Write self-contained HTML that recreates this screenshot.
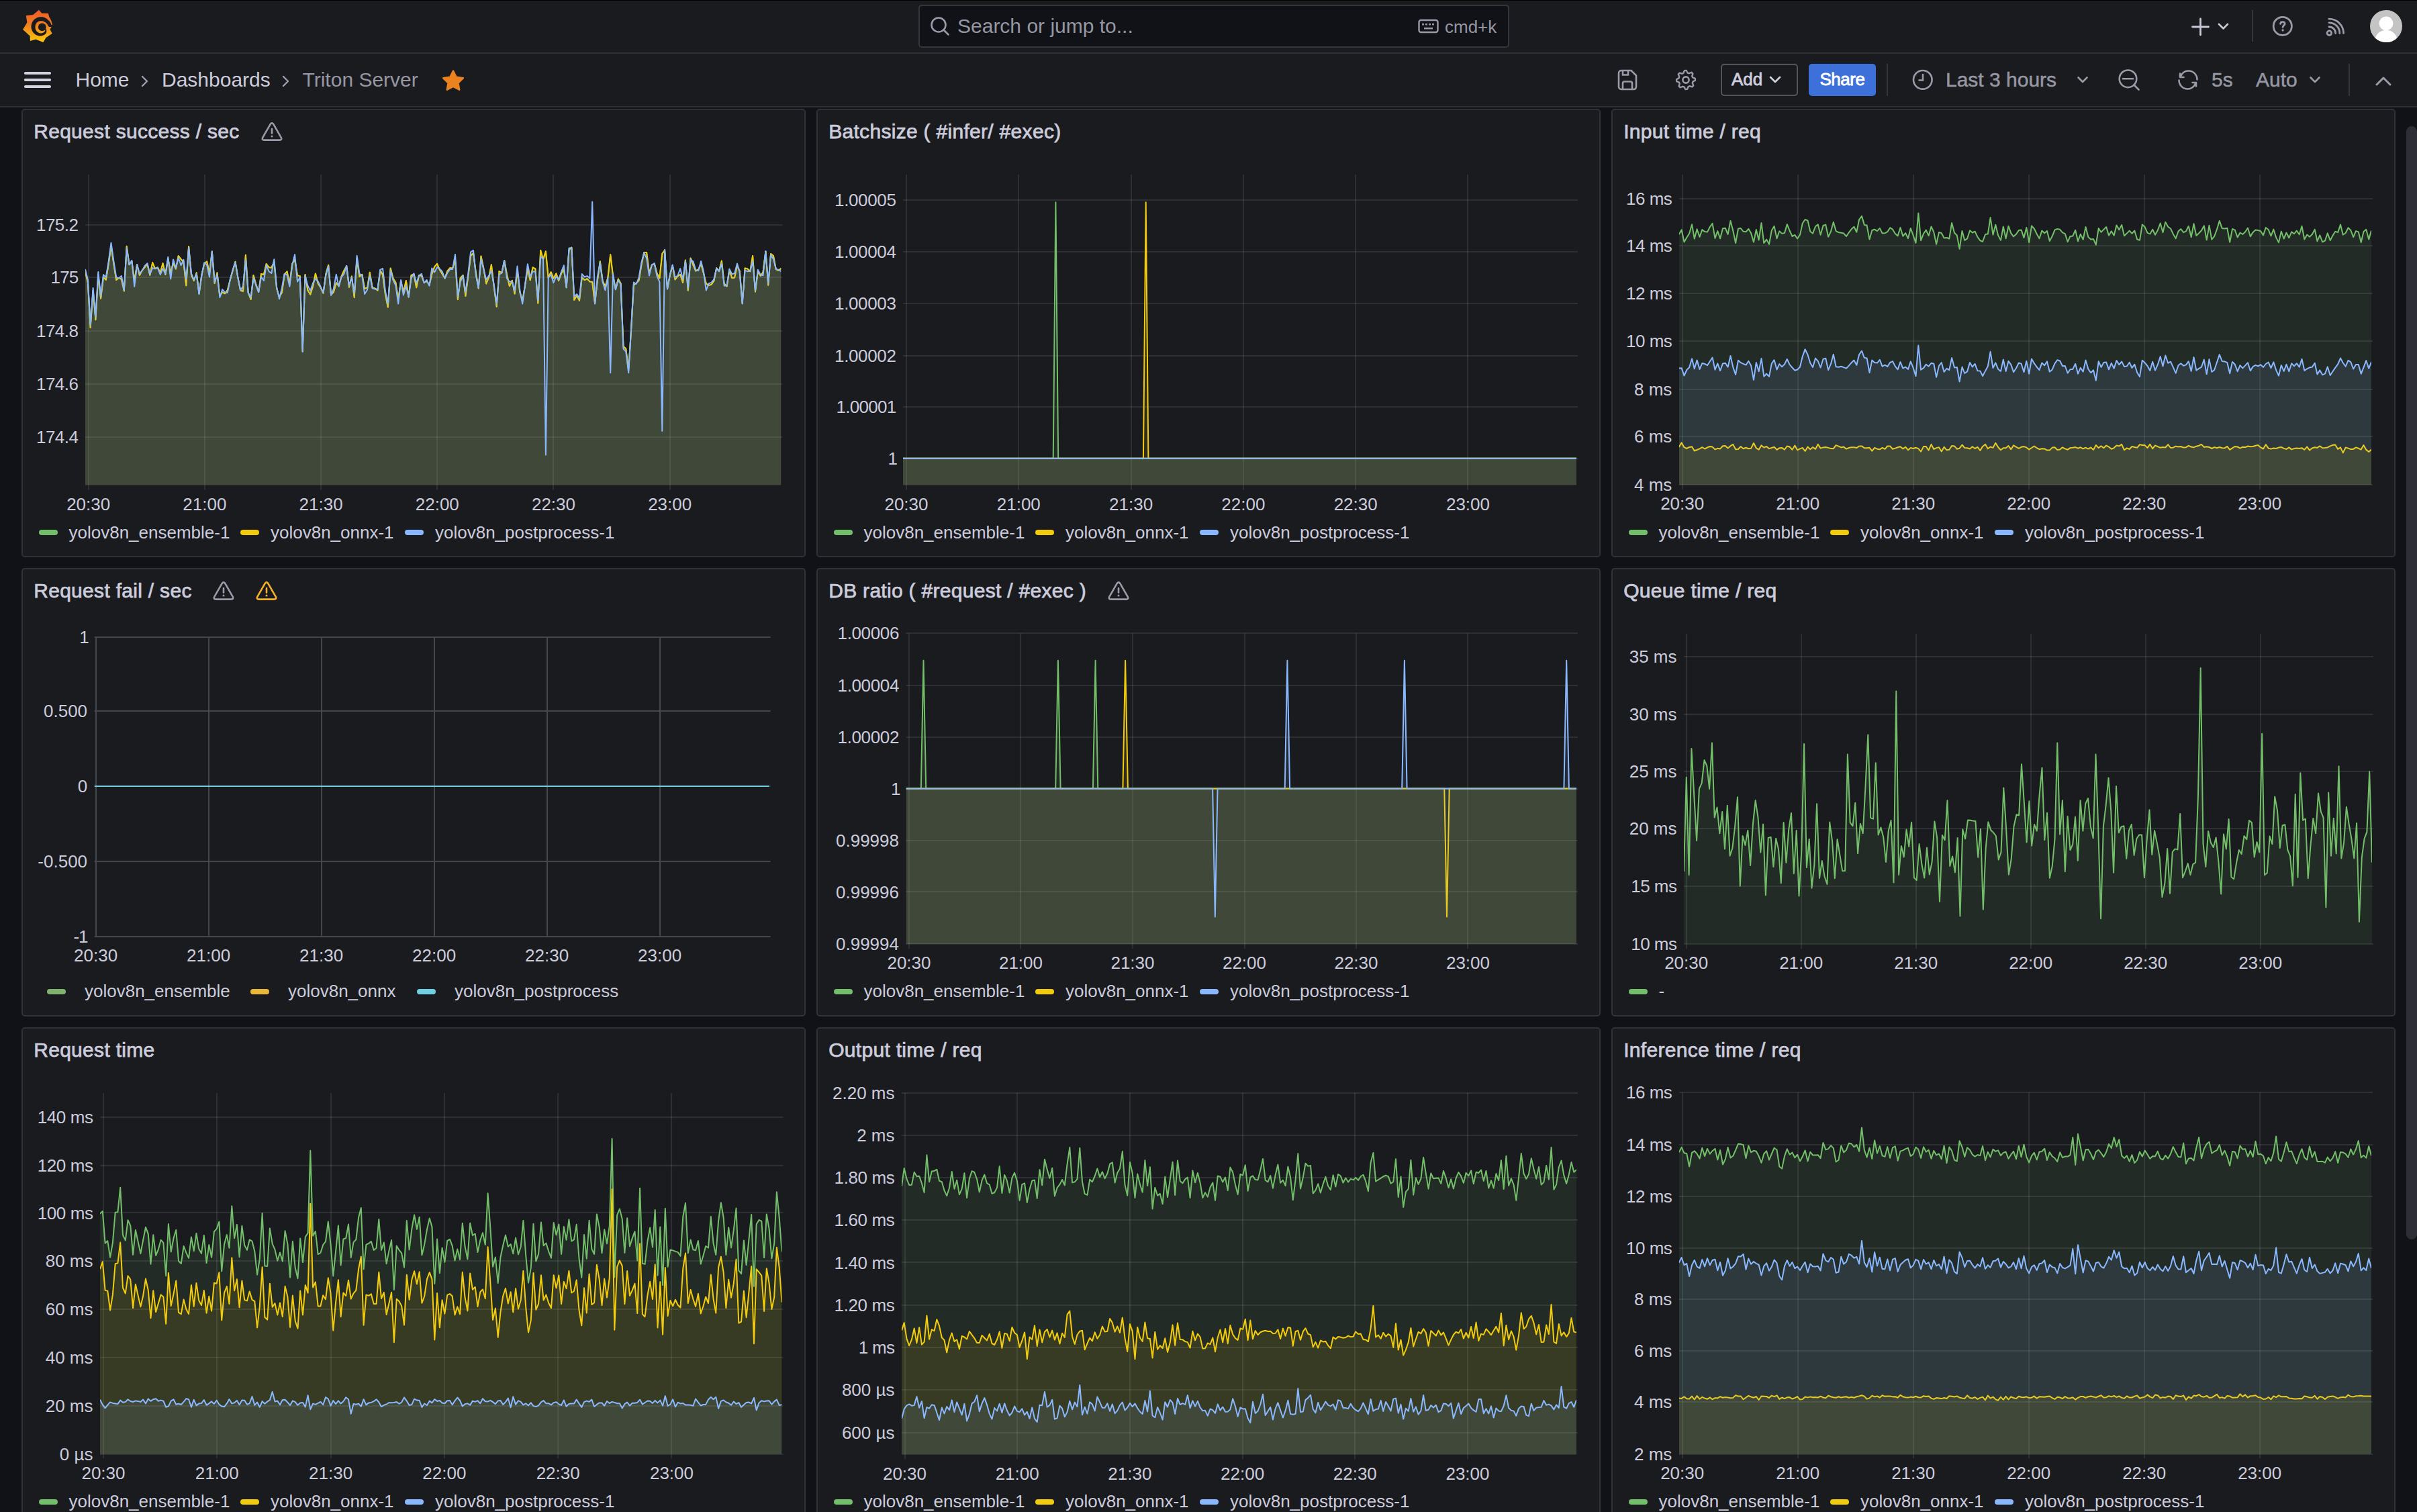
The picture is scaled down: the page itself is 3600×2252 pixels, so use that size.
<!DOCTYPE html><html><head><meta charset="utf-8"><style>
html,body{margin:0;padding:0}
body{width:3600px;height:2252px;background:#111217;overflow:hidden;position:relative;font-family:"Liberation Sans",sans-serif;}
</style></head><body>
<div style="position:absolute;left:0;top:0;width:3600px;height:78px;background:#1a1b1f;"></div>
<div style="position:absolute;left:0;top:0;width:3600px;height:1px;background:#000;"></div>
<div style="position:absolute;left:0;top:78px;width:3600px;height:2px;background:#2e3138;"></div>
<div style="position:absolute;left:0;top:80px;width:3600px;height:78px;background:#1a1b1f;"></div>
<div style="position:absolute;left:0;top:158px;width:3600px;height:2px;background:#2e3138;"></div>
<svg style="position:absolute;left:0;top:0" width="100" height="78" viewBox="0 0 100 78">
<defs><linearGradient id="lg" x1="0" y1="15" x2="0" y2="63" gradientUnits="userSpaceOnUse"><stop offset="0" stop-color="#F05A28"/><stop offset="0.45" stop-color="#F07F22"/><stop offset="1" stop-color="#FBCA0A"/></linearGradient></defs>
<path fill="url(#lg)" d="M57.9 14.8 L62.3 19.8 L71.9 19.9 L73.3 25.6 C75.6 28.8 77.6 33 78 37.8 L74.5 43.8 L77.6 50 L68.6 55.9 L64.3 62.9 L53.2 58.4 L45 61 L44.6 53.4 L34 44.1 L40.4 33.4 L38.8 23.3 L49.3 22 Z"/>
<path fill="#1a1b1f" d="M79.50 40.00 L78.52 38.74 L77.47 37.62 L76.35 36.63 L75.96 35.57 L75.50 34.54 L74.97 33.56 L74.38 32.62 L73.72 31.74 L73.02 30.91 L72.26 30.13 L71.46 29.42 L70.65 28.72 L69.82 28.07 L68.95 27.48 L68.03 26.95 L67.09 26.49 L66.12 26.10 L65.12 25.77 L64.11 25.52 L63.09 25.34 L62.05 25.23 L61.02 25.19 L59.98 25.23 L58.96 25.33 L57.95 25.51 L56.95 25.76 L55.98 26.08 L55.03 26.46 L54.11 26.91 L53.23 27.41 L52.39 27.98 L51.60 28.60 L50.85 29.28 L50.15 30.00 L49.50 30.77 L48.91 31.58 L48.39 32.43 L47.92 33.31 L47.52 34.22 L47.18 35.15 L46.91 36.10 L46.70 37.07 L46.57 38.04 L46.50 39.02 L46.50 40.00 L46.55 40.98 L46.67 41.94 L46.86 42.90 L47.11 43.84 L47.43 44.76 L47.81 45.65 L48.25 46.51 L48.75 47.34 L49.30 48.13 L49.91 48.88 L50.57 49.59 L51.27 50.25 L52.02 50.85 L52.81 51.40 L53.63 51.89 L54.49 52.33 L55.37 52.70 L56.27 53.01 L57.19 53.26 L58.13 53.44 L59.08 53.55 L60.03 53.60 L60.97 53.54 L61.91 53.38 L62.82 53.15 L63.71 52.86 L64.56 52.51 L65.39 52.10 L66.18 51.64 L66.92 51.13 L67.63 50.57 L68.29 49.97 L68.77 49.18 L69.03 48.24 L69.20 47.30 L69.29 46.39 L69.29 45.49 L69.22 44.63 L68.99 43.78 L68.46 42.90 L67.85 42.11 L67.17 41.42 L66.44 40.84 L66.44 40.84 L66.71 41.32 L66.95 41.85 L67.13 42.41 L67.27 43.01 L67.32 43.63 L67.31 44.26 L67.24 44.90 L67.12 45.55 L66.93 46.21 L66.69 46.87 L66.29 47.42 L65.77 47.82 L65.22 48.18 L64.65 48.51 L64.06 48.80 L63.44 49.04 L62.81 49.25 L62.16 49.40 L61.50 49.52 L60.83 49.58 L60.17 49.56 L59.51 49.43 L58.87 49.27 L58.24 49.06 L57.64 48.81 L57.06 48.52 L56.51 48.19 L55.98 47.82 L55.49 47.43 L55.03 47.00 L54.61 46.54 L54.22 46.07 L53.87 45.56 L53.56 45.04 L53.29 44.51 L53.06 43.96 L52.87 43.40 L52.72 42.83 L52.62 42.26 L52.55 41.69 L52.53 41.12 L52.54 40.56 L52.60 40.00 L52.58 39.45 L52.60 38.89 L52.66 38.33 L52.75 37.78 L52.89 37.23 L53.06 36.69 L53.28 36.16 L53.53 35.64 L53.82 35.14 L54.14 34.66 L54.50 34.21 L54.89 33.77 L55.32 33.36 L55.77 32.99 L56.25 32.64 L56.76 32.32 L57.29 32.04 L57.84 31.80 L58.40 31.60 L58.99 31.43 L59.59 31.31 L60.19 31.23 L60.81 31.17 L61.43 31.14 L62.06 31.16 L62.69 31.22 L63.32 31.33 L63.94 31.48 L64.56 31.68 L65.17 31.92 L65.76 32.20 L66.33 32.53 L66.89 32.91 L67.44 33.30 L68.02 33.69 L68.58 34.13 L69.11 34.62 L69.61 35.15 L70.08 35.73 L70.52 36.35 L70.91 37.01 L71.26 37.71 L71.89 38.40 L72.47 39.16 L73.00 40.00 Z"/>
<circle cx="62.8" cy="40.3" r="5.9" fill="#1a1b1f"/>
<path fill="url(#lg)" d="M56.8 45.2 C59.5 47.3 62.5 47.5 64.6 46.3 C63.8 48.6 60.5 49.4 58 48.2 Z"/>
</svg>
<div style="position:absolute;left:1368px;top:7px;width:876px;height:60px;background:#111217;border:2px solid #34363c;border-radius:5px;"></div>
<svg style="position:absolute;left:1384px;top:24px" width="32" height="30" viewBox="0 0 32 30"><circle cx="14" cy="13" r="10.5" fill="none" stroke="#9a9aa8" stroke-width="2.6"/><path d="M21.5 20.5 L28.5 27.5" stroke="#9a9aa8" stroke-width="2.6" stroke-linecap="round"/></svg>
<div style="position:absolute;left:1426px;top:22.3px;font-size:30px;line-height:34.5px;color:rgb(150,151,163);font-weight:400;white-space:nowrap;letter-spacing:0px;">Search or jump to...</div>
<svg style="position:absolute;left:2112px;top:28px" width="32" height="22" viewBox="0 0 32 22"><rect x="1.5" y="2" width="28" height="18" rx="3" fill="none" stroke="#9a9aa8" stroke-width="2.4"/><g fill="#9a9aa8"><rect x="6" y="7" width="3" height="2.5"/><rect x="11" y="7" width="3" height="2.5"/><rect x="16" y="7" width="3" height="2.5"/><rect x="21" y="7" width="3" height="2.5"/><rect x="9" y="13" width="13" height="2.5"/></g></svg>
<div style="position:absolute;left:2152px;top:25.5px;font-size:26px;line-height:29.9px;color:rgb(150,151,163);font-weight:400;white-space:nowrap;letter-spacing:0px;">cmd+k</div>
<svg style="position:absolute;left:3262px;top:24px" width="62" height="32" viewBox="0 0 62 32"><path d="M15.5 4 V28 M3.5 16 H27.5" stroke="#c8c8d6" stroke-width="2.8" stroke-linecap="round"/><path d="M43 12 L49.5 18.5 L56 12" fill="none" stroke="#c8c8d6" stroke-width="2.6" stroke-linecap="round" stroke-linejoin="round"/></svg>
<div style="position:absolute;left:3354px;top:15px;width:2px;height:47px;background:#34363c;"></div>
<svg style="position:absolute;left:3382px;top:22px" width="36" height="34" viewBox="0 0 36 34"><circle cx="17.8" cy="16.9" r="13.6" fill="none" stroke="#9a9aa8" stroke-width="2.8"/><path d="M14.6 13.6 C14.6 11.6 16 10.6 17.9 10.6 C19.8 10.6 21.1 11.8 21.1 13.4 C21.1 15.6 18.1 15.9 18.1 18.6" fill="none" stroke="#9a9aa8" stroke-width="2.8" stroke-linecap="round"/><circle cx="18.1" cy="23" r="1.7" fill="#9a9aa8"/></svg>
<svg style="position:absolute;left:3462px;top:22px" width="34" height="34" viewBox="0 0 34 34"><circle cx="7.4" cy="27.2" r="3.3" fill="none" stroke="#9a9aa8" stroke-width="2.8"/><path d="M7 18 C12.5 18 16.7 22.2 16.7 27.6 M7 11.8 C15.9 11.8 22.8 18.7 22.8 27.6 M7 6.2 C19 6.2 28.6 15.8 28.6 27.6" fill="none" stroke="#9a9aa8" stroke-width="2.8" stroke-linecap="round"/></svg>
<svg style="position:absolute;left:3530px;top:15px" width="48" height="48" viewBox="0 0 48 48"><defs><clipPath id="av"><circle cx="24" cy="24" r="24"/></clipPath></defs><circle cx="24" cy="24" r="24" fill="#c4c4c4"/><g clip-path="url(#av)" fill="#ffffff"><circle cx="24" cy="19.8" r="10.4"/><path d="M6.5 50 C6.5 37 14 30 24 30 C34 30 41.5 37 41.5 50 Z"/></g></svg>
<svg style="position:absolute;left:34px;top:104px" width="44" height="30" viewBox="0 0 44 30"><path d="M4 5 H40 M4 15 H40 M4 25 H40" stroke="rgb(210,210,224)" stroke-width="4.2" stroke-linecap="round"/></svg>
<div style="position:absolute;left:112.5px;top:102.3px;font-size:30px;line-height:34.5px;color:rgb(204,204,220);font-weight:400;white-space:nowrap;letter-spacing:0px;">Home</div>
<svg style="position:absolute;left:208px;top:111px" width="16" height="20" viewBox="0 0 16 20"><path d="M4 3 L11 10 L4 17" fill="none" stroke="#a0a0b0" stroke-width="2.4" stroke-linecap="round" stroke-linejoin="round"/></svg>
<div style="position:absolute;left:241px;top:102.3px;font-size:30px;line-height:34.5px;color:rgb(204,204,220);font-weight:400;white-space:nowrap;letter-spacing:0px;">Dashboards</div>
<svg style="position:absolute;left:418px;top:111px" width="16" height="20" viewBox="0 0 16 20"><path d="M4 3 L11 10 L4 17" fill="none" stroke="#a0a0b0" stroke-width="2.4" stroke-linecap="round" stroke-linejoin="round"/></svg>
<div style="position:absolute;left:450.5px;top:102.3px;font-size:30px;line-height:34.5px;color:rgb(150,151,163);font-weight:400;white-space:nowrap;letter-spacing:0px;">Triton Server</div>
<svg style="position:absolute;left:658px;top:104px" width="34" height="32" viewBox="0 0 34 32"><path d="M17 1.5 L21.6 10.8 L31.8 12.3 L24.4 19.5 L26.2 29.7 L17 24.9 L7.8 29.7 L9.6 19.5 L2.2 12.3 L12.4 10.8 Z" fill="#EB8220" stroke="#EB8220" stroke-width="2.5" stroke-linejoin="round"/></svg>
<svg style="position:absolute;left:2406px;top:102px" width="34" height="34" viewBox="0 0 34 34"><path d="M5 7 C5 4.5 6.5 3 9 3 H23.5 L31 10.5 V27 C31 29.5 29.5 31 27 31 H9 C6.5 31 5 29.5 5 27 Z" fill="none" stroke="#9a9aa8" stroke-width="2.6" stroke-linejoin="round"/><path d="M11 3.5 V9.5 H19 V3.5 M11 30.5 V22 C11 20.5 12 19.5 13.5 19.5 H22.5 C24 19.5 25 20.5 25 22 V30.5" fill="none" stroke="#9a9aa8" stroke-width="2.6"/></svg>
<svg style="position:absolute;left:2495px;top:103px" width="32" height="32" viewBox="0 0 32 32"><polygon points="13.95,2.15 16.69,2.02 18.62,5.52 20.62,6.24 24.34,4.76 26.37,6.60 25.26,10.45 26.17,12.36 29.85,13.95 29.98,16.69 26.48,18.62 25.76,20.62 27.24,24.34 25.40,26.37 21.55,25.26 19.64,26.17 18.05,29.85 15.31,29.98 13.38,26.48 11.38,25.76 7.66,27.24 5.63,25.40 6.74,21.55 5.83,19.64 2.15,18.05 2.02,15.31 5.52,13.38 6.24,11.38 4.76,7.66 6.60,5.63 10.45,6.74 12.36,5.83" fill="none" stroke="#9a9aa8" stroke-width="2.4" stroke-linejoin="round"/><circle cx="16" cy="16" r="4.6" fill="none" stroke="#9a9aa8" stroke-width="2.6"/></svg>
<div style="position:absolute;left:2563px;top:95px;width:111px;height:44px;border:2px solid #53555c;border-radius:5px;"></div>
<div style="position:absolute;left:2579px;top:104.0px;font-size:26px;line-height:29.9px;color:rgb(204,204,220);font-weight:400;white-space:nowrap;letter-spacing:0px;-webkit-text-stroke:0.8px rgb(204,204,220);">Add</div>
<svg style="position:absolute;left:2633px;top:110px" width="22" height="18" viewBox="0 0 22 18"><path d="M4 5 L11 12 L18 5" fill="none" stroke="rgb(210,210,224)" stroke-width="2.6" stroke-linecap="round" stroke-linejoin="round"/></svg>
<div style="position:absolute;left:2694px;top:95px;width:100px;height:48px;background:#3d71d9;border-radius:5px;"></div>
<div style="position:absolute;left:2710.5px;top:104.0px;font-size:26px;line-height:29.9px;color:#ffffff;font-weight:400;white-space:nowrap;letter-spacing:-0.5px;-webkit-text-stroke:0.8px #ffffff;">Share</div>
<div style="position:absolute;left:2810px;top:95px;width:2px;height:48px;background:#34363c;"></div>
<svg style="position:absolute;left:2847px;top:102px" width="34" height="34" viewBox="0 0 34 34"><circle cx="16.8" cy="16.8" r="13.8" fill="none" stroke="#9a9aa8" stroke-width="2.6"/><path d="M17 9 V17.5 H11.5" fill="none" stroke="#9a9aa8" stroke-width="2.6" stroke-linecap="round"/></svg>
<div style="position:absolute;left:2898px;top:102.3px;font-size:30px;line-height:34.5px;color:rgb(150,151,163);font-weight:400;white-space:nowrap;letter-spacing:0px;-webkit-text-stroke:0.5px rgb(150,151,163);">Last 3 hours</div>
<svg style="position:absolute;left:3091px;top:110px" width="22" height="18" viewBox="0 0 22 18"><path d="M4.5 5.5 L11 12 L17.5 5.5" fill="none" stroke="#9a9aa8" stroke-width="2.6" stroke-linecap="round" stroke-linejoin="round"/></svg>
<svg style="position:absolute;left:3152px;top:100px" width="38" height="38" viewBox="0 0 38 38"><circle cx="17.5" cy="17.3" r="12.8" fill="none" stroke="#9a9aa8" stroke-width="2.6"/><path d="M26.5 26.5 L33.5 33.5 M10 17.3 H25" stroke="#9a9aa8" stroke-width="2.6" stroke-linecap="round"/></svg>
<svg style="position:absolute;left:3241px;top:101px" width="36" height="36" viewBox="0 0 36 36"><path d="M6 8.5 V14 H11.5 M6.5 13.5 C9 7.5 14 4.5 18.5 4.5 C25.5 4.5 31.5 10 31.5 17.5 M30 27.5 V22 H24.5 M29.5 22.5 C27 28.5 22 31.5 17.5 31.5 C10.5 31.5 4.5 26 4.5 18.5" fill="none" stroke="#9a9aa8" stroke-width="2.6" stroke-linecap="round" stroke-linejoin="round"/></svg>
<div style="position:absolute;left:3294px;top:102.3px;font-size:30px;line-height:34.5px;color:rgb(150,151,163);font-weight:400;white-space:nowrap;letter-spacing:0px;-webkit-text-stroke:0.5px rgb(150,151,163);">5s</div>
<div style="position:absolute;left:3360px;top:102.3px;font-size:30px;line-height:34.5px;color:rgb(150,151,163);font-weight:400;white-space:nowrap;letter-spacing:0px;-webkit-text-stroke:0.5px rgb(150,151,163);">Auto</div>
<svg style="position:absolute;left:3437px;top:110px" width="22" height="18" viewBox="0 0 22 18"><path d="M4.5 5.5 L11 12 L17.5 5.5" fill="none" stroke="#9a9aa8" stroke-width="2.6" stroke-linecap="round" stroke-linejoin="round"/></svg>
<div style="position:absolute;left:3498px;top:95px;width:2px;height:48px;background:#34363c;"></div>
<svg style="position:absolute;left:3536px;top:110px" width="28" height="22" viewBox="0 0 28 22"><path d="M4 16 L14 6 L24 16" fill="none" stroke="#9a9aa8" stroke-width="3" stroke-linecap="round" stroke-linejoin="round"/></svg>
<div style="position:absolute;left:32px;top:162px;width:1164px;height:664px;background:#1a1b1f;border:2px solid #2f3239;border-radius:5px;"></div>
<div style="position:absolute;left:50.2px;top:179.3px;font-size:30px;line-height:34.5px;color:rgb(204,204,220);font-weight:400;white-space:nowrap;letter-spacing:0.3px;-webkit-text-stroke:0.75px rgb(204,204,220);">Request success / sec</div>
<div style="position:absolute;left:57.8px;top:789px;width:28px;height:8px;border-radius:4px;background:#73BF69;"></div>
<div style="position:absolute;left:102.5px;top:778.5px;font-size:26px;line-height:29.9px;color:rgb(204,204,220);font-weight:400;white-space:nowrap;letter-spacing:0px;">yolov8n_ensemble-1</div>
<div style="position:absolute;left:358px;top:789px;width:28px;height:8px;border-radius:4px;background:#F2CC0C;"></div>
<div style="position:absolute;left:403px;top:778.5px;font-size:26px;line-height:29.9px;color:rgb(204,204,220);font-weight:400;white-space:nowrap;letter-spacing:0px;">yolov8n_onnx-1</div>
<div style="position:absolute;left:603px;top:789px;width:28px;height:8px;border-radius:4px;background:#8AB8FF;"></div>
<div style="position:absolute;left:648px;top:778.5px;font-size:26px;line-height:29.9px;color:rgb(204,204,220);font-weight:400;white-space:nowrap;letter-spacing:0px;">yolov8n_postprocess-1</div>
<div style="position:absolute;left:1216px;top:162px;width:1164px;height:664px;background:#1a1b1f;border:2px solid #2f3239;border-radius:5px;"></div>
<div style="position:absolute;left:1234.2px;top:179.3px;font-size:30px;line-height:34.5px;color:rgb(204,204,220);font-weight:400;white-space:nowrap;letter-spacing:0.3px;-webkit-text-stroke:0.75px rgb(204,204,220);">Batchsize ( #infer/ #exec)</div>
<div style="position:absolute;left:1241.8px;top:789px;width:28px;height:8px;border-radius:4px;background:#73BF69;"></div>
<div style="position:absolute;left:1286.5px;top:778.5px;font-size:26px;line-height:29.9px;color:rgb(204,204,220);font-weight:400;white-space:nowrap;letter-spacing:0px;">yolov8n_ensemble-1</div>
<div style="position:absolute;left:1542px;top:789px;width:28px;height:8px;border-radius:4px;background:#F2CC0C;"></div>
<div style="position:absolute;left:1587px;top:778.5px;font-size:26px;line-height:29.9px;color:rgb(204,204,220);font-weight:400;white-space:nowrap;letter-spacing:0px;">yolov8n_onnx-1</div>
<div style="position:absolute;left:1787px;top:789px;width:28px;height:8px;border-radius:4px;background:#8AB8FF;"></div>
<div style="position:absolute;left:1832px;top:778.5px;font-size:26px;line-height:29.9px;color:rgb(204,204,220);font-weight:400;white-space:nowrap;letter-spacing:0px;">yolov8n_postprocess-1</div>
<div style="position:absolute;left:2400px;top:162px;width:1164px;height:664px;background:#1a1b1f;border:2px solid #2f3239;border-radius:5px;"></div>
<div style="position:absolute;left:2418.2px;top:179.3px;font-size:30px;line-height:34.5px;color:rgb(204,204,220);font-weight:400;white-space:nowrap;letter-spacing:0.3px;-webkit-text-stroke:0.75px rgb(204,204,220);">Input time / req</div>
<div style="position:absolute;left:2425.8px;top:789px;width:28px;height:8px;border-radius:4px;background:#73BF69;"></div>
<div style="position:absolute;left:2470.5px;top:778.5px;font-size:26px;line-height:29.9px;color:rgb(204,204,220);font-weight:400;white-space:nowrap;letter-spacing:0px;">yolov8n_ensemble-1</div>
<div style="position:absolute;left:2726px;top:789px;width:28px;height:8px;border-radius:4px;background:#F2CC0C;"></div>
<div style="position:absolute;left:2771px;top:778.5px;font-size:26px;line-height:29.9px;color:rgb(204,204,220);font-weight:400;white-space:nowrap;letter-spacing:0px;">yolov8n_onnx-1</div>
<div style="position:absolute;left:2971px;top:789px;width:28px;height:8px;border-radius:4px;background:#8AB8FF;"></div>
<div style="position:absolute;left:3016px;top:778.5px;font-size:26px;line-height:29.9px;color:rgb(204,204,220);font-weight:400;white-space:nowrap;letter-spacing:0px;">yolov8n_postprocess-1</div>
<div style="position:absolute;left:32px;top:846px;width:1164px;height:664px;background:#1a1b1f;border:2px solid #2f3239;border-radius:5px;"></div>
<div style="position:absolute;left:50.2px;top:863.4px;font-size:30px;line-height:34.5px;color:rgb(204,204,220);font-weight:400;white-space:nowrap;letter-spacing:0.3px;-webkit-text-stroke:0.75px rgb(204,204,220);">Request fail / sec</div>
<div style="position:absolute;left:69.6px;top:1472.5px;width:28px;height:8px;border-radius:4px;background:#7EB26D;"></div>
<div style="position:absolute;left:126px;top:1462.0px;font-size:26px;line-height:29.9px;color:rgb(204,204,220);font-weight:400;white-space:nowrap;letter-spacing:0px;">yolov8n_ensemble</div>
<div style="position:absolute;left:372.5px;top:1472.5px;width:28px;height:8px;border-radius:4px;background:#EAB839;"></div>
<div style="position:absolute;left:429px;top:1462.0px;font-size:26px;line-height:29.9px;color:rgb(204,204,220);font-weight:400;white-space:nowrap;letter-spacing:0px;">yolov8n_onnx</div>
<div style="position:absolute;left:620.8px;top:1472.5px;width:28px;height:8px;border-radius:4px;background:#6ED0E0;"></div>
<div style="position:absolute;left:677px;top:1462.0px;font-size:26px;line-height:29.9px;color:rgb(204,204,220);font-weight:400;white-space:nowrap;letter-spacing:0px;">yolov8n_postprocess</div>
<div style="position:absolute;left:1216px;top:846px;width:1164px;height:664px;background:#1a1b1f;border:2px solid #2f3239;border-radius:5px;"></div>
<div style="position:absolute;left:1234.2px;top:863.4px;font-size:30px;line-height:34.5px;color:rgb(204,204,220);font-weight:400;white-space:nowrap;letter-spacing:0.3px;-webkit-text-stroke:0.75px rgb(204,204,220);">DB ratio ( #request / #exec )</div>
<div style="position:absolute;left:1241.8px;top:1472.5px;width:28px;height:8px;border-radius:4px;background:#73BF69;"></div>
<div style="position:absolute;left:1286.5px;top:1462.0px;font-size:26px;line-height:29.9px;color:rgb(204,204,220);font-weight:400;white-space:nowrap;letter-spacing:0px;">yolov8n_ensemble-1</div>
<div style="position:absolute;left:1542px;top:1472.5px;width:28px;height:8px;border-radius:4px;background:#F2CC0C;"></div>
<div style="position:absolute;left:1587px;top:1462.0px;font-size:26px;line-height:29.9px;color:rgb(204,204,220);font-weight:400;white-space:nowrap;letter-spacing:0px;">yolov8n_onnx-1</div>
<div style="position:absolute;left:1787px;top:1472.5px;width:28px;height:8px;border-radius:4px;background:#8AB8FF;"></div>
<div style="position:absolute;left:1832px;top:1462.0px;font-size:26px;line-height:29.9px;color:rgb(204,204,220);font-weight:400;white-space:nowrap;letter-spacing:0px;">yolov8n_postprocess-1</div>
<div style="position:absolute;left:2400px;top:846px;width:1164px;height:664px;background:#1a1b1f;border:2px solid #2f3239;border-radius:5px;"></div>
<div style="position:absolute;left:2418.2px;top:863.4px;font-size:30px;line-height:34.5px;color:rgb(204,204,220);font-weight:400;white-space:nowrap;letter-spacing:0.3px;-webkit-text-stroke:0.75px rgb(204,204,220);">Queue time / req</div>
<div style="position:absolute;left:2425.8px;top:1472.5px;width:28px;height:8px;border-radius:4px;background:#73BF69;"></div>
<div style="position:absolute;left:2470.5px;top:1462.0px;font-size:26px;line-height:29.9px;color:rgb(204,204,220);font-weight:400;white-space:nowrap;letter-spacing:0px;">-</div>
<div style="position:absolute;left:32px;top:1530px;width:1164px;height:740px;background:#1a1b1f;border:2px solid #2f3239;border-radius:5px;"></div>
<div style="position:absolute;left:50.2px;top:1547.3px;font-size:30px;line-height:34.5px;color:rgb(204,204,220);font-weight:400;white-space:nowrap;letter-spacing:0.3px;-webkit-text-stroke:0.75px rgb(204,204,220);">Request time</div>
<div style="position:absolute;left:57.8px;top:2232.5px;width:28px;height:8px;border-radius:4px;background:#73BF69;"></div>
<div style="position:absolute;left:102.5px;top:2222.0px;font-size:26px;line-height:29.9px;color:rgb(204,204,220);font-weight:400;white-space:nowrap;letter-spacing:0px;">yolov8n_ensemble-1</div>
<div style="position:absolute;left:358px;top:2232.5px;width:28px;height:8px;border-radius:4px;background:#F2CC0C;"></div>
<div style="position:absolute;left:403px;top:2222.0px;font-size:26px;line-height:29.9px;color:rgb(204,204,220);font-weight:400;white-space:nowrap;letter-spacing:0px;">yolov8n_onnx-1</div>
<div style="position:absolute;left:603px;top:2232.5px;width:28px;height:8px;border-radius:4px;background:#8AB8FF;"></div>
<div style="position:absolute;left:648px;top:2222.0px;font-size:26px;line-height:29.9px;color:rgb(204,204,220);font-weight:400;white-space:nowrap;letter-spacing:0px;">yolov8n_postprocess-1</div>
<div style="position:absolute;left:1216px;top:1530px;width:1164px;height:740px;background:#1a1b1f;border:2px solid #2f3239;border-radius:5px;"></div>
<div style="position:absolute;left:1234.2px;top:1547.3px;font-size:30px;line-height:34.5px;color:rgb(204,204,220);font-weight:400;white-space:nowrap;letter-spacing:0.3px;-webkit-text-stroke:0.75px rgb(204,204,220);">Output time / req</div>
<div style="position:absolute;left:1241.8px;top:2232.5px;width:28px;height:8px;border-radius:4px;background:#73BF69;"></div>
<div style="position:absolute;left:1286.5px;top:2222.0px;font-size:26px;line-height:29.9px;color:rgb(204,204,220);font-weight:400;white-space:nowrap;letter-spacing:0px;">yolov8n_ensemble-1</div>
<div style="position:absolute;left:1542px;top:2232.5px;width:28px;height:8px;border-radius:4px;background:#F2CC0C;"></div>
<div style="position:absolute;left:1587px;top:2222.0px;font-size:26px;line-height:29.9px;color:rgb(204,204,220);font-weight:400;white-space:nowrap;letter-spacing:0px;">yolov8n_onnx-1</div>
<div style="position:absolute;left:1787px;top:2232.5px;width:28px;height:8px;border-radius:4px;background:#8AB8FF;"></div>
<div style="position:absolute;left:1832px;top:2222.0px;font-size:26px;line-height:29.9px;color:rgb(204,204,220);font-weight:400;white-space:nowrap;letter-spacing:0px;">yolov8n_postprocess-1</div>
<div style="position:absolute;left:2400px;top:1530px;width:1164px;height:740px;background:#1a1b1f;border:2px solid #2f3239;border-radius:5px;"></div>
<div style="position:absolute;left:2418.2px;top:1547.3px;font-size:30px;line-height:34.5px;color:rgb(204,204,220);font-weight:400;white-space:nowrap;letter-spacing:0.3px;-webkit-text-stroke:0.75px rgb(204,204,220);">Inference time / req</div>
<div style="position:absolute;left:2425.8px;top:2232.5px;width:28px;height:8px;border-radius:4px;background:#73BF69;"></div>
<div style="position:absolute;left:2470.5px;top:2222.0px;font-size:26px;line-height:29.9px;color:rgb(204,204,220);font-weight:400;white-space:nowrap;letter-spacing:0px;">yolov8n_ensemble-1</div>
<div style="position:absolute;left:2726px;top:2232.5px;width:28px;height:8px;border-radius:4px;background:#F2CC0C;"></div>
<div style="position:absolute;left:2771px;top:2222.0px;font-size:26px;line-height:29.9px;color:rgb(204,204,220);font-weight:400;white-space:nowrap;letter-spacing:0px;">yolov8n_onnx-1</div>
<div style="position:absolute;left:2971px;top:2232.5px;width:28px;height:8px;border-radius:4px;background:#8AB8FF;"></div>
<div style="position:absolute;left:3016px;top:2222.0px;font-size:26px;line-height:29.9px;color:rgb(204,204,220);font-weight:400;white-space:nowrap;letter-spacing:0px;">yolov8n_postprocess-1</div>
<svg style="position:absolute;left:0;top:0" width="3600" height="2252" viewBox="0 0 3600 2252" font-family='"Liberation Sans", sans-serif'><clipPath id="c1"><rect x="127" y="258" width="1036.5" height="464.5"/></clipPath><line x1="127" y1="335" x2="1165.5" y2="335" stroke="rgba(240,250,255,0.09)" stroke-width="2"/><text x="116.5" y="343.8" text-anchor="end" font-size="26" letter-spacing="-0.50" fill="rgb(204,204,220)">175.2</text><line x1="127" y1="413" x2="1165.5" y2="413" stroke="rgba(240,250,255,0.09)" stroke-width="2"/><text x="116.5" y="422.0" text-anchor="end" font-size="26" letter-spacing="-0.83" fill="rgb(204,204,220)">175</text><line x1="127" y1="493" x2="1165.5" y2="493" stroke="rgba(240,250,255,0.09)" stroke-width="2"/><text x="116.5" y="501.8" text-anchor="end" font-size="26" letter-spacing="-0.50" fill="rgb(204,204,220)">174.8</text><line x1="127" y1="572" x2="1165.5" y2="572" stroke="rgba(240,250,255,0.09)" stroke-width="2"/><text x="116.5" y="580.5" text-anchor="end" font-size="26" letter-spacing="-0.50" fill="rgb(204,204,220)">174.6</text><line x1="127" y1="651" x2="1165.5" y2="651" stroke="rgba(240,250,255,0.09)" stroke-width="2"/><text x="116.5" y="659.8" text-anchor="end" font-size="26" letter-spacing="-0.50" fill="rgb(204,204,220)">174.4</text><line x1="132" y1="260" x2="132" y2="729.5" stroke="rgba(240,250,255,0.09)" stroke-width="2"/><text x="131.7" y="759.5" text-anchor="middle" font-size="26" fill="rgb(204,204,220)">20:30</text><line x1="305" y1="260" x2="305" y2="729.5" stroke="rgba(240,250,255,0.09)" stroke-width="2"/><text x="304.9" y="759.5" text-anchor="middle" font-size="26" fill="rgb(204,204,220)">21:00</text><line x1="478" y1="260" x2="478" y2="729.5" stroke="rgba(240,250,255,0.09)" stroke-width="2"/><text x="478.1" y="759.5" text-anchor="middle" font-size="26" fill="rgb(204,204,220)">21:30</text><line x1="651" y1="260" x2="651" y2="729.5" stroke="rgba(240,250,255,0.09)" stroke-width="2"/><text x="651.3" y="759.5" text-anchor="middle" font-size="26" fill="rgb(204,204,220)">22:00</text><line x1="824" y1="260" x2="824" y2="729.5" stroke="rgba(240,250,255,0.09)" stroke-width="2"/><text x="824.5" y="759.5" text-anchor="middle" font-size="26" fill="rgb(204,204,220)">22:30</text><line x1="998" y1="260" x2="998" y2="729.5" stroke="rgba(240,250,255,0.09)" stroke-width="2"/><text x="997.7" y="759.5" text-anchor="middle" font-size="26" fill="rgb(204,204,220)">23:00</text><g clip-path="url(#c1)"><path d="M127.0 405.1 L130.9 420.9 L134.7 488.0 L138.6 432.7 L142.4 476.2 L146.3 409.0 L150.1 444.6 L154.0 413.0 L157.8 416.9 L161.7 393.2 L165.5 365.6 L169.4 393.2 L173.2 416.9 L177.1 413.7 L180.9 416.0 L184.8 433.4 L188.7 366.8 L192.5 394.0 L196.4 389.5 L200.2 418.2 L204.1 394.0 L207.9 410.0 L211.8 402.4 L215.6 398.0 L219.5 393.7 L223.3 409.8 L227.2 391.1 L231.0 400.1 L234.9 398.2 L238.7 406.3 L242.6 392.1 L246.4 409.1 L250.3 385.2 L254.2 405.7 L258.0 392.1 L261.9 400.5 L265.7 381.1 L269.6 386.2 L273.4 390.5 L277.3 425.3 L281.1 366.9 L285.0 409.6 L288.8 418.2 L292.7 406.2 L296.5 437.4 L300.4 409.2 L304.2 392.9 L308.1 389.4 L312.0 406.7 L315.8 374.5 L319.7 422.1 L323.5 406.3 L327.4 441.0 L331.2 435.3 L335.1 437.3 L338.9 431.8 L342.8 416.7 L346.6 403.2 L350.5 389.8 L354.3 413.1 L358.2 432.7 L362.0 433.7 L365.9 379.8 L369.7 435.6 L373.6 446.0 L377.5 410.1 L381.3 423.7 L385.2 435.0 L389.0 408.0 L392.9 409.0 L396.7 393.0 L400.6 398.2 L404.4 398.5 L408.3 390.2 L412.1 429.5 L416.0 442.2 L419.8 436.0 L423.7 408.8 L427.5 404.3 L431.4 422.6 L435.3 392.7 L439.1 386.6 L443.0 410.2 L446.8 411.1 L450.7 523.6 L454.5 409.0 L458.4 432.2 L462.2 438.6 L466.1 426.4 L469.9 407.5 L473.8 422.4 L477.6 428.1 L481.5 436.7 L485.3 408.4 L489.2 394.8 L493.1 438.8 L496.9 435.0 L500.8 421.2 L504.6 426.0 L508.5 411.7 L512.3 403.2 L516.2 396.3 L520.0 427.8 L523.9 411.5 L527.7 442.9 L531.6 384.8 L535.4 411.9 L539.3 408.8 L543.1 429.7 L547.0 428.8 L550.8 405.8 L554.7 428.6 L558.6 429.4 L562.4 432.5 L566.3 402.8 L570.1 409.6 L574.0 438.7 L577.8 457.6 L581.7 399.6 L585.5 414.5 L589.4 420.7 L593.2 446.4 L597.1 418.2 L600.9 435.4 L604.8 418.0 L608.6 442.4 L612.5 410.2 L616.4 408.0 L620.2 428.2 L624.1 409.9 L627.9 411.0 L631.8 421.0 L635.6 418.6 L639.5 424.5 L643.3 408.0 L647.2 397.3 L651.0 392.8 L654.9 401.8 L658.7 408.1 L662.6 414.6 L666.4 403.6 L670.3 399.1 L674.1 399.5 L678.0 386.7 L681.9 446.1 L685.7 414.1 L689.6 409.9 L693.4 440.9 L697.3 411.1 L701.1 381.0 L705.0 376.8 L708.8 405.6 L712.7 429.5 L716.5 381.6 L720.4 400.2 L724.2 422.4 L728.1 413.2 L731.9 394.3 L735.8 427.4 L739.7 456.7 L743.5 404.0 L747.4 406.2 L751.2 388.0 L755.1 409.2 L758.9 426.2 L762.8 417.7 L766.6 437.6 L770.5 402.3 L774.3 435.3 L778.2 447.9 L782.0 425.3 L785.9 400.6 L789.7 417.3 L793.6 398.3 L797.4 400.4 L801.3 451.6 L805.2 372.8 L809.0 386.6 L812.9 374.4 L816.7 413.9 L820.6 405.2 L824.4 414.6 L828.3 407.4 L832.1 418.1 L836.0 407.3 L839.8 401.2 L843.7 428.3 L847.5 372.0 L851.4 368.6 L855.2 446.8 L859.1 440.2 L863.0 447.6 L866.8 412.9 L870.7 417.2 L874.5 415.2 L878.4 419.4 L882.2 419.8 L886.1 452.1 L889.9 417.5 L893.8 389.3 L897.6 418.5 L901.5 426.5 L905.3 414.3 L909.2 379.2 L913.0 410.5 L916.9 430.9 L920.8 415.4 L924.6 422.3 L928.5 515.7 L932.3 519.7 L936.2 551.2 L940.0 492.0 L943.9 424.3 L947.7 422.0 L951.6 417.6 L955.4 394.5 L959.3 375.9 L963.1 375.9 L967.0 406.4 L970.8 394.7 L974.7 392.8 L978.5 407.0 L982.4 414.3 L986.3 377.9 L990.1 372.6 L994.0 430.1 L997.8 410.2 L1001.7 395.5 L1005.5 416.4 L1009.4 411.5 L1013.2 408.8 L1017.1 421.0 L1020.9 387.4 L1024.8 432.6 L1028.6 384.4 L1032.5 394.8 L1036.3 403.6 L1040.2 401.5 L1044.1 393.1 L1047.9 406.7 L1051.8 422.4 L1055.6 425.1 L1059.5 423.8 L1063.3 418.5 L1067.2 399.2 L1071.0 404.1 L1074.9 388.6 L1078.7 422.5 L1082.6 426.5 L1086.4 402.1 L1090.3 414.0 L1094.1 413.4 L1098.0 395.6 L1101.8 403.8 L1105.7 452.0 L1109.6 399.4 L1113.4 400.5 L1117.3 404.3 L1121.1 380.9 L1125.0 434.6 L1128.8 404.3 L1132.7 410.8 L1136.5 405.6 L1140.4 374.4 L1144.2 424.7 L1148.1 378.1 L1151.9 381.0 L1155.8 401.1 L1159.6 402.8 L1163.5 399.8 L1163.5 724.5 L127.0 724.5 Z" fill="#73BF69" fill-opacity="0.1"/><path d="M127.0 405.1 L130.9 420.9 L134.7 488.0 L138.6 432.7 L142.4 476.2 L146.3 409.0 L150.1 444.6 L154.0 413.0 L157.8 416.9 L161.7 393.2 L165.5 365.6 L169.4 393.2 L173.2 416.9 L177.1 413.7 L180.9 416.0 L184.8 433.4 L188.7 366.8 L192.5 394.0 L196.4 389.5 L200.2 418.2 L204.1 394.0 L207.9 410.0 L211.8 402.4 L215.6 398.0 L219.5 393.7 L223.3 409.8 L227.2 391.1 L231.0 400.1 L234.9 398.2 L238.7 406.3 L242.6 392.1 L246.4 409.1 L250.3 385.2 L254.2 405.7 L258.0 392.1 L261.9 400.5 L265.7 381.1 L269.6 386.2 L273.4 390.5 L277.3 425.3 L281.1 366.9 L285.0 409.6 L288.8 418.2 L292.7 406.2 L296.5 437.4 L300.4 409.2 L304.2 392.9 L308.1 389.4 L312.0 406.7 L315.8 374.5 L319.7 422.1 L323.5 406.3 L327.4 441.0 L331.2 435.3 L335.1 437.3 L338.9 431.8 L342.8 416.7 L346.6 403.2 L350.5 389.8 L354.3 413.1 L358.2 432.7 L362.0 433.7 L365.9 379.8 L369.7 435.6 L373.6 446.0 L377.5 410.1 L381.3 423.7 L385.2 435.0 L389.0 408.0 L392.9 409.0 L396.7 393.0 L400.6 398.2 L404.4 398.5 L408.3 390.2 L412.1 429.5 L416.0 442.2 L419.8 436.0 L423.7 408.8 L427.5 404.3 L431.4 422.6 L435.3 392.7 L439.1 386.6 L443.0 410.2 L446.8 411.1 L450.7 523.6 L454.5 409.0 L458.4 432.2 L462.2 438.6 L466.1 426.4 L469.9 407.5 L473.8 422.4 L477.6 428.1 L481.5 436.7 L485.3 408.4 L489.2 394.8 L493.1 438.8 L496.9 435.0 L500.8 421.2 L504.6 426.0 L508.5 411.7 L512.3 403.2 L516.2 396.3 L520.0 427.8 L523.9 411.5 L527.7 442.9 L531.6 384.8 L535.4 411.9 L539.3 408.8 L543.1 429.7 L547.0 428.8 L550.8 405.8 L554.7 428.6 L558.6 429.4 L562.4 432.5 L566.3 402.8 L570.1 409.6 L574.0 438.7 L577.8 457.6 L581.7 399.6 L585.5 414.5 L589.4 420.7 L593.2 446.4 L597.1 418.2 L600.9 435.4 L604.8 418.0 L608.6 442.4 L612.5 410.2 L616.4 408.0 L620.2 428.2 L624.1 409.9 L627.9 411.0 L631.8 421.0 L635.6 418.6 L639.5 424.5 L643.3 408.0 L647.2 397.3 L651.0 392.8 L654.9 401.8 L658.7 408.1 L662.6 414.6 L666.4 403.6 L670.3 399.1 L674.1 399.5 L678.0 386.7 L681.9 446.1 L685.7 414.1 L689.6 409.9 L693.4 440.9 L697.3 411.1 L701.1 381.0 L705.0 376.8 L708.8 405.6 L712.7 429.5 L716.5 381.6 L720.4 400.2 L724.2 422.4 L728.1 413.2 L731.9 394.3 L735.8 427.4 L739.7 456.7 L743.5 404.0 L747.4 406.2 L751.2 388.0 L755.1 409.2 L758.9 426.2 L762.8 417.7 L766.6 437.6 L770.5 402.3 L774.3 435.3 L778.2 447.9 L782.0 425.3 L785.9 400.6 L789.7 417.3 L793.6 398.3 L797.4 400.4 L801.3 451.6 L805.2 372.8 L809.0 386.6 L812.9 374.4 L816.7 413.9 L820.6 405.2 L824.4 414.6 L828.3 407.4 L832.1 418.1 L836.0 407.3 L839.8 401.2 L843.7 428.3 L847.5 372.0 L851.4 368.6 L855.2 446.8 L859.1 440.2 L863.0 447.6 L866.8 412.9 L870.7 417.2 L874.5 415.2 L878.4 419.4 L882.2 419.8 L886.1 452.1 L889.9 417.5 L893.8 389.3 L897.6 418.5 L901.5 426.5 L905.3 414.3 L909.2 379.2 L913.0 410.5 L916.9 430.9 L920.8 415.4 L924.6 422.3 L928.5 515.7 L932.3 519.7 L936.2 551.2 L940.0 492.0 L943.9 424.3 L947.7 422.0 L951.6 417.6 L955.4 394.5 L959.3 375.9 L963.1 375.9 L967.0 406.4 L970.8 394.7 L974.7 392.8 L978.5 407.0 L982.4 414.3 L986.3 377.9 L990.1 372.6 L994.0 430.1 L997.8 410.2 L1001.7 395.5 L1005.5 416.4 L1009.4 411.5 L1013.2 408.8 L1017.1 421.0 L1020.9 387.4 L1024.8 432.6 L1028.6 384.4 L1032.5 394.8 L1036.3 403.6 L1040.2 401.5 L1044.1 393.1 L1047.9 406.7 L1051.8 422.4 L1055.6 425.1 L1059.5 423.8 L1063.3 418.5 L1067.2 399.2 L1071.0 404.1 L1074.9 388.6 L1078.7 422.5 L1082.6 426.5 L1086.4 402.1 L1090.3 414.0 L1094.1 413.4 L1098.0 395.6 L1101.8 403.8 L1105.7 452.0 L1109.6 399.4 L1113.4 400.5 L1117.3 404.3 L1121.1 380.9 L1125.0 434.6 L1128.8 404.3 L1132.7 410.8 L1136.5 405.6 L1140.4 374.4 L1144.2 424.7 L1148.1 378.1 L1151.9 381.0 L1155.8 401.1 L1159.6 402.8 L1163.5 399.8" fill="none" stroke="#73BF69" stroke-width="2" stroke-linejoin="round"/><path d="M127.0 405.1 L130.9 420.9 L134.7 488.0 L138.6 432.7 L142.4 476.2 L146.3 409.0 L150.1 444.6 L154.0 413.0 L157.8 416.9 L161.7 393.2 L165.5 365.6 L169.4 393.2 L173.2 416.9 L177.1 413.7 L180.9 416.0 L184.8 433.4 L188.7 366.8 L192.5 394.0 L196.4 389.5 L200.2 418.2 L204.1 394.0 L207.9 410.0 L211.8 402.4 L215.6 398.0 L219.5 393.7 L223.3 409.8 L227.2 391.1 L231.0 400.1 L234.9 398.2 L238.7 406.3 L242.6 392.1 L246.4 409.1 L250.3 385.2 L254.2 405.7 L258.0 392.1 L261.9 400.5 L265.7 381.1 L269.6 386.2 L273.4 390.5 L277.3 425.3 L281.1 366.9 L285.0 409.6 L288.8 418.2 L292.7 406.2 L296.5 437.4 L300.4 409.2 L304.2 392.9 L308.1 389.4 L312.0 406.7 L315.8 374.5 L319.7 422.1 L323.5 406.3 L327.4 441.0 L331.2 435.3 L335.1 437.3 L338.9 431.8 L342.8 416.7 L346.6 403.2 L350.5 389.8 L354.3 413.1 L358.2 432.7 L362.0 433.7 L365.9 379.8 L369.7 435.6 L373.6 446.0 L377.5 410.1 L381.3 423.7 L385.2 435.0 L389.0 408.0 L392.9 409.0 L396.7 393.0 L400.6 398.2 L404.4 398.5 L408.3 390.2 L412.1 429.5 L416.0 442.2 L419.8 436.0 L423.7 408.8 L427.5 404.3 L431.4 422.6 L435.3 392.7 L439.1 386.6 L443.0 410.2 L446.8 411.1 L450.7 523.6 L454.5 409.0 L458.4 432.2 L462.2 438.6 L466.1 426.4 L469.9 407.5 L473.8 422.4 L477.6 428.1 L481.5 436.7 L485.3 408.4 L489.2 394.8 L493.1 438.8 L496.9 435.0 L500.8 421.2 L504.6 426.0 L508.5 411.7 L512.3 403.2 L516.2 396.3 L520.0 427.8 L523.9 411.5 L527.7 442.9 L531.6 384.8 L535.4 411.9 L539.3 408.8 L543.1 429.7 L547.0 428.8 L550.8 405.8 L554.7 428.6 L558.6 429.4 L562.4 432.5 L566.3 402.8 L570.1 409.6 L574.0 438.7 L577.8 457.6 L581.7 399.6 L585.5 414.5 L589.4 420.7 L593.2 446.4 L597.1 418.2 L600.9 435.4 L604.8 418.0 L608.6 442.4 L612.5 410.2 L616.4 408.0 L620.2 428.2 L624.1 409.9 L627.9 411.0 L631.8 421.0 L635.6 418.6 L639.5 424.5 L643.3 408.0 L647.2 397.3 L651.0 392.8 L654.9 401.8 L658.7 408.1 L662.6 414.6 L666.4 403.6 L670.3 399.1 L674.1 399.5 L678.0 386.7 L681.9 446.1 L685.7 414.1 L689.6 409.9 L693.4 440.9 L697.3 411.1 L701.1 381.0 L705.0 376.8 L708.8 405.6 L712.7 429.5 L716.5 381.6 L720.4 400.2 L724.2 422.4 L728.1 413.2 L731.9 394.3 L735.8 427.4 L739.7 456.7 L743.5 404.0 L747.4 406.2 L751.2 388.0 L755.1 409.2 L758.9 426.2 L762.8 417.7 L766.6 437.6 L770.5 402.3 L774.3 435.3 L778.2 447.9 L782.0 425.3 L785.9 400.6 L789.7 417.3 L793.6 398.3 L797.4 400.4 L801.3 451.6 L805.2 372.8 L809.0 386.6 L812.9 374.4 L816.7 413.9 L820.6 405.2 L824.4 414.6 L828.3 407.4 L832.1 418.1 L836.0 407.3 L839.8 401.2 L843.7 428.3 L847.5 372.0 L851.4 368.6 L855.2 446.8 L859.1 440.2 L863.0 447.6 L866.8 412.9 L870.7 417.2 L874.5 415.2 L878.4 419.4 L882.2 419.8 L886.1 452.1 L889.9 417.5 L893.8 389.3 L897.6 418.5 L901.5 426.5 L905.3 414.3 L909.2 379.2 L913.0 410.5 L916.9 430.9 L920.8 415.4 L924.6 422.3 L928.5 515.7 L932.3 519.7 L936.2 551.2 L940.0 492.0 L943.9 424.3 L947.7 422.0 L951.6 417.6 L955.4 394.5 L959.3 375.9 L963.1 375.9 L967.0 406.4 L970.8 394.7 L974.7 392.8 L978.5 407.0 L982.4 414.3 L986.3 377.9 L990.1 372.6 L994.0 430.1 L997.8 410.2 L1001.7 395.5 L1005.5 416.4 L1009.4 411.5 L1013.2 408.8 L1017.1 421.0 L1020.9 387.4 L1024.8 432.6 L1028.6 384.4 L1032.5 394.8 L1036.3 403.6 L1040.2 401.5 L1044.1 393.1 L1047.9 406.7 L1051.8 422.4 L1055.6 425.1 L1059.5 423.8 L1063.3 418.5 L1067.2 399.2 L1071.0 404.1 L1074.9 388.6 L1078.7 422.5 L1082.6 426.5 L1086.4 402.1 L1090.3 414.0 L1094.1 413.4 L1098.0 395.6 L1101.8 403.8 L1105.7 452.0 L1109.6 399.4 L1113.4 400.5 L1117.3 404.3 L1121.1 380.9 L1125.0 434.6 L1128.8 404.3 L1132.7 410.8 L1136.5 405.6 L1140.4 374.4 L1144.2 424.7 L1148.1 378.1 L1151.9 381.0 L1155.8 401.1 L1159.6 402.8 L1163.5 399.8 L1163.5 724.5 L127.0 724.5 Z" fill="#F2CC0C" fill-opacity="0.1"/><path d="M127.0 405.1 L130.9 420.9 L134.7 488.0 L138.6 432.7 L142.4 476.2 L146.3 409.0 L150.1 444.6 L154.0 413.0 L157.8 416.9 L161.7 393.2 L165.5 365.6 L169.4 393.2 L173.2 416.9 L177.1 413.7 L180.9 416.0 L184.8 433.4 L188.7 366.8 L192.5 394.0 L196.4 389.5 L200.2 418.2 L204.1 394.0 L207.9 410.0 L211.8 402.4 L215.6 398.0 L219.5 393.7 L223.3 409.8 L227.2 391.1 L231.0 400.1 L234.9 398.2 L238.7 406.3 L242.6 392.1 L246.4 409.1 L250.3 385.2 L254.2 405.7 L258.0 392.1 L261.9 400.5 L265.7 381.1 L269.6 386.2 L273.4 390.5 L277.3 425.3 L281.1 366.9 L285.0 409.6 L288.8 418.2 L292.7 406.2 L296.5 437.4 L300.4 409.2 L304.2 392.9 L308.1 389.4 L312.0 406.7 L315.8 374.5 L319.7 422.1 L323.5 406.3 L327.4 441.0 L331.2 435.3 L335.1 437.3 L338.9 431.8 L342.8 416.7 L346.6 403.2 L350.5 389.8 L354.3 413.1 L358.2 432.7 L362.0 433.7 L365.9 379.8 L369.7 435.6 L373.6 446.0 L377.5 410.1 L381.3 423.7 L385.2 435.0 L389.0 408.0 L392.9 409.0 L396.7 393.0 L400.6 398.2 L404.4 398.5 L408.3 390.2 L412.1 429.5 L416.0 442.2 L419.8 436.0 L423.7 408.8 L427.5 404.3 L431.4 422.6 L435.3 392.7 L439.1 386.6 L443.0 410.2 L446.8 411.1 L450.7 523.6 L454.5 409.0 L458.4 432.2 L462.2 438.6 L466.1 426.4 L469.9 407.5 L473.8 422.4 L477.6 428.1 L481.5 436.7 L485.3 408.4 L489.2 394.8 L493.1 438.8 L496.9 435.0 L500.8 421.2 L504.6 426.0 L508.5 411.7 L512.3 403.2 L516.2 396.3 L520.0 427.8 L523.9 411.5 L527.7 442.9 L531.6 384.8 L535.4 411.9 L539.3 408.8 L543.1 429.7 L547.0 428.8 L550.8 405.8 L554.7 428.6 L558.6 429.4 L562.4 432.5 L566.3 402.8 L570.1 409.6 L574.0 438.7 L577.8 457.6 L581.7 399.6 L585.5 414.5 L589.4 420.7 L593.2 446.4 L597.1 418.2 L600.9 435.4 L604.8 418.0 L608.6 442.4 L612.5 410.2 L616.4 408.0 L620.2 428.2 L624.1 409.9 L627.9 411.0 L631.8 421.0 L635.6 418.6 L639.5 424.5 L643.3 408.0 L647.2 397.3 L651.0 392.8 L654.9 401.8 L658.7 408.1 L662.6 414.6 L666.4 403.6 L670.3 399.1 L674.1 399.5 L678.0 386.7 L681.9 446.1 L685.7 414.1 L689.6 409.9 L693.4 440.9 L697.3 411.1 L701.1 381.0 L705.0 376.8 L708.8 405.6 L712.7 429.5 L716.5 381.6 L720.4 400.2 L724.2 422.4 L728.1 413.2 L731.9 394.3 L735.8 427.4 L739.7 456.7 L743.5 404.0 L747.4 406.2 L751.2 388.0 L755.1 409.2 L758.9 426.2 L762.8 417.7 L766.6 437.6 L770.5 402.3 L774.3 435.3 L778.2 447.9 L782.0 425.3 L785.9 400.6 L789.7 417.3 L793.6 398.3 L797.4 400.4 L801.3 451.6 L805.2 372.8 L809.0 386.6 L812.9 374.4 L816.7 413.9 L820.6 405.2 L824.4 414.6 L828.3 407.4 L832.1 418.1 L836.0 407.3 L839.8 401.2 L843.7 428.3 L847.5 372.0 L851.4 368.6 L855.2 446.8 L859.1 440.2 L863.0 447.6 L866.8 412.9 L870.7 417.2 L874.5 415.2 L878.4 419.4 L882.2 419.8 L886.1 452.1 L889.9 417.5 L893.8 389.3 L897.6 418.5 L901.5 426.5 L905.3 414.3 L909.2 379.2 L913.0 410.5 L916.9 430.9 L920.8 415.4 L924.6 422.3 L928.5 515.7 L932.3 519.7 L936.2 551.2 L940.0 492.0 L943.9 424.3 L947.7 422.0 L951.6 417.6 L955.4 394.5 L959.3 375.9 L963.1 375.9 L967.0 406.4 L970.8 394.7 L974.7 392.8 L978.5 407.0 L982.4 414.3 L986.3 377.9 L990.1 372.6 L994.0 430.1 L997.8 410.2 L1001.7 395.5 L1005.5 416.4 L1009.4 411.5 L1013.2 408.8 L1017.1 421.0 L1020.9 387.4 L1024.8 432.6 L1028.6 384.4 L1032.5 394.8 L1036.3 403.6 L1040.2 401.5 L1044.1 393.1 L1047.9 406.7 L1051.8 422.4 L1055.6 425.1 L1059.5 423.8 L1063.3 418.5 L1067.2 399.2 L1071.0 404.1 L1074.9 388.6 L1078.7 422.5 L1082.6 426.5 L1086.4 402.1 L1090.3 414.0 L1094.1 413.4 L1098.0 395.6 L1101.8 403.8 L1105.7 452.0 L1109.6 399.4 L1113.4 400.5 L1117.3 404.3 L1121.1 380.9 L1125.0 434.6 L1128.8 404.3 L1132.7 410.8 L1136.5 405.6 L1140.4 374.4 L1144.2 424.7 L1148.1 378.1 L1151.9 381.0 L1155.8 401.1 L1159.6 402.8 L1163.5 399.8" fill="none" stroke="#F2CC0C" stroke-width="2" stroke-linejoin="round"/><path d="M127.0 401.1 L130.9 416.9 L134.7 484.1 L138.6 428.8 L142.4 472.3 L146.3 405.1 L150.1 440.6 L154.0 409.1 L157.8 413.0 L161.7 389.3 L165.5 361.7 L169.4 389.3 L173.2 413.0 L177.1 414.2 L180.9 411.0 L184.8 432.0 L188.7 369.6 L192.5 394.2 L196.4 387.9 L200.2 426.8 L204.1 394.2 L207.9 407.6 L211.8 403.1 L215.6 395.9 L219.5 392.2 L223.3 408.4 L227.2 399.1 L231.0 400.2 L234.9 398.9 L238.7 409.0 L242.6 400.1 L246.4 408.2 L250.3 382.8 L254.2 415.5 L258.0 386.4 L261.9 399.1 L265.7 383.7 L269.6 395.2 L273.4 386.8 L277.3 415.7 L281.1 369.6 L285.0 407.5 L288.8 416.7 L292.7 408.0 L296.5 438.2 L300.4 410.3 L304.2 391.2 L308.1 394.5 L312.0 412.6 L315.8 374.6 L319.7 420.3 L323.5 409.2 L327.4 442.9 L331.2 431.1 L335.1 435.5 L338.9 435.9 L342.8 416.3 L346.6 402.0 L350.5 390.6 L354.3 412.9 L358.2 432.7 L362.0 426.0 L365.9 386.8 L369.7 436.4 L373.6 442.6 L377.5 414.0 L381.3 424.9 L385.2 435.1 L389.0 412.2 L392.9 418.0 L396.7 395.1 L400.6 404.4 L404.4 407.0 L408.3 386.2 L412.1 427.4 L416.0 445.2 L419.8 429.2 L423.7 407.7 L427.5 409.4 L431.4 426.7 L435.3 395.0 L439.1 379.1 L443.0 419.5 L446.8 413.2 L450.7 523.6 L454.5 410.9 L458.4 425.4 L462.2 433.0 L466.1 421.6 L469.9 415.1 L473.8 419.2 L477.6 427.1 L481.5 435.7 L485.3 410.6 L489.2 396.8 L493.1 439.9 L496.9 430.0 L500.8 408.8 L504.6 426.7 L508.5 412.7 L512.3 408.0 L516.2 395.9 L520.0 425.4 L523.9 413.2 L527.7 436.8 L531.6 380.7 L535.4 407.9 L539.3 410.0 L543.1 437.9 L547.0 431.8 L550.8 410.3 L554.7 429.5 L558.6 430.5 L562.4 430.8 L566.3 401.7 L570.1 400.0 L574.0 434.0 L577.8 452.5 L581.7 402.9 L585.5 417.1 L589.4 425.2 L593.2 452.5 L597.1 417.0 L600.9 439.6 L604.8 425.7 L608.6 442.4 L612.5 414.5 L616.4 407.4 L620.2 421.8 L624.1 410.3 L627.9 407.8 L631.8 421.4 L635.6 416.8 L639.5 425.7 L643.3 399.5 L647.2 405.5 L651.0 398.1 L654.9 400.4 L658.7 404.5 L662.6 414.6 L666.4 406.3 L670.3 400.8 L674.1 401.0 L678.0 378.9 L681.9 441.6 L685.7 419.5 L689.6 410.8 L693.4 434.9 L697.3 407.7 L701.1 375.3 L705.0 372.8 L708.8 410.3 L712.7 428.7 L716.5 386.1 L720.4 401.0 L724.2 416.4 L728.1 410.6 L731.9 403.4 L735.8 424.3 L739.7 452.5 L743.5 409.0 L747.4 406.5 L751.2 388.0 L755.1 415.1 L758.9 419.1 L762.8 419.4 L766.6 433.4 L770.5 396.6 L774.3 432.0 L778.2 452.5 L782.0 424.7 L785.9 393.2 L789.7 412.9 L793.6 404.4 L797.4 404.5 L801.3 447.2 L805.2 382.6 L809.0 385.1 L812.9 677.6 L816.7 413.3 L820.6 409.0 L824.4 421.1 L828.3 411.6 L832.1 416.4 L836.0 405.0 L839.8 395.3 L843.7 428.1 L847.5 369.6 L851.4 369.6 L855.2 441.7 L859.1 438.1 L863.0 444.0 L866.8 408.1 L870.7 412.5 L874.5 411.1 L878.4 414.6 L882.2 300.4 L886.1 452.5 L889.9 412.2 L893.8 391.4 L897.6 419.6 L901.5 432.4 L905.3 413.6 L909.2 555.2 L913.0 407.7 L916.9 431.4 L920.8 417.4 L924.6 423.0 L928.5 519.7 L932.3 523.6 L936.2 555.2 L940.0 492.0 L943.9 420.6 L947.7 422.8 L951.6 413.6 L955.4 391.0 L959.3 376.5 L963.1 384.5 L967.0 410.4 L970.8 394.7 L974.7 392.1 L978.5 411.0 L982.4 419.9 L986.3 642.1 L990.1 371.8 L994.0 430.8 L997.8 408.9 L1001.7 394.4 L1005.5 413.0 L1009.4 410.5 L1013.2 400.1 L1017.1 416.1 L1020.9 389.2 L1024.8 428.9 L1028.6 386.6 L1032.5 389.6 L1036.3 402.1 L1040.2 403.1 L1044.1 389.0 L1047.9 403.8 L1051.8 432.4 L1055.6 422.3 L1059.5 420.9 L1063.3 416.2 L1067.2 399.3 L1071.0 404.0 L1074.9 392.6 L1078.7 425.7 L1082.6 424.9 L1086.4 400.6 L1090.3 408.3 L1094.1 407.3 L1098.0 392.6 L1101.8 406.8 L1105.7 452.5 L1109.6 402.7 L1113.4 404.3 L1117.3 403.7 L1121.1 389.4 L1125.0 432.5 L1128.8 401.8 L1132.7 409.1 L1136.5 410.2 L1140.4 373.9 L1144.2 421.7 L1148.1 379.9 L1151.9 385.6 L1155.8 400.6 L1159.6 401.8 L1163.5 404.2 L1163.5 724.5 L127.0 724.5 Z" fill="#8AB8FF" fill-opacity="0.1"/><path d="M127.0 401.1 L130.9 416.9 L134.7 484.1 L138.6 428.8 L142.4 472.3 L146.3 405.1 L150.1 440.6 L154.0 409.1 L157.8 413.0 L161.7 389.3 L165.5 361.7 L169.4 389.3 L173.2 413.0 L177.1 414.2 L180.9 411.0 L184.8 432.0 L188.7 369.6 L192.5 394.2 L196.4 387.9 L200.2 426.8 L204.1 394.2 L207.9 407.6 L211.8 403.1 L215.6 395.9 L219.5 392.2 L223.3 408.4 L227.2 399.1 L231.0 400.2 L234.9 398.9 L238.7 409.0 L242.6 400.1 L246.4 408.2 L250.3 382.8 L254.2 415.5 L258.0 386.4 L261.9 399.1 L265.7 383.7 L269.6 395.2 L273.4 386.8 L277.3 415.7 L281.1 369.6 L285.0 407.5 L288.8 416.7 L292.7 408.0 L296.5 438.2 L300.4 410.3 L304.2 391.2 L308.1 394.5 L312.0 412.6 L315.8 374.6 L319.7 420.3 L323.5 409.2 L327.4 442.9 L331.2 431.1 L335.1 435.5 L338.9 435.9 L342.8 416.3 L346.6 402.0 L350.5 390.6 L354.3 412.9 L358.2 432.7 L362.0 426.0 L365.9 386.8 L369.7 436.4 L373.6 442.6 L377.5 414.0 L381.3 424.9 L385.2 435.1 L389.0 412.2 L392.9 418.0 L396.7 395.1 L400.6 404.4 L404.4 407.0 L408.3 386.2 L412.1 427.4 L416.0 445.2 L419.8 429.2 L423.7 407.7 L427.5 409.4 L431.4 426.7 L435.3 395.0 L439.1 379.1 L443.0 419.5 L446.8 413.2 L450.7 523.6 L454.5 410.9 L458.4 425.4 L462.2 433.0 L466.1 421.6 L469.9 415.1 L473.8 419.2 L477.6 427.1 L481.5 435.7 L485.3 410.6 L489.2 396.8 L493.1 439.9 L496.9 430.0 L500.8 408.8 L504.6 426.7 L508.5 412.7 L512.3 408.0 L516.2 395.9 L520.0 425.4 L523.9 413.2 L527.7 436.8 L531.6 380.7 L535.4 407.9 L539.3 410.0 L543.1 437.9 L547.0 431.8 L550.8 410.3 L554.7 429.5 L558.6 430.5 L562.4 430.8 L566.3 401.7 L570.1 400.0 L574.0 434.0 L577.8 452.5 L581.7 402.9 L585.5 417.1 L589.4 425.2 L593.2 452.5 L597.1 417.0 L600.9 439.6 L604.8 425.7 L608.6 442.4 L612.5 414.5 L616.4 407.4 L620.2 421.8 L624.1 410.3 L627.9 407.8 L631.8 421.4 L635.6 416.8 L639.5 425.7 L643.3 399.5 L647.2 405.5 L651.0 398.1 L654.9 400.4 L658.7 404.5 L662.6 414.6 L666.4 406.3 L670.3 400.8 L674.1 401.0 L678.0 378.9 L681.9 441.6 L685.7 419.5 L689.6 410.8 L693.4 434.9 L697.3 407.7 L701.1 375.3 L705.0 372.8 L708.8 410.3 L712.7 428.7 L716.5 386.1 L720.4 401.0 L724.2 416.4 L728.1 410.6 L731.9 403.4 L735.8 424.3 L739.7 452.5 L743.5 409.0 L747.4 406.5 L751.2 388.0 L755.1 415.1 L758.9 419.1 L762.8 419.4 L766.6 433.4 L770.5 396.6 L774.3 432.0 L778.2 452.5 L782.0 424.7 L785.9 393.2 L789.7 412.9 L793.6 404.4 L797.4 404.5 L801.3 447.2 L805.2 382.6 L809.0 385.1 L812.9 677.6 L816.7 413.3 L820.6 409.0 L824.4 421.1 L828.3 411.6 L832.1 416.4 L836.0 405.0 L839.8 395.3 L843.7 428.1 L847.5 369.6 L851.4 369.6 L855.2 441.7 L859.1 438.1 L863.0 444.0 L866.8 408.1 L870.7 412.5 L874.5 411.1 L878.4 414.6 L882.2 300.4 L886.1 452.5 L889.9 412.2 L893.8 391.4 L897.6 419.6 L901.5 432.4 L905.3 413.6 L909.2 555.2 L913.0 407.7 L916.9 431.4 L920.8 417.4 L924.6 423.0 L928.5 519.7 L932.3 523.6 L936.2 555.2 L940.0 492.0 L943.9 420.6 L947.7 422.8 L951.6 413.6 L955.4 391.0 L959.3 376.5 L963.1 384.5 L967.0 410.4 L970.8 394.7 L974.7 392.1 L978.5 411.0 L982.4 419.9 L986.3 642.1 L990.1 371.8 L994.0 430.8 L997.8 408.9 L1001.7 394.4 L1005.5 413.0 L1009.4 410.5 L1013.2 400.1 L1017.1 416.1 L1020.9 389.2 L1024.8 428.9 L1028.6 386.6 L1032.5 389.6 L1036.3 402.1 L1040.2 403.1 L1044.1 389.0 L1047.9 403.8 L1051.8 432.4 L1055.6 422.3 L1059.5 420.9 L1063.3 416.2 L1067.2 399.3 L1071.0 404.0 L1074.9 392.6 L1078.7 425.7 L1082.6 424.9 L1086.4 400.6 L1090.3 408.3 L1094.1 407.3 L1098.0 392.6 L1101.8 406.8 L1105.7 452.5 L1109.6 402.7 L1113.4 404.3 L1117.3 403.7 L1121.1 389.4 L1125.0 432.5 L1128.8 401.8 L1132.7 409.1 L1136.5 410.2 L1140.4 373.9 L1144.2 421.7 L1148.1 379.9 L1151.9 385.6 L1155.8 400.6 L1159.6 401.8 L1163.5 404.2" fill="none" stroke="#8AB8FF" stroke-width="2" stroke-linejoin="round"/></g><clipPath id="c2"><rect x="1345" y="258" width="1003" height="464.5"/></clipPath><line x1="1345" y1="298" x2="2350" y2="298" stroke="rgba(240,250,255,0.09)" stroke-width="2"/><text x="1334.5" y="306.5" text-anchor="end" font-size="26" letter-spacing="-0.36" fill="rgb(204,204,220)">1.00005</text><line x1="1345" y1="375" x2="2350" y2="375" stroke="rgba(240,250,255,0.09)" stroke-width="2"/><text x="1334.5" y="384.0" text-anchor="end" font-size="26" letter-spacing="-0.36" fill="rgb(204,204,220)">1.00004</text><line x1="1345" y1="452" x2="2350" y2="452" stroke="rgba(240,250,255,0.09)" stroke-width="2"/><text x="1334.5" y="461.0" text-anchor="end" font-size="26" letter-spacing="-0.36" fill="rgb(204,204,220)">1.00003</text><line x1="1345" y1="530" x2="2350" y2="530" stroke="rgba(240,250,255,0.09)" stroke-width="2"/><text x="1334.5" y="539.0" text-anchor="end" font-size="26" letter-spacing="-0.36" fill="rgb(204,204,220)">1.00002</text><line x1="1345" y1="606" x2="2350" y2="606" stroke="rgba(240,250,255,0.09)" stroke-width="2"/><text x="1334.5" y="615.0" text-anchor="end" font-size="26" letter-spacing="-0.71" fill="rgb(204,204,220)">1.00001</text><line x1="1345" y1="683" x2="2350" y2="683" stroke="rgba(240,250,255,0.09)" stroke-width="2"/><text x="1334.5" y="691.8" text-anchor="end" font-size="26" letter-spacing="-2.50" fill="rgb(204,204,220)">1</text><line x1="1350" y1="260" x2="1350" y2="729.5" stroke="rgba(240,250,255,0.09)" stroke-width="2"/><text x="1350.0" y="759.5" text-anchor="middle" font-size="26" fill="rgb(204,204,220)">20:30</text><line x1="1517" y1="260" x2="1517" y2="729.5" stroke="rgba(240,250,255,0.09)" stroke-width="2"/><text x="1517.3" y="759.5" text-anchor="middle" font-size="26" fill="rgb(204,204,220)">21:00</text><line x1="1685" y1="260" x2="1685" y2="729.5" stroke="rgba(240,250,255,0.09)" stroke-width="2"/><text x="1684.6" y="759.5" text-anchor="middle" font-size="26" fill="rgb(204,204,220)">21:30</text><line x1="1852" y1="260" x2="1852" y2="729.5" stroke="rgba(240,250,255,0.09)" stroke-width="2"/><text x="1851.9" y="759.5" text-anchor="middle" font-size="26" fill="rgb(204,204,220)">22:00</text><line x1="2019" y1="260" x2="2019" y2="729.5" stroke="rgba(240,250,255,0.09)" stroke-width="2"/><text x="2019.2" y="759.5" text-anchor="middle" font-size="26" fill="rgb(204,204,220)">22:30</text><line x1="2186" y1="260" x2="2186" y2="729.5" stroke="rgba(240,250,255,0.09)" stroke-width="2"/><text x="2186.5" y="759.5" text-anchor="middle" font-size="26" fill="rgb(204,204,220)">23:00</text><g clip-path="url(#c2)"><path d="M1345.0 682.8 L1348.7 682.8 L1352.5 682.8 L1356.2 682.8 L1359.9 682.8 L1363.6 682.8 L1367.4 682.8 L1371.1 682.8 L1374.8 682.8 L1378.6 682.8 L1382.3 682.8 L1386.0 682.8 L1389.7 682.8 L1393.5 682.8 L1397.2 682.8 L1400.9 682.8 L1404.7 682.8 L1408.4 682.8 L1412.1 682.8 L1415.8 682.8 L1419.6 682.8 L1423.3 682.8 L1427.0 682.8 L1430.8 682.8 L1434.5 682.8 L1438.2 682.8 L1441.9 682.8 L1445.7 682.8 L1449.4 682.8 L1453.1 682.8 L1456.9 682.8 L1460.6 682.8 L1464.3 682.8 L1468.0 682.8 L1471.8 682.8 L1475.5 682.8 L1479.2 682.8 L1483.0 682.8 L1486.7 682.8 L1490.4 682.8 L1494.1 682.8 L1497.9 682.8 L1501.6 682.8 L1505.3 682.8 L1509.1 682.8 L1512.8 682.8 L1516.5 682.8 L1520.2 682.8 L1524.0 682.8 L1527.7 682.8 L1531.4 682.8 L1535.2 682.8 L1538.9 682.8 L1542.6 682.8 L1546.3 682.8 L1550.1 682.8 L1553.8 682.8 L1557.5 682.8 L1561.3 682.8 L1565.0 682.8 L1568.7 682.8 L1572.4 301.2 L1576.2 682.8 L1579.9 682.8 L1583.6 682.8 L1587.4 682.8 L1591.1 682.8 L1594.8 682.8 L1598.5 682.8 L1602.3 682.8 L1606.0 682.8 L1609.7 682.8 L1613.5 682.8 L1617.2 682.8 L1620.9 682.8 L1624.6 682.8 L1628.4 682.8 L1632.1 682.8 L1635.8 682.8 L1639.6 682.8 L1643.3 682.8 L1647.0 682.8 L1650.7 682.8 L1654.5 682.8 L1658.2 682.8 L1661.9 682.8 L1665.7 682.8 L1669.4 682.8 L1673.1 682.8 L1676.8 682.8 L1680.6 682.8 L1684.3 682.8 L1688.0 682.8 L1691.8 682.8 L1695.5 682.8 L1699.2 682.8 L1702.9 682.8 L1706.7 682.8 L1710.4 682.8 L1714.1 682.8 L1717.9 682.8 L1721.6 682.8 L1725.3 682.8 L1729.0 682.8 L1732.8 682.8 L1736.5 682.8 L1740.2 682.8 L1744.0 682.8 L1747.7 682.8 L1751.4 682.8 L1755.1 682.8 L1758.9 682.8 L1762.6 682.8 L1766.3 682.8 L1770.1 682.8 L1773.8 682.8 L1777.5 682.8 L1781.2 682.8 L1785.0 682.8 L1788.7 682.8 L1792.4 682.8 L1796.2 682.8 L1799.9 682.8 L1803.6 682.8 L1807.3 682.8 L1811.1 682.8 L1814.8 682.8 L1818.5 682.8 L1822.3 682.8 L1826.0 682.8 L1829.7 682.8 L1833.4 682.8 L1837.2 682.8 L1840.9 682.8 L1844.6 682.8 L1848.4 682.8 L1852.1 682.8 L1855.8 682.8 L1859.6 682.8 L1863.3 682.8 L1867.0 682.8 L1870.7 682.8 L1874.5 682.8 L1878.2 682.8 L1881.9 682.8 L1885.7 682.8 L1889.4 682.8 L1893.1 682.8 L1896.8 682.8 L1900.6 682.8 L1904.3 682.8 L1908.0 682.8 L1911.8 682.8 L1915.5 682.8 L1919.2 682.8 L1922.9 682.8 L1926.7 682.8 L1930.4 682.8 L1934.1 682.8 L1937.9 682.8 L1941.6 682.8 L1945.3 682.8 L1949.0 682.8 L1952.8 682.8 L1956.5 682.8 L1960.2 682.8 L1964.0 682.8 L1967.7 682.8 L1971.4 682.8 L1975.1 682.8 L1978.9 682.8 L1982.6 682.8 L1986.3 682.8 L1990.1 682.8 L1993.8 682.8 L1997.5 682.8 L2001.2 682.8 L2005.0 682.8 L2008.7 682.8 L2012.4 682.8 L2016.2 682.8 L2019.9 682.8 L2023.6 682.8 L2027.3 682.8 L2031.1 682.8 L2034.8 682.8 L2038.5 682.8 L2042.3 682.8 L2046.0 682.8 L2049.7 682.8 L2053.4 682.8 L2057.2 682.8 L2060.9 682.8 L2064.6 682.8 L2068.4 682.8 L2072.1 682.8 L2075.8 682.8 L2079.5 682.8 L2083.3 682.8 L2087.0 682.8 L2090.7 682.8 L2094.5 682.8 L2098.2 682.8 L2101.9 682.8 L2105.6 682.8 L2109.4 682.8 L2113.1 682.8 L2116.8 682.8 L2120.6 682.8 L2124.3 682.8 L2128.0 682.8 L2131.7 682.8 L2135.5 682.8 L2139.2 682.8 L2142.9 682.8 L2146.7 682.8 L2150.4 682.8 L2154.1 682.8 L2157.8 682.8 L2161.6 682.8 L2165.3 682.8 L2169.0 682.8 L2172.8 682.8 L2176.5 682.8 L2180.2 682.8 L2183.9 682.8 L2187.7 682.8 L2191.4 682.8 L2195.1 682.8 L2198.9 682.8 L2202.6 682.8 L2206.3 682.8 L2210.0 682.8 L2213.8 682.8 L2217.5 682.8 L2221.2 682.8 L2225.0 682.8 L2228.7 682.8 L2232.4 682.8 L2236.1 682.8 L2239.9 682.8 L2243.6 682.8 L2247.3 682.8 L2251.1 682.8 L2254.8 682.8 L2258.5 682.8 L2262.2 682.8 L2266.0 682.8 L2269.7 682.8 L2273.4 682.8 L2277.2 682.8 L2280.9 682.8 L2284.6 682.8 L2288.3 682.8 L2292.1 682.8 L2295.8 682.8 L2299.5 682.8 L2303.3 682.8 L2307.0 682.8 L2310.7 682.8 L2314.4 682.8 L2318.2 682.8 L2321.9 682.8 L2325.6 682.8 L2329.4 682.8 L2333.1 682.8 L2336.8 682.8 L2340.5 682.8 L2344.3 682.8 L2348.0 682.8 L2348.0 724.5 L1345.0 724.5 Z" fill="#73BF69" fill-opacity="0.1"/><path d="M1345.0 682.8 L1348.7 682.8 L1352.5 682.8 L1356.2 682.8 L1359.9 682.8 L1363.6 682.8 L1367.4 682.8 L1371.1 682.8 L1374.8 682.8 L1378.6 682.8 L1382.3 682.8 L1386.0 682.8 L1389.7 682.8 L1393.5 682.8 L1397.2 682.8 L1400.9 682.8 L1404.7 682.8 L1408.4 682.8 L1412.1 682.8 L1415.8 682.8 L1419.6 682.8 L1423.3 682.8 L1427.0 682.8 L1430.8 682.8 L1434.5 682.8 L1438.2 682.8 L1441.9 682.8 L1445.7 682.8 L1449.4 682.8 L1453.1 682.8 L1456.9 682.8 L1460.6 682.8 L1464.3 682.8 L1468.0 682.8 L1471.8 682.8 L1475.5 682.8 L1479.2 682.8 L1483.0 682.8 L1486.7 682.8 L1490.4 682.8 L1494.1 682.8 L1497.9 682.8 L1501.6 682.8 L1505.3 682.8 L1509.1 682.8 L1512.8 682.8 L1516.5 682.8 L1520.2 682.8 L1524.0 682.8 L1527.7 682.8 L1531.4 682.8 L1535.2 682.8 L1538.9 682.8 L1542.6 682.8 L1546.3 682.8 L1550.1 682.8 L1553.8 682.8 L1557.5 682.8 L1561.3 682.8 L1565.0 682.8 L1568.7 682.8 L1572.4 301.2 L1576.2 682.8 L1579.9 682.8 L1583.6 682.8 L1587.4 682.8 L1591.1 682.8 L1594.8 682.8 L1598.5 682.8 L1602.3 682.8 L1606.0 682.8 L1609.7 682.8 L1613.5 682.8 L1617.2 682.8 L1620.9 682.8 L1624.6 682.8 L1628.4 682.8 L1632.1 682.8 L1635.8 682.8 L1639.6 682.8 L1643.3 682.8 L1647.0 682.8 L1650.7 682.8 L1654.5 682.8 L1658.2 682.8 L1661.9 682.8 L1665.7 682.8 L1669.4 682.8 L1673.1 682.8 L1676.8 682.8 L1680.6 682.8 L1684.3 682.8 L1688.0 682.8 L1691.8 682.8 L1695.5 682.8 L1699.2 682.8 L1702.9 682.8 L1706.7 682.8 L1710.4 682.8 L1714.1 682.8 L1717.9 682.8 L1721.6 682.8 L1725.3 682.8 L1729.0 682.8 L1732.8 682.8 L1736.5 682.8 L1740.2 682.8 L1744.0 682.8 L1747.7 682.8 L1751.4 682.8 L1755.1 682.8 L1758.9 682.8 L1762.6 682.8 L1766.3 682.8 L1770.1 682.8 L1773.8 682.8 L1777.5 682.8 L1781.2 682.8 L1785.0 682.8 L1788.7 682.8 L1792.4 682.8 L1796.2 682.8 L1799.9 682.8 L1803.6 682.8 L1807.3 682.8 L1811.1 682.8 L1814.8 682.8 L1818.5 682.8 L1822.3 682.8 L1826.0 682.8 L1829.7 682.8 L1833.4 682.8 L1837.2 682.8 L1840.9 682.8 L1844.6 682.8 L1848.4 682.8 L1852.1 682.8 L1855.8 682.8 L1859.6 682.8 L1863.3 682.8 L1867.0 682.8 L1870.7 682.8 L1874.5 682.8 L1878.2 682.8 L1881.9 682.8 L1885.7 682.8 L1889.4 682.8 L1893.1 682.8 L1896.8 682.8 L1900.6 682.8 L1904.3 682.8 L1908.0 682.8 L1911.8 682.8 L1915.5 682.8 L1919.2 682.8 L1922.9 682.8 L1926.7 682.8 L1930.4 682.8 L1934.1 682.8 L1937.9 682.8 L1941.6 682.8 L1945.3 682.8 L1949.0 682.8 L1952.8 682.8 L1956.5 682.8 L1960.2 682.8 L1964.0 682.8 L1967.7 682.8 L1971.4 682.8 L1975.1 682.8 L1978.9 682.8 L1982.6 682.8 L1986.3 682.8 L1990.1 682.8 L1993.8 682.8 L1997.5 682.8 L2001.2 682.8 L2005.0 682.8 L2008.7 682.8 L2012.4 682.8 L2016.2 682.8 L2019.9 682.8 L2023.6 682.8 L2027.3 682.8 L2031.1 682.8 L2034.8 682.8 L2038.5 682.8 L2042.3 682.8 L2046.0 682.8 L2049.7 682.8 L2053.4 682.8 L2057.2 682.8 L2060.9 682.8 L2064.6 682.8 L2068.4 682.8 L2072.1 682.8 L2075.8 682.8 L2079.5 682.8 L2083.3 682.8 L2087.0 682.8 L2090.7 682.8 L2094.5 682.8 L2098.2 682.8 L2101.9 682.8 L2105.6 682.8 L2109.4 682.8 L2113.1 682.8 L2116.8 682.8 L2120.6 682.8 L2124.3 682.8 L2128.0 682.8 L2131.7 682.8 L2135.5 682.8 L2139.2 682.8 L2142.9 682.8 L2146.7 682.8 L2150.4 682.8 L2154.1 682.8 L2157.8 682.8 L2161.6 682.8 L2165.3 682.8 L2169.0 682.8 L2172.8 682.8 L2176.5 682.8 L2180.2 682.8 L2183.9 682.8 L2187.7 682.8 L2191.4 682.8 L2195.1 682.8 L2198.9 682.8 L2202.6 682.8 L2206.3 682.8 L2210.0 682.8 L2213.8 682.8 L2217.5 682.8 L2221.2 682.8 L2225.0 682.8 L2228.7 682.8 L2232.4 682.8 L2236.1 682.8 L2239.9 682.8 L2243.6 682.8 L2247.3 682.8 L2251.1 682.8 L2254.8 682.8 L2258.5 682.8 L2262.2 682.8 L2266.0 682.8 L2269.7 682.8 L2273.4 682.8 L2277.2 682.8 L2280.9 682.8 L2284.6 682.8 L2288.3 682.8 L2292.1 682.8 L2295.8 682.8 L2299.5 682.8 L2303.3 682.8 L2307.0 682.8 L2310.7 682.8 L2314.4 682.8 L2318.2 682.8 L2321.9 682.8 L2325.6 682.8 L2329.4 682.8 L2333.1 682.8 L2336.8 682.8 L2340.5 682.8 L2344.3 682.8 L2348.0 682.8" fill="none" stroke="#73BF69" stroke-width="2" stroke-linejoin="round"/><path d="M1345.0 682.8 L1348.7 682.8 L1352.5 682.8 L1356.2 682.8 L1359.9 682.8 L1363.6 682.8 L1367.4 682.8 L1371.1 682.8 L1374.8 682.8 L1378.6 682.8 L1382.3 682.8 L1386.0 682.8 L1389.7 682.8 L1393.5 682.8 L1397.2 682.8 L1400.9 682.8 L1404.7 682.8 L1408.4 682.8 L1412.1 682.8 L1415.8 682.8 L1419.6 682.8 L1423.3 682.8 L1427.0 682.8 L1430.8 682.8 L1434.5 682.8 L1438.2 682.8 L1441.9 682.8 L1445.7 682.8 L1449.4 682.8 L1453.1 682.8 L1456.9 682.8 L1460.6 682.8 L1464.3 682.8 L1468.0 682.8 L1471.8 682.8 L1475.5 682.8 L1479.2 682.8 L1483.0 682.8 L1486.7 682.8 L1490.4 682.8 L1494.1 682.8 L1497.9 682.8 L1501.6 682.8 L1505.3 682.8 L1509.1 682.8 L1512.8 682.8 L1516.5 682.8 L1520.2 682.8 L1524.0 682.8 L1527.7 682.8 L1531.4 682.8 L1535.2 682.8 L1538.9 682.8 L1542.6 682.8 L1546.3 682.8 L1550.1 682.8 L1553.8 682.8 L1557.5 682.8 L1561.3 682.8 L1565.0 682.8 L1568.7 682.8 L1572.4 682.8 L1576.2 682.8 L1579.9 682.8 L1583.6 682.8 L1587.4 682.8 L1591.1 682.8 L1594.8 682.8 L1598.5 682.8 L1602.3 682.8 L1606.0 682.8 L1609.7 682.8 L1613.5 682.8 L1617.2 682.8 L1620.9 682.8 L1624.6 682.8 L1628.4 682.8 L1632.1 682.8 L1635.8 682.8 L1639.6 682.8 L1643.3 682.8 L1647.0 682.8 L1650.7 682.8 L1654.5 682.8 L1658.2 682.8 L1661.9 682.8 L1665.7 682.8 L1669.4 682.8 L1673.1 682.8 L1676.8 682.8 L1680.6 682.8 L1684.3 682.8 L1688.0 682.8 L1691.8 682.8 L1695.5 682.8 L1699.2 682.8 L1702.9 682.8 L1706.7 301.2 L1710.4 682.8 L1714.1 682.8 L1717.9 682.8 L1721.6 682.8 L1725.3 682.8 L1729.0 682.8 L1732.8 682.8 L1736.5 682.8 L1740.2 682.8 L1744.0 682.8 L1747.7 682.8 L1751.4 682.8 L1755.1 682.8 L1758.9 682.8 L1762.6 682.8 L1766.3 682.8 L1770.1 682.8 L1773.8 682.8 L1777.5 682.8 L1781.2 682.8 L1785.0 682.8 L1788.7 682.8 L1792.4 682.8 L1796.2 682.8 L1799.9 682.8 L1803.6 682.8 L1807.3 682.8 L1811.1 682.8 L1814.8 682.8 L1818.5 682.8 L1822.3 682.8 L1826.0 682.8 L1829.7 682.8 L1833.4 682.8 L1837.2 682.8 L1840.9 682.8 L1844.6 682.8 L1848.4 682.8 L1852.1 682.8 L1855.8 682.8 L1859.6 682.8 L1863.3 682.8 L1867.0 682.8 L1870.7 682.8 L1874.5 682.8 L1878.2 682.8 L1881.9 682.8 L1885.7 682.8 L1889.4 682.8 L1893.1 682.8 L1896.8 682.8 L1900.6 682.8 L1904.3 682.8 L1908.0 682.8 L1911.8 682.8 L1915.5 682.8 L1919.2 682.8 L1922.9 682.8 L1926.7 682.8 L1930.4 682.8 L1934.1 682.8 L1937.9 682.8 L1941.6 682.8 L1945.3 682.8 L1949.0 682.8 L1952.8 682.8 L1956.5 682.8 L1960.2 682.8 L1964.0 682.8 L1967.7 682.8 L1971.4 682.8 L1975.1 682.8 L1978.9 682.8 L1982.6 682.8 L1986.3 682.8 L1990.1 682.8 L1993.8 682.8 L1997.5 682.8 L2001.2 682.8 L2005.0 682.8 L2008.7 682.8 L2012.4 682.8 L2016.2 682.8 L2019.9 682.8 L2023.6 682.8 L2027.3 682.8 L2031.1 682.8 L2034.8 682.8 L2038.5 682.8 L2042.3 682.8 L2046.0 682.8 L2049.7 682.8 L2053.4 682.8 L2057.2 682.8 L2060.9 682.8 L2064.6 682.8 L2068.4 682.8 L2072.1 682.8 L2075.8 682.8 L2079.5 682.8 L2083.3 682.8 L2087.0 682.8 L2090.7 682.8 L2094.5 682.8 L2098.2 682.8 L2101.9 682.8 L2105.6 682.8 L2109.4 682.8 L2113.1 682.8 L2116.8 682.8 L2120.6 682.8 L2124.3 682.8 L2128.0 682.8 L2131.7 682.8 L2135.5 682.8 L2139.2 682.8 L2142.9 682.8 L2146.7 682.8 L2150.4 682.8 L2154.1 682.8 L2157.8 682.8 L2161.6 682.8 L2165.3 682.8 L2169.0 682.8 L2172.8 682.8 L2176.5 682.8 L2180.2 682.8 L2183.9 682.8 L2187.7 682.8 L2191.4 682.8 L2195.1 682.8 L2198.9 682.8 L2202.6 682.8 L2206.3 682.8 L2210.0 682.8 L2213.8 682.8 L2217.5 682.8 L2221.2 682.8 L2225.0 682.8 L2228.7 682.8 L2232.4 682.8 L2236.1 682.8 L2239.9 682.8 L2243.6 682.8 L2247.3 682.8 L2251.1 682.8 L2254.8 682.8 L2258.5 682.8 L2262.2 682.8 L2266.0 682.8 L2269.7 682.8 L2273.4 682.8 L2277.2 682.8 L2280.9 682.8 L2284.6 682.8 L2288.3 682.8 L2292.1 682.8 L2295.8 682.8 L2299.5 682.8 L2303.3 682.8 L2307.0 682.8 L2310.7 682.8 L2314.4 682.8 L2318.2 682.8 L2321.9 682.8 L2325.6 682.8 L2329.4 682.8 L2333.1 682.8 L2336.8 682.8 L2340.5 682.8 L2344.3 682.8 L2348.0 682.8 L2348.0 724.5 L1345.0 724.5 Z" fill="#F2CC0C" fill-opacity="0.1"/><path d="M1345.0 682.8 L1348.7 682.8 L1352.5 682.8 L1356.2 682.8 L1359.9 682.8 L1363.6 682.8 L1367.4 682.8 L1371.1 682.8 L1374.8 682.8 L1378.6 682.8 L1382.3 682.8 L1386.0 682.8 L1389.7 682.8 L1393.5 682.8 L1397.2 682.8 L1400.9 682.8 L1404.7 682.8 L1408.4 682.8 L1412.1 682.8 L1415.8 682.8 L1419.6 682.8 L1423.3 682.8 L1427.0 682.8 L1430.8 682.8 L1434.5 682.8 L1438.2 682.8 L1441.9 682.8 L1445.7 682.8 L1449.4 682.8 L1453.1 682.8 L1456.9 682.8 L1460.6 682.8 L1464.3 682.8 L1468.0 682.8 L1471.8 682.8 L1475.5 682.8 L1479.2 682.8 L1483.0 682.8 L1486.7 682.8 L1490.4 682.8 L1494.1 682.8 L1497.9 682.8 L1501.6 682.8 L1505.3 682.8 L1509.1 682.8 L1512.8 682.8 L1516.5 682.8 L1520.2 682.8 L1524.0 682.8 L1527.7 682.8 L1531.4 682.8 L1535.2 682.8 L1538.9 682.8 L1542.6 682.8 L1546.3 682.8 L1550.1 682.8 L1553.8 682.8 L1557.5 682.8 L1561.3 682.8 L1565.0 682.8 L1568.7 682.8 L1572.4 682.8 L1576.2 682.8 L1579.9 682.8 L1583.6 682.8 L1587.4 682.8 L1591.1 682.8 L1594.8 682.8 L1598.5 682.8 L1602.3 682.8 L1606.0 682.8 L1609.7 682.8 L1613.5 682.8 L1617.2 682.8 L1620.9 682.8 L1624.6 682.8 L1628.4 682.8 L1632.1 682.8 L1635.8 682.8 L1639.6 682.8 L1643.3 682.8 L1647.0 682.8 L1650.7 682.8 L1654.5 682.8 L1658.2 682.8 L1661.9 682.8 L1665.7 682.8 L1669.4 682.8 L1673.1 682.8 L1676.8 682.8 L1680.6 682.8 L1684.3 682.8 L1688.0 682.8 L1691.8 682.8 L1695.5 682.8 L1699.2 682.8 L1702.9 682.8 L1706.7 301.2 L1710.4 682.8 L1714.1 682.8 L1717.9 682.8 L1721.6 682.8 L1725.3 682.8 L1729.0 682.8 L1732.8 682.8 L1736.5 682.8 L1740.2 682.8 L1744.0 682.8 L1747.7 682.8 L1751.4 682.8 L1755.1 682.8 L1758.9 682.8 L1762.6 682.8 L1766.3 682.8 L1770.1 682.8 L1773.8 682.8 L1777.5 682.8 L1781.2 682.8 L1785.0 682.8 L1788.7 682.8 L1792.4 682.8 L1796.2 682.8 L1799.9 682.8 L1803.6 682.8 L1807.3 682.8 L1811.1 682.8 L1814.8 682.8 L1818.5 682.8 L1822.3 682.8 L1826.0 682.8 L1829.7 682.8 L1833.4 682.8 L1837.2 682.8 L1840.9 682.8 L1844.6 682.8 L1848.4 682.8 L1852.1 682.8 L1855.8 682.8 L1859.6 682.8 L1863.3 682.8 L1867.0 682.8 L1870.7 682.8 L1874.5 682.8 L1878.2 682.8 L1881.9 682.8 L1885.7 682.8 L1889.4 682.8 L1893.1 682.8 L1896.8 682.8 L1900.6 682.8 L1904.3 682.8 L1908.0 682.8 L1911.8 682.8 L1915.5 682.8 L1919.2 682.8 L1922.9 682.8 L1926.7 682.8 L1930.4 682.8 L1934.1 682.8 L1937.9 682.8 L1941.6 682.8 L1945.3 682.8 L1949.0 682.8 L1952.8 682.8 L1956.5 682.8 L1960.2 682.8 L1964.0 682.8 L1967.7 682.8 L1971.4 682.8 L1975.1 682.8 L1978.9 682.8 L1982.6 682.8 L1986.3 682.8 L1990.1 682.8 L1993.8 682.8 L1997.5 682.8 L2001.2 682.8 L2005.0 682.8 L2008.7 682.8 L2012.4 682.8 L2016.2 682.8 L2019.9 682.8 L2023.6 682.8 L2027.3 682.8 L2031.1 682.8 L2034.8 682.8 L2038.5 682.8 L2042.3 682.8 L2046.0 682.8 L2049.7 682.8 L2053.4 682.8 L2057.2 682.8 L2060.9 682.8 L2064.6 682.8 L2068.4 682.8 L2072.1 682.8 L2075.8 682.8 L2079.5 682.8 L2083.3 682.8 L2087.0 682.8 L2090.7 682.8 L2094.5 682.8 L2098.2 682.8 L2101.9 682.8 L2105.6 682.8 L2109.4 682.8 L2113.1 682.8 L2116.8 682.8 L2120.6 682.8 L2124.3 682.8 L2128.0 682.8 L2131.7 682.8 L2135.5 682.8 L2139.2 682.8 L2142.9 682.8 L2146.7 682.8 L2150.4 682.8 L2154.1 682.8 L2157.8 682.8 L2161.6 682.8 L2165.3 682.8 L2169.0 682.8 L2172.8 682.8 L2176.5 682.8 L2180.2 682.8 L2183.9 682.8 L2187.7 682.8 L2191.4 682.8 L2195.1 682.8 L2198.9 682.8 L2202.6 682.8 L2206.3 682.8 L2210.0 682.8 L2213.8 682.8 L2217.5 682.8 L2221.2 682.8 L2225.0 682.8 L2228.7 682.8 L2232.4 682.8 L2236.1 682.8 L2239.9 682.8 L2243.6 682.8 L2247.3 682.8 L2251.1 682.8 L2254.8 682.8 L2258.5 682.8 L2262.2 682.8 L2266.0 682.8 L2269.7 682.8 L2273.4 682.8 L2277.2 682.8 L2280.9 682.8 L2284.6 682.8 L2288.3 682.8 L2292.1 682.8 L2295.8 682.8 L2299.5 682.8 L2303.3 682.8 L2307.0 682.8 L2310.7 682.8 L2314.4 682.8 L2318.2 682.8 L2321.9 682.8 L2325.6 682.8 L2329.4 682.8 L2333.1 682.8 L2336.8 682.8 L2340.5 682.8 L2344.3 682.8 L2348.0 682.8" fill="none" stroke="#F2CC0C" stroke-width="2" stroke-linejoin="round"/><path d="M1345.0 682.8 L1348.7 682.8 L1352.5 682.8 L1356.2 682.8 L1359.9 682.8 L1363.6 682.8 L1367.4 682.8 L1371.1 682.8 L1374.8 682.8 L1378.6 682.8 L1382.3 682.8 L1386.0 682.8 L1389.7 682.8 L1393.5 682.8 L1397.2 682.8 L1400.9 682.8 L1404.7 682.8 L1408.4 682.8 L1412.1 682.8 L1415.8 682.8 L1419.6 682.8 L1423.3 682.8 L1427.0 682.8 L1430.8 682.8 L1434.5 682.8 L1438.2 682.8 L1441.9 682.8 L1445.7 682.8 L1449.4 682.8 L1453.1 682.8 L1456.9 682.8 L1460.6 682.8 L1464.3 682.8 L1468.0 682.8 L1471.8 682.8 L1475.5 682.8 L1479.2 682.8 L1483.0 682.8 L1486.7 682.8 L1490.4 682.8 L1494.1 682.8 L1497.9 682.8 L1501.6 682.8 L1505.3 682.8 L1509.1 682.8 L1512.8 682.8 L1516.5 682.8 L1520.2 682.8 L1524.0 682.8 L1527.7 682.8 L1531.4 682.8 L1535.2 682.8 L1538.9 682.8 L1542.6 682.8 L1546.3 682.8 L1550.1 682.8 L1553.8 682.8 L1557.5 682.8 L1561.3 682.8 L1565.0 682.8 L1568.7 682.8 L1572.4 682.8 L1576.2 682.8 L1579.9 682.8 L1583.6 682.8 L1587.4 682.8 L1591.1 682.8 L1594.8 682.8 L1598.5 682.8 L1602.3 682.8 L1606.0 682.8 L1609.7 682.8 L1613.5 682.8 L1617.2 682.8 L1620.9 682.8 L1624.6 682.8 L1628.4 682.8 L1632.1 682.8 L1635.8 682.8 L1639.6 682.8 L1643.3 682.8 L1647.0 682.8 L1650.7 682.8 L1654.5 682.8 L1658.2 682.8 L1661.9 682.8 L1665.7 682.8 L1669.4 682.8 L1673.1 682.8 L1676.8 682.8 L1680.6 682.8 L1684.3 682.8 L1688.0 682.8 L1691.8 682.8 L1695.5 682.8 L1699.2 682.8 L1702.9 682.8 L1706.7 682.8 L1710.4 682.8 L1714.1 682.8 L1717.9 682.8 L1721.6 682.8 L1725.3 682.8 L1729.0 682.8 L1732.8 682.8 L1736.5 682.8 L1740.2 682.8 L1744.0 682.8 L1747.7 682.8 L1751.4 682.8 L1755.1 682.8 L1758.9 682.8 L1762.6 682.8 L1766.3 682.8 L1770.1 682.8 L1773.8 682.8 L1777.5 682.8 L1781.2 682.8 L1785.0 682.8 L1788.7 682.8 L1792.4 682.8 L1796.2 682.8 L1799.9 682.8 L1803.6 682.8 L1807.3 682.8 L1811.1 682.8 L1814.8 682.8 L1818.5 682.8 L1822.3 682.8 L1826.0 682.8 L1829.7 682.8 L1833.4 682.8 L1837.2 682.8 L1840.9 682.8 L1844.6 682.8 L1848.4 682.8 L1852.1 682.8 L1855.8 682.8 L1859.6 682.8 L1863.3 682.8 L1867.0 682.8 L1870.7 682.8 L1874.5 682.8 L1878.2 682.8 L1881.9 682.8 L1885.7 682.8 L1889.4 682.8 L1893.1 682.8 L1896.8 682.8 L1900.6 682.8 L1904.3 682.8 L1908.0 682.8 L1911.8 682.8 L1915.5 682.8 L1919.2 682.8 L1922.9 682.8 L1926.7 682.8 L1930.4 682.8 L1934.1 682.8 L1937.9 682.8 L1941.6 682.8 L1945.3 682.8 L1949.0 682.8 L1952.8 682.8 L1956.5 682.8 L1960.2 682.8 L1964.0 682.8 L1967.7 682.8 L1971.4 682.8 L1975.1 682.8 L1978.9 682.8 L1982.6 682.8 L1986.3 682.8 L1990.1 682.8 L1993.8 682.8 L1997.5 682.8 L2001.2 682.8 L2005.0 682.8 L2008.7 682.8 L2012.4 682.8 L2016.2 682.8 L2019.9 682.8 L2023.6 682.8 L2027.3 682.8 L2031.1 682.8 L2034.8 682.8 L2038.5 682.8 L2042.3 682.8 L2046.0 682.8 L2049.7 682.8 L2053.4 682.8 L2057.2 682.8 L2060.9 682.8 L2064.6 682.8 L2068.4 682.8 L2072.1 682.8 L2075.8 682.8 L2079.5 682.8 L2083.3 682.8 L2087.0 682.8 L2090.7 682.8 L2094.5 682.8 L2098.2 682.8 L2101.9 682.8 L2105.6 682.8 L2109.4 682.8 L2113.1 682.8 L2116.8 682.8 L2120.6 682.8 L2124.3 682.8 L2128.0 682.8 L2131.7 682.8 L2135.5 682.8 L2139.2 682.8 L2142.9 682.8 L2146.7 682.8 L2150.4 682.8 L2154.1 682.8 L2157.8 682.8 L2161.6 682.8 L2165.3 682.8 L2169.0 682.8 L2172.8 682.8 L2176.5 682.8 L2180.2 682.8 L2183.9 682.8 L2187.7 682.8 L2191.4 682.8 L2195.1 682.8 L2198.9 682.8 L2202.6 682.8 L2206.3 682.8 L2210.0 682.8 L2213.8 682.8 L2217.5 682.8 L2221.2 682.8 L2225.0 682.8 L2228.7 682.8 L2232.4 682.8 L2236.1 682.8 L2239.9 682.8 L2243.6 682.8 L2247.3 682.8 L2251.1 682.8 L2254.8 682.8 L2258.5 682.8 L2262.2 682.8 L2266.0 682.8 L2269.7 682.8 L2273.4 682.8 L2277.2 682.8 L2280.9 682.8 L2284.6 682.8 L2288.3 682.8 L2292.1 682.8 L2295.8 682.8 L2299.5 682.8 L2303.3 682.8 L2307.0 682.8 L2310.7 682.8 L2314.4 682.8 L2318.2 682.8 L2321.9 682.8 L2325.6 682.8 L2329.4 682.8 L2333.1 682.8 L2336.8 682.8 L2340.5 682.8 L2344.3 682.8 L2348.0 682.8 L2348.0 724.5 L1345.0 724.5 Z" fill="#8AB8FF" fill-opacity="0.1"/><path d="M1345.0 682.8 L1348.7 682.8 L1352.5 682.8 L1356.2 682.8 L1359.9 682.8 L1363.6 682.8 L1367.4 682.8 L1371.1 682.8 L1374.8 682.8 L1378.6 682.8 L1382.3 682.8 L1386.0 682.8 L1389.7 682.8 L1393.5 682.8 L1397.2 682.8 L1400.9 682.8 L1404.7 682.8 L1408.4 682.8 L1412.1 682.8 L1415.8 682.8 L1419.6 682.8 L1423.3 682.8 L1427.0 682.8 L1430.8 682.8 L1434.5 682.8 L1438.2 682.8 L1441.9 682.8 L1445.7 682.8 L1449.4 682.8 L1453.1 682.8 L1456.9 682.8 L1460.6 682.8 L1464.3 682.8 L1468.0 682.8 L1471.8 682.8 L1475.5 682.8 L1479.2 682.8 L1483.0 682.8 L1486.7 682.8 L1490.4 682.8 L1494.1 682.8 L1497.9 682.8 L1501.6 682.8 L1505.3 682.8 L1509.1 682.8 L1512.8 682.8 L1516.5 682.8 L1520.2 682.8 L1524.0 682.8 L1527.7 682.8 L1531.4 682.8 L1535.2 682.8 L1538.9 682.8 L1542.6 682.8 L1546.3 682.8 L1550.1 682.8 L1553.8 682.8 L1557.5 682.8 L1561.3 682.8 L1565.0 682.8 L1568.7 682.8 L1572.4 682.8 L1576.2 682.8 L1579.9 682.8 L1583.6 682.8 L1587.4 682.8 L1591.1 682.8 L1594.8 682.8 L1598.5 682.8 L1602.3 682.8 L1606.0 682.8 L1609.7 682.8 L1613.5 682.8 L1617.2 682.8 L1620.9 682.8 L1624.6 682.8 L1628.4 682.8 L1632.1 682.8 L1635.8 682.8 L1639.6 682.8 L1643.3 682.8 L1647.0 682.8 L1650.7 682.8 L1654.5 682.8 L1658.2 682.8 L1661.9 682.8 L1665.7 682.8 L1669.4 682.8 L1673.1 682.8 L1676.8 682.8 L1680.6 682.8 L1684.3 682.8 L1688.0 682.8 L1691.8 682.8 L1695.5 682.8 L1699.2 682.8 L1702.9 682.8 L1706.7 682.8 L1710.4 682.8 L1714.1 682.8 L1717.9 682.8 L1721.6 682.8 L1725.3 682.8 L1729.0 682.8 L1732.8 682.8 L1736.5 682.8 L1740.2 682.8 L1744.0 682.8 L1747.7 682.8 L1751.4 682.8 L1755.1 682.8 L1758.9 682.8 L1762.6 682.8 L1766.3 682.8 L1770.1 682.8 L1773.8 682.8 L1777.5 682.8 L1781.2 682.8 L1785.0 682.8 L1788.7 682.8 L1792.4 682.8 L1796.2 682.8 L1799.9 682.8 L1803.6 682.8 L1807.3 682.8 L1811.1 682.8 L1814.8 682.8 L1818.5 682.8 L1822.3 682.8 L1826.0 682.8 L1829.7 682.8 L1833.4 682.8 L1837.2 682.8 L1840.9 682.8 L1844.6 682.8 L1848.4 682.8 L1852.1 682.8 L1855.8 682.8 L1859.6 682.8 L1863.3 682.8 L1867.0 682.8 L1870.7 682.8 L1874.5 682.8 L1878.2 682.8 L1881.9 682.8 L1885.7 682.8 L1889.4 682.8 L1893.1 682.8 L1896.8 682.8 L1900.6 682.8 L1904.3 682.8 L1908.0 682.8 L1911.8 682.8 L1915.5 682.8 L1919.2 682.8 L1922.9 682.8 L1926.7 682.8 L1930.4 682.8 L1934.1 682.8 L1937.9 682.8 L1941.6 682.8 L1945.3 682.8 L1949.0 682.8 L1952.8 682.8 L1956.5 682.8 L1960.2 682.8 L1964.0 682.8 L1967.7 682.8 L1971.4 682.8 L1975.1 682.8 L1978.9 682.8 L1982.6 682.8 L1986.3 682.8 L1990.1 682.8 L1993.8 682.8 L1997.5 682.8 L2001.2 682.8 L2005.0 682.8 L2008.7 682.8 L2012.4 682.8 L2016.2 682.8 L2019.9 682.8 L2023.6 682.8 L2027.3 682.8 L2031.1 682.8 L2034.8 682.8 L2038.5 682.8 L2042.3 682.8 L2046.0 682.8 L2049.7 682.8 L2053.4 682.8 L2057.2 682.8 L2060.9 682.8 L2064.6 682.8 L2068.4 682.8 L2072.1 682.8 L2075.8 682.8 L2079.5 682.8 L2083.3 682.8 L2087.0 682.8 L2090.7 682.8 L2094.5 682.8 L2098.2 682.8 L2101.9 682.8 L2105.6 682.8 L2109.4 682.8 L2113.1 682.8 L2116.8 682.8 L2120.6 682.8 L2124.3 682.8 L2128.0 682.8 L2131.7 682.8 L2135.5 682.8 L2139.2 682.8 L2142.9 682.8 L2146.7 682.8 L2150.4 682.8 L2154.1 682.8 L2157.8 682.8 L2161.6 682.8 L2165.3 682.8 L2169.0 682.8 L2172.8 682.8 L2176.5 682.8 L2180.2 682.8 L2183.9 682.8 L2187.7 682.8 L2191.4 682.8 L2195.1 682.8 L2198.9 682.8 L2202.6 682.8 L2206.3 682.8 L2210.0 682.8 L2213.8 682.8 L2217.5 682.8 L2221.2 682.8 L2225.0 682.8 L2228.7 682.8 L2232.4 682.8 L2236.1 682.8 L2239.9 682.8 L2243.6 682.8 L2247.3 682.8 L2251.1 682.8 L2254.8 682.8 L2258.5 682.8 L2262.2 682.8 L2266.0 682.8 L2269.7 682.8 L2273.4 682.8 L2277.2 682.8 L2280.9 682.8 L2284.6 682.8 L2288.3 682.8 L2292.1 682.8 L2295.8 682.8 L2299.5 682.8 L2303.3 682.8 L2307.0 682.8 L2310.7 682.8 L2314.4 682.8 L2318.2 682.8 L2321.9 682.8 L2325.6 682.8 L2329.4 682.8 L2333.1 682.8 L2336.8 682.8 L2340.5 682.8 L2344.3 682.8 L2348.0 682.8" fill="none" stroke="#8AB8FF" stroke-width="2" stroke-linejoin="round"/></g><clipPath id="c3"><rect x="2500.8" y="258" width="1031.1999999999998" height="464"/></clipPath><line x1="2500.8" y1="296" x2="3534" y2="296" stroke="rgba(240,250,255,0.09)" stroke-width="2"/><text x="2490.3" y="304.5" text-anchor="end" font-size="26" letter-spacing="-0.50" fill="rgb(204,204,220)">16 ms</text><line x1="2500.8" y1="366" x2="3534" y2="366" stroke="rgba(240,250,255,0.09)" stroke-width="2"/><text x="2490.3" y="375.0" text-anchor="end" font-size="26" letter-spacing="-0.50" fill="rgb(204,204,220)">14 ms</text><line x1="2500.8" y1="437" x2="3534" y2="437" stroke="rgba(240,250,255,0.09)" stroke-width="2"/><text x="2490.3" y="446.0" text-anchor="end" font-size="26" letter-spacing="-0.50" fill="rgb(204,204,220)">12 ms</text><line x1="2500.8" y1="508" x2="3534" y2="508" stroke="rgba(240,250,255,0.09)" stroke-width="2"/><text x="2490.3" y="517.0" text-anchor="end" font-size="26" letter-spacing="-0.50" fill="rgb(204,204,220)">10 ms</text><line x1="2500.8" y1="580" x2="3534" y2="580" stroke="rgba(240,250,255,0.09)" stroke-width="2"/><text x="2490.3" y="588.5" text-anchor="end" font-size="26" letter-spacing="-0.00" fill="rgb(204,204,220)">8 ms</text><line x1="2500.8" y1="650" x2="3534" y2="650" stroke="rgba(240,250,255,0.09)" stroke-width="2"/><text x="2490.3" y="659.0" text-anchor="end" font-size="26" letter-spacing="-0.00" fill="rgb(204,204,220)">6 ms</text><line x1="2500.8" y1="722" x2="3534" y2="722" stroke="rgba(240,250,255,0.09)" stroke-width="2"/><text x="2490.3" y="731.0" text-anchor="end" font-size="26" letter-spacing="-0.00" fill="rgb(204,204,220)">4 ms</text><line x1="2506" y1="260" x2="2506" y2="729" stroke="rgba(240,250,255,0.09)" stroke-width="2"/><text x="2505.7" y="759.0" text-anchor="middle" font-size="26" fill="rgb(204,204,220)">20:30</text><line x1="2678" y1="260" x2="2678" y2="729" stroke="rgba(240,250,255,0.09)" stroke-width="2"/><text x="2677.7" y="759.0" text-anchor="middle" font-size="26" fill="rgb(204,204,220)">21:00</text><line x1="2850" y1="260" x2="2850" y2="729" stroke="rgba(240,250,255,0.09)" stroke-width="2"/><text x="2849.7" y="759.0" text-anchor="middle" font-size="26" fill="rgb(204,204,220)">21:30</text><line x1="3022" y1="260" x2="3022" y2="729" stroke="rgba(240,250,255,0.09)" stroke-width="2"/><text x="3021.7" y="759.0" text-anchor="middle" font-size="26" fill="rgb(204,204,220)">22:00</text><line x1="3194" y1="260" x2="3194" y2="729" stroke="rgba(240,250,255,0.09)" stroke-width="2"/><text x="3193.7" y="759.0" text-anchor="middle" font-size="26" fill="rgb(204,204,220)">22:30</text><line x1="3366" y1="260" x2="3366" y2="729" stroke="rgba(240,250,255,0.09)" stroke-width="2"/><text x="3365.7" y="759.0" text-anchor="middle" font-size="26" fill="rgb(204,204,220)">23:00</text><g clip-path="url(#c3)"><path d="M2500.8 349.1 L2504.6 342.2 L2508.5 360.4 L2512.3 353.8 L2516.1 347.8 L2520.0 334.3 L2523.8 355.6 L2527.6 341.2 L2531.5 352.9 L2535.3 342.1 L2539.1 345.1 L2543.0 345.6 L2546.8 338.0 L2550.6 332.8 L2554.5 354.9 L2558.3 344.1 L2562.1 355.2 L2566.0 340.3 L2569.8 339.7 L2573.6 349.0 L2577.5 329.0 L2581.3 343.5 L2585.1 362.0 L2589.0 340.5 L2592.8 340.0 L2596.6 344.8 L2600.5 345.3 L2604.3 340.8 L2608.1 347.2 L2612.0 360.6 L2615.8 341.9 L2619.6 357.5 L2623.5 332.1 L2627.3 362.0 L2631.1 356.6 L2635.0 363.8 L2638.8 343.3 L2642.6 336.8 L2646.5 355.3 L2650.3 344.2 L2654.1 347.9 L2658.0 347.0 L2661.8 334.1 L2665.6 343.5 L2669.5 352.0 L2673.3 349.9 L2677.1 355.5 L2681.0 349.6 L2684.8 332.5 L2688.6 327.0 L2692.5 328.4 L2696.3 344.8 L2700.1 347.6 L2704.0 337.3 L2707.8 334.4 L2711.6 349.8 L2715.5 336.0 L2719.3 334.6 L2723.1 352.8 L2727.0 344.8 L2730.8 330.8 L2734.6 344.1 L2738.5 346.1 L2742.3 346.8 L2746.1 347.6 L2750.0 352.0 L2753.8 346.3 L2757.6 341.3 L2761.5 337.7 L2765.3 345.7 L2769.1 327.2 L2773.0 321.8 L2776.8 334.9 L2780.6 335.6 L2784.5 356.6 L2788.3 343.0 L2792.1 341.7 L2796.0 344.1 L2799.8 339.9 L2803.6 347.4 L2807.5 347.3 L2811.3 345.2 L2815.1 339.2 L2819.0 341.7 L2822.8 347.9 L2826.6 351.4 L2830.5 339.0 L2834.3 351.8 L2838.1 347.0 L2842.0 355.1 L2845.8 340.0 L2849.6 350.5 L2853.5 361.8 L2857.3 317.4 L2861.1 358.2 L2865.0 348.0 L2868.8 342.6 L2872.6 351.2 L2876.5 337.4 L2880.3 345.6 L2884.1 363.8 L2888.0 345.9 L2891.8 347.2 L2895.6 354.4 L2899.5 354.0 L2903.3 355.5 L2907.1 331.9 L2911.0 346.8 L2914.8 350.4 L2918.6 370.8 L2922.5 343.9 L2926.3 357.9 L2930.1 355.4 L2934.0 343.2 L2937.8 346.5 L2941.6 344.7 L2945.5 353.1 L2949.3 358.2 L2953.1 359.7 L2957.0 349.1 L2960.8 348.6 L2964.6 324.1 L2968.5 349.7 L2972.3 334.8 L2976.1 350.5 L2980.0 357.9 L2983.8 337.5 L2987.6 355.2 L2991.5 336.7 L2995.3 347.3 L2999.1 352.3 L3003.0 348.8 L3006.8 343.1 L3010.6 342.4 L3014.5 354.1 L3018.3 338.9 L3022.2 361.0 L3026.0 336.3 L3029.8 340.5 L3033.7 348.5 L3037.5 355.2 L3041.3 343.5 L3045.2 347.3 L3049.0 343.9 L3052.8 359.1 L3056.7 351.8 L3060.5 342.5 L3064.3 340.9 L3068.2 341.8 L3072.0 346.4 L3075.8 348.1 L3079.7 360.2 L3083.5 351.9 L3087.3 351.5 L3091.2 342.7 L3095.0 359.2 L3098.8 348.9 L3102.7 356.8 L3106.5 338.0 L3110.3 353.0 L3114.2 356.5 L3118.0 355.9 L3121.8 364.6 L3125.7 340.1 L3129.5 345.8 L3133.3 341.9 L3137.2 338.0 L3141.0 350.7 L3144.8 344.3 L3148.7 350.7 L3152.5 335.4 L3156.3 342.3 L3160.2 335.0 L3164.0 351.2 L3167.8 347.6 L3171.7 343.6 L3175.5 347.8 L3179.3 343.5 L3183.2 356.5 L3187.0 357.8 L3190.8 334.5 L3194.7 338.1 L3198.5 346.9 L3202.3 348.4 L3206.2 341.8 L3210.0 349.8 L3213.8 343.0 L3217.7 332.5 L3221.5 346.3 L3225.3 330.7 L3229.2 337.7 L3233.0 340.5 L3236.8 348.4 L3240.7 355.2 L3244.5 344.5 L3248.3 341.0 L3252.2 346.2 L3256.0 344.3 L3259.8 336.8 L3263.7 353.2 L3267.5 333.2 L3271.3 351.0 L3275.2 347.3 L3279.0 343.3 L3282.8 336.3 L3286.7 357.4 L3290.5 335.8 L3294.3 356.7 L3298.2 351.9 L3302.0 341.5 L3305.8 328.9 L3309.7 340.1 L3313.5 340.6 L3317.3 339.8 L3321.2 360.8 L3325.0 341.0 L3328.8 342.6 L3332.7 353.5 L3336.5 346.5 L3340.3 348.9 L3344.2 345.3 L3348.0 339.5 L3351.8 352.2 L3355.7 345.9 L3359.5 342.4 L3363.3 343.1 L3367.2 344.3 L3371.0 350.4 L3374.8 339.0 L3378.7 342.0 L3382.5 351.5 L3386.3 341.6 L3390.2 353.9 L3394.0 361.1 L3397.8 344.6 L3401.7 355.5 L3405.5 346.5 L3409.3 354.3 L3413.2 345.4 L3417.0 348.2 L3420.8 343.6 L3424.7 349.3 L3428.5 336.8 L3432.3 356.5 L3436.2 349.5 L3440.0 352.7 L3443.8 349.1 L3447.7 341.8 L3451.5 359.2 L3455.3 350.4 L3459.2 360.3 L3463.0 358.5 L3466.8 347.4 L3470.7 358.1 L3474.5 350.8 L3478.3 344.8 L3482.2 346.1 L3486.0 334.5 L3489.8 349.7 L3493.7 347.0 L3497.5 339.2 L3501.3 343.0 L3505.2 353.2 L3509.0 344.1 L3512.8 345.4 L3516.7 361.1 L3520.5 345.0 L3524.3 341.8 L3528.2 356.6 L3532.0 343.4 L3532.0 724 L2500.8 724 Z" fill="#73BF69" fill-opacity="0.1"/><path d="M2500.8 349.1 L2504.6 342.2 L2508.5 360.4 L2512.3 353.8 L2516.1 347.8 L2520.0 334.3 L2523.8 355.6 L2527.6 341.2 L2531.5 352.9 L2535.3 342.1 L2539.1 345.1 L2543.0 345.6 L2546.8 338.0 L2550.6 332.8 L2554.5 354.9 L2558.3 344.1 L2562.1 355.2 L2566.0 340.3 L2569.8 339.7 L2573.6 349.0 L2577.5 329.0 L2581.3 343.5 L2585.1 362.0 L2589.0 340.5 L2592.8 340.0 L2596.6 344.8 L2600.5 345.3 L2604.3 340.8 L2608.1 347.2 L2612.0 360.6 L2615.8 341.9 L2619.6 357.5 L2623.5 332.1 L2627.3 362.0 L2631.1 356.6 L2635.0 363.8 L2638.8 343.3 L2642.6 336.8 L2646.5 355.3 L2650.3 344.2 L2654.1 347.9 L2658.0 347.0 L2661.8 334.1 L2665.6 343.5 L2669.5 352.0 L2673.3 349.9 L2677.1 355.5 L2681.0 349.6 L2684.8 332.5 L2688.6 327.0 L2692.5 328.4 L2696.3 344.8 L2700.1 347.6 L2704.0 337.3 L2707.8 334.4 L2711.6 349.8 L2715.5 336.0 L2719.3 334.6 L2723.1 352.8 L2727.0 344.8 L2730.8 330.8 L2734.6 344.1 L2738.5 346.1 L2742.3 346.8 L2746.1 347.6 L2750.0 352.0 L2753.8 346.3 L2757.6 341.3 L2761.5 337.7 L2765.3 345.7 L2769.1 327.2 L2773.0 321.8 L2776.8 334.9 L2780.6 335.6 L2784.5 356.6 L2788.3 343.0 L2792.1 341.7 L2796.0 344.1 L2799.8 339.9 L2803.6 347.4 L2807.5 347.3 L2811.3 345.2 L2815.1 339.2 L2819.0 341.7 L2822.8 347.9 L2826.6 351.4 L2830.5 339.0 L2834.3 351.8 L2838.1 347.0 L2842.0 355.1 L2845.8 340.0 L2849.6 350.5 L2853.5 361.8 L2857.3 317.4 L2861.1 358.2 L2865.0 348.0 L2868.8 342.6 L2872.6 351.2 L2876.5 337.4 L2880.3 345.6 L2884.1 363.8 L2888.0 345.9 L2891.8 347.2 L2895.6 354.4 L2899.5 354.0 L2903.3 355.5 L2907.1 331.9 L2911.0 346.8 L2914.8 350.4 L2918.6 370.8 L2922.5 343.9 L2926.3 357.9 L2930.1 355.4 L2934.0 343.2 L2937.8 346.5 L2941.6 344.7 L2945.5 353.1 L2949.3 358.2 L2953.1 359.7 L2957.0 349.1 L2960.8 348.6 L2964.6 324.1 L2968.5 349.7 L2972.3 334.8 L2976.1 350.5 L2980.0 357.9 L2983.8 337.5 L2987.6 355.2 L2991.5 336.7 L2995.3 347.3 L2999.1 352.3 L3003.0 348.8 L3006.8 343.1 L3010.6 342.4 L3014.5 354.1 L3018.3 338.9 L3022.2 361.0 L3026.0 336.3 L3029.8 340.5 L3033.7 348.5 L3037.5 355.2 L3041.3 343.5 L3045.2 347.3 L3049.0 343.9 L3052.8 359.1 L3056.7 351.8 L3060.5 342.5 L3064.3 340.9 L3068.2 341.8 L3072.0 346.4 L3075.8 348.1 L3079.7 360.2 L3083.5 351.9 L3087.3 351.5 L3091.2 342.7 L3095.0 359.2 L3098.8 348.9 L3102.7 356.8 L3106.5 338.0 L3110.3 353.0 L3114.2 356.5 L3118.0 355.9 L3121.8 364.6 L3125.7 340.1 L3129.5 345.8 L3133.3 341.9 L3137.2 338.0 L3141.0 350.7 L3144.8 344.3 L3148.7 350.7 L3152.5 335.4 L3156.3 342.3 L3160.2 335.0 L3164.0 351.2 L3167.8 347.6 L3171.7 343.6 L3175.5 347.8 L3179.3 343.5 L3183.2 356.5 L3187.0 357.8 L3190.8 334.5 L3194.7 338.1 L3198.5 346.9 L3202.3 348.4 L3206.2 341.8 L3210.0 349.8 L3213.8 343.0 L3217.7 332.5 L3221.5 346.3 L3225.3 330.7 L3229.2 337.7 L3233.0 340.5 L3236.8 348.4 L3240.7 355.2 L3244.5 344.5 L3248.3 341.0 L3252.2 346.2 L3256.0 344.3 L3259.8 336.8 L3263.7 353.2 L3267.5 333.2 L3271.3 351.0 L3275.2 347.3 L3279.0 343.3 L3282.8 336.3 L3286.7 357.4 L3290.5 335.8 L3294.3 356.7 L3298.2 351.9 L3302.0 341.5 L3305.8 328.9 L3309.7 340.1 L3313.5 340.6 L3317.3 339.8 L3321.2 360.8 L3325.0 341.0 L3328.8 342.6 L3332.7 353.5 L3336.5 346.5 L3340.3 348.9 L3344.2 345.3 L3348.0 339.5 L3351.8 352.2 L3355.7 345.9 L3359.5 342.4 L3363.3 343.1 L3367.2 344.3 L3371.0 350.4 L3374.8 339.0 L3378.7 342.0 L3382.5 351.5 L3386.3 341.6 L3390.2 353.9 L3394.0 361.1 L3397.8 344.6 L3401.7 355.5 L3405.5 346.5 L3409.3 354.3 L3413.2 345.4 L3417.0 348.2 L3420.8 343.6 L3424.7 349.3 L3428.5 336.8 L3432.3 356.5 L3436.2 349.5 L3440.0 352.7 L3443.8 349.1 L3447.7 341.8 L3451.5 359.2 L3455.3 350.4 L3459.2 360.3 L3463.0 358.5 L3466.8 347.4 L3470.7 358.1 L3474.5 350.8 L3478.3 344.8 L3482.2 346.1 L3486.0 334.5 L3489.8 349.7 L3493.7 347.0 L3497.5 339.2 L3501.3 343.0 L3505.2 353.2 L3509.0 344.1 L3512.8 345.4 L3516.7 361.1 L3520.5 345.0 L3524.3 341.8 L3528.2 356.6 L3532.0 343.4" fill="none" stroke="#73BF69" stroke-width="2" stroke-linejoin="round"/><path d="M2500.8 665.8 L2504.6 659.2 L2508.5 666.2 L2512.3 668.0 L2516.1 665.9 L2520.0 665.3 L2523.8 671.5 L2527.6 670.0 L2531.5 668.3 L2535.3 666.2 L2539.1 668.5 L2543.0 666.5 L2546.8 664.9 L2550.6 665.6 L2554.5 669.4 L2558.3 667.8 L2562.1 668.4 L2566.0 664.2 L2569.8 664.1 L2573.6 667.5 L2577.5 664.2 L2581.3 661.9 L2585.1 669.2 L2589.0 669.0 L2592.8 665.0 L2596.6 668.3 L2600.5 666.8 L2604.3 668.3 L2608.1 667.8 L2612.0 660.0 L2615.8 667.3 L2619.6 669.6 L2623.5 663.4 L2627.3 666.6 L2631.1 665.0 L2635.0 668.1 L2638.8 667.0 L2642.6 665.8 L2646.5 669.9 L2650.3 667.3 L2654.1 666.9 L2658.0 669.7 L2661.8 664.5 L2665.6 665.5 L2669.5 669.7 L2673.3 663.5 L2677.1 670.3 L2681.0 668.4 L2684.8 666.9 L2688.6 672.0 L2692.5 665.5 L2696.3 669.3 L2700.1 666.0 L2704.0 668.9 L2707.8 661.7 L2711.6 667.6 L2715.5 666.4 L2719.3 666.0 L2723.1 666.9 L2727.0 668.1 L2730.8 668.2 L2734.6 663.1 L2738.5 664.6 L2742.3 666.4 L2746.1 665.6 L2750.0 668.7 L2753.8 667.0 L2757.6 666.3 L2761.5 666.3 L2765.3 667.1 L2769.1 664.5 L2773.0 664.4 L2776.8 667.3 L2780.6 667.3 L2784.5 666.8 L2788.3 671.7 L2792.1 666.8 L2796.0 668.7 L2799.8 669.3 L2803.6 666.9 L2807.5 668.9 L2811.3 664.5 L2815.1 664.4 L2819.0 668.8 L2822.8 667.6 L2826.6 666.3 L2830.5 665.2 L2834.3 668.4 L2838.1 665.7 L2842.0 670.3 L2845.8 666.9 L2849.6 668.0 L2853.5 666.7 L2857.3 668.1 L2861.1 672.6 L2865.0 665.1 L2868.8 665.1 L2872.6 670.7 L2876.5 661.9 L2880.3 669.0 L2884.1 667.1 L2888.0 666.2 L2891.8 672.4 L2895.6 665.7 L2899.5 670.3 L2903.3 669.8 L2907.1 664.0 L2911.0 664.4 L2914.8 668.7 L2918.6 667.7 L2922.5 662.5 L2926.3 667.1 L2930.1 667.2 L2934.0 668.5 L2937.8 665.3 L2941.6 668.0 L2945.5 665.9 L2949.3 671.0 L2953.1 664.9 L2957.0 661.7 L2960.8 668.2 L2964.6 665.5 L2968.5 666.9 L2972.3 659.7 L2976.1 666.0 L2980.0 670.2 L2983.8 667.3 L2987.6 667.3 L2991.5 664.1 L2995.3 669.3 L2999.1 663.3 L3003.0 665.7 L3006.8 667.8 L3010.6 665.8 L3014.5 665.1 L3018.3 666.4 L3022.2 669.6 L3026.0 667.0 L3029.8 664.5 L3033.7 667.2 L3037.5 669.2 L3041.3 668.2 L3045.2 668.4 L3049.0 670.6 L3052.8 670.6 L3056.7 666.6 L3060.5 666.3 L3064.3 669.9 L3068.2 669.5 L3072.0 666.3 L3075.8 668.4 L3079.7 669.7 L3083.5 667.1 L3087.3 666.8 L3091.2 666.1 L3095.0 667.7 L3098.8 666.3 L3102.7 668.4 L3106.5 666.7 L3110.3 668.6 L3114.2 666.5 L3118.0 669.9 L3121.8 663.0 L3125.7 667.1 L3129.5 664.2 L3133.3 667.2 L3137.2 663.6 L3141.0 665.6 L3144.8 668.7 L3148.7 667.1 L3152.5 663.5 L3156.3 664.4 L3160.2 661.8 L3164.0 670.3 L3167.8 667.4 L3171.7 669.0 L3175.5 665.0 L3179.3 666.0 L3183.2 666.8 L3187.0 662.1 L3190.8 663.0 L3194.7 663.1 L3198.5 667.1 L3202.3 661.7 L3206.2 668.2 L3210.0 663.4 L3213.8 665.1 L3217.7 666.7 L3221.5 665.9 L3225.3 666.5 L3229.2 662.1 L3233.0 667.0 L3236.8 666.7 L3240.7 664.6 L3244.5 665.5 L3248.3 665.0 L3252.2 666.6 L3256.0 666.2 L3259.8 663.8 L3263.7 665.5 L3267.5 666.4 L3271.3 664.7 L3275.2 663.7 L3279.0 661.9 L3282.8 665.9 L3286.7 665.3 L3290.5 665.9 L3294.3 668.0 L3298.2 666.1 L3302.0 667.2 L3305.8 666.0 L3309.7 667.3 L3313.5 667.4 L3317.3 664.9 L3321.2 669.8 L3325.0 667.3 L3328.8 665.0 L3332.7 665.5 L3336.5 667.6 L3340.3 665.7 L3344.2 666.1 L3348.0 664.5 L3351.8 665.3 L3355.7 665.0 L3359.5 663.8 L3363.3 662.9 L3367.2 666.4 L3371.0 668.5 L3374.8 662.2 L3378.7 667.7 L3382.5 668.6 L3386.3 667.5 L3390.2 668.0 L3394.0 666.6 L3397.8 665.9 L3401.7 667.9 L3405.5 669.0 L3409.3 666.4 L3413.2 669.4 L3417.0 668.1 L3420.8 667.6 L3424.7 667.9 L3428.5 667.2 L3432.3 669.8 L3436.2 665.4 L3440.0 670.6 L3443.8 667.5 L3447.7 666.3 L3451.5 666.9 L3455.3 664.2 L3459.2 667.2 L3463.0 667.1 L3466.8 666.4 L3470.7 664.4 L3474.5 662.8 L3478.3 662.4 L3482.2 668.9 L3486.0 666.3 L3489.8 674.4 L3493.7 666.5 L3497.5 667.6 L3501.3 669.1 L3505.2 668.9 L3509.0 666.4 L3512.8 667.8 L3516.7 669.6 L3520.5 663.1 L3524.3 669.9 L3528.2 673.0 L3532.0 669.6 L3532.0 724 L2500.8 724 Z" fill="#F2CC0C" fill-opacity="0.1"/><path d="M2500.8 665.8 L2504.6 659.2 L2508.5 666.2 L2512.3 668.0 L2516.1 665.9 L2520.0 665.3 L2523.8 671.5 L2527.6 670.0 L2531.5 668.3 L2535.3 666.2 L2539.1 668.5 L2543.0 666.5 L2546.8 664.9 L2550.6 665.6 L2554.5 669.4 L2558.3 667.8 L2562.1 668.4 L2566.0 664.2 L2569.8 664.1 L2573.6 667.5 L2577.5 664.2 L2581.3 661.9 L2585.1 669.2 L2589.0 669.0 L2592.8 665.0 L2596.6 668.3 L2600.5 666.8 L2604.3 668.3 L2608.1 667.8 L2612.0 660.0 L2615.8 667.3 L2619.6 669.6 L2623.5 663.4 L2627.3 666.6 L2631.1 665.0 L2635.0 668.1 L2638.8 667.0 L2642.6 665.8 L2646.5 669.9 L2650.3 667.3 L2654.1 666.9 L2658.0 669.7 L2661.8 664.5 L2665.6 665.5 L2669.5 669.7 L2673.3 663.5 L2677.1 670.3 L2681.0 668.4 L2684.8 666.9 L2688.6 672.0 L2692.5 665.5 L2696.3 669.3 L2700.1 666.0 L2704.0 668.9 L2707.8 661.7 L2711.6 667.6 L2715.5 666.4 L2719.3 666.0 L2723.1 666.9 L2727.0 668.1 L2730.8 668.2 L2734.6 663.1 L2738.5 664.6 L2742.3 666.4 L2746.1 665.6 L2750.0 668.7 L2753.8 667.0 L2757.6 666.3 L2761.5 666.3 L2765.3 667.1 L2769.1 664.5 L2773.0 664.4 L2776.8 667.3 L2780.6 667.3 L2784.5 666.8 L2788.3 671.7 L2792.1 666.8 L2796.0 668.7 L2799.8 669.3 L2803.6 666.9 L2807.5 668.9 L2811.3 664.5 L2815.1 664.4 L2819.0 668.8 L2822.8 667.6 L2826.6 666.3 L2830.5 665.2 L2834.3 668.4 L2838.1 665.7 L2842.0 670.3 L2845.8 666.9 L2849.6 668.0 L2853.5 666.7 L2857.3 668.1 L2861.1 672.6 L2865.0 665.1 L2868.8 665.1 L2872.6 670.7 L2876.5 661.9 L2880.3 669.0 L2884.1 667.1 L2888.0 666.2 L2891.8 672.4 L2895.6 665.7 L2899.5 670.3 L2903.3 669.8 L2907.1 664.0 L2911.0 664.4 L2914.8 668.7 L2918.6 667.7 L2922.5 662.5 L2926.3 667.1 L2930.1 667.2 L2934.0 668.5 L2937.8 665.3 L2941.6 668.0 L2945.5 665.9 L2949.3 671.0 L2953.1 664.9 L2957.0 661.7 L2960.8 668.2 L2964.6 665.5 L2968.5 666.9 L2972.3 659.7 L2976.1 666.0 L2980.0 670.2 L2983.8 667.3 L2987.6 667.3 L2991.5 664.1 L2995.3 669.3 L2999.1 663.3 L3003.0 665.7 L3006.8 667.8 L3010.6 665.8 L3014.5 665.1 L3018.3 666.4 L3022.2 669.6 L3026.0 667.0 L3029.8 664.5 L3033.7 667.2 L3037.5 669.2 L3041.3 668.2 L3045.2 668.4 L3049.0 670.6 L3052.8 670.6 L3056.7 666.6 L3060.5 666.3 L3064.3 669.9 L3068.2 669.5 L3072.0 666.3 L3075.8 668.4 L3079.7 669.7 L3083.5 667.1 L3087.3 666.8 L3091.2 666.1 L3095.0 667.7 L3098.8 666.3 L3102.7 668.4 L3106.5 666.7 L3110.3 668.6 L3114.2 666.5 L3118.0 669.9 L3121.8 663.0 L3125.7 667.1 L3129.5 664.2 L3133.3 667.2 L3137.2 663.6 L3141.0 665.6 L3144.8 668.7 L3148.7 667.1 L3152.5 663.5 L3156.3 664.4 L3160.2 661.8 L3164.0 670.3 L3167.8 667.4 L3171.7 669.0 L3175.5 665.0 L3179.3 666.0 L3183.2 666.8 L3187.0 662.1 L3190.8 663.0 L3194.7 663.1 L3198.5 667.1 L3202.3 661.7 L3206.2 668.2 L3210.0 663.4 L3213.8 665.1 L3217.7 666.7 L3221.5 665.9 L3225.3 666.5 L3229.2 662.1 L3233.0 667.0 L3236.8 666.7 L3240.7 664.6 L3244.5 665.5 L3248.3 665.0 L3252.2 666.6 L3256.0 666.2 L3259.8 663.8 L3263.7 665.5 L3267.5 666.4 L3271.3 664.7 L3275.2 663.7 L3279.0 661.9 L3282.8 665.9 L3286.7 665.3 L3290.5 665.9 L3294.3 668.0 L3298.2 666.1 L3302.0 667.2 L3305.8 666.0 L3309.7 667.3 L3313.5 667.4 L3317.3 664.9 L3321.2 669.8 L3325.0 667.3 L3328.8 665.0 L3332.7 665.5 L3336.5 667.6 L3340.3 665.7 L3344.2 666.1 L3348.0 664.5 L3351.8 665.3 L3355.7 665.0 L3359.5 663.8 L3363.3 662.9 L3367.2 666.4 L3371.0 668.5 L3374.8 662.2 L3378.7 667.7 L3382.5 668.6 L3386.3 667.5 L3390.2 668.0 L3394.0 666.6 L3397.8 665.9 L3401.7 667.9 L3405.5 669.0 L3409.3 666.4 L3413.2 669.4 L3417.0 668.1 L3420.8 667.6 L3424.7 667.9 L3428.5 667.2 L3432.3 669.8 L3436.2 665.4 L3440.0 670.6 L3443.8 667.5 L3447.7 666.3 L3451.5 666.9 L3455.3 664.2 L3459.2 667.2 L3463.0 667.1 L3466.8 666.4 L3470.7 664.4 L3474.5 662.8 L3478.3 662.4 L3482.2 668.9 L3486.0 666.3 L3489.8 674.4 L3493.7 666.5 L3497.5 667.6 L3501.3 669.1 L3505.2 668.9 L3509.0 666.4 L3512.8 667.8 L3516.7 669.6 L3520.5 663.1 L3524.3 669.9 L3528.2 673.0 L3532.0 669.6" fill="none" stroke="#F2CC0C" stroke-width="2" stroke-linejoin="round"/><path d="M2500.8 548.5 L2504.6 548.2 L2508.5 559.5 L2512.3 551.0 L2516.1 547.2 L2520.0 534.2 L2523.8 549.3 L2527.6 536.4 L2531.5 549.9 L2535.3 541.1 L2539.1 541.9 L2543.0 544.2 L2546.8 538.3 L2550.6 532.5 L2554.5 550.7 L2558.3 541.4 L2562.1 552.1 L2566.0 541.4 L2569.8 540.8 L2573.6 546.7 L2577.5 530.0 L2581.3 546.9 L2585.1 558.0 L2589.0 536.7 L2592.8 540.2 L2596.6 541.8 L2600.5 543.7 L2604.3 537.7 L2608.1 544.6 L2612.0 565.9 L2615.8 539.9 L2619.6 553.2 L2623.5 533.9 L2627.3 560.7 L2631.1 556.8 L2635.0 560.9 L2638.8 541.5 L2642.6 536.2 L2646.5 550.6 L2650.3 542.1 L2654.1 546.3 L2658.0 542.5 L2661.8 534.8 L2665.6 543.2 L2669.5 547.5 L2673.3 551.7 L2677.1 550.5 L2681.0 546.5 L2684.8 530.8 L2688.6 520.2 L2692.5 528.2 L2696.3 540.7 L2700.1 546.9 L2704.0 533.6 L2707.8 537.9 L2711.6 547.5 L2715.5 534.8 L2719.3 533.8 L2723.1 551.1 L2727.0 541.9 L2730.8 527.8 L2734.6 546.2 L2738.5 546.7 L2742.3 545.7 L2746.1 547.1 L2750.0 548.6 L2753.8 544.6 L2757.6 540.2 L2761.5 536.6 L2765.3 543.8 L2769.1 528.0 L2773.0 522.7 L2776.8 532.8 L2780.6 533.5 L2784.5 555.0 L2788.3 536.5 L2792.1 540.1 L2796.0 540.6 L2799.8 535.8 L2803.6 545.7 L2807.5 543.6 L2811.3 545.9 L2815.1 540.0 L2819.0 538.2 L2822.8 545.6 L2826.6 550.3 L2830.5 539.1 L2834.3 548.7 L2838.1 546.5 L2842.0 550.0 L2845.8 538.4 L2849.6 547.7 L2853.5 560.3 L2857.3 514.6 L2861.1 550.8 L2865.0 548.1 L2868.8 542.7 L2872.6 545.7 L2876.5 540.8 L2880.3 541.8 L2884.1 561.9 L2888.0 544.9 L2891.8 540.0 L2895.6 553.9 L2899.5 548.9 L2903.3 551.0 L2907.1 533.1 L2911.0 547.6 L2914.8 546.9 L2918.6 568.3 L2922.5 546.6 L2926.3 556.0 L2930.1 553.4 L2934.0 539.9 L2937.8 546.4 L2941.6 541.9 L2945.5 552.3 L2949.3 552.4 L2953.1 560.0 L2957.0 552.6 L2960.8 545.6 L2964.6 523.8 L2968.5 548.0 L2972.3 540.3 L2976.1 549.7 L2980.0 552.9 L2983.8 535.5 L2987.6 553.1 L2991.5 537.8 L2995.3 543.2 L2999.1 554.2 L3003.0 548.3 L3006.8 540.5 L3010.6 541.8 L3014.5 554.2 L3018.3 537.7 L3022.2 556.7 L3026.0 534.5 L3029.8 541.2 L3033.7 546.5 L3037.5 551.1 L3041.3 540.5 L3045.2 544.2 L3049.0 538.4 L3052.8 553.7 L3056.7 550.4 L3060.5 541.5 L3064.3 536.2 L3068.2 537.5 L3072.0 545.3 L3075.8 545.0 L3079.7 555.7 L3083.5 550.0 L3087.3 549.9 L3091.2 541.8 L3095.0 556.7 L3098.8 547.8 L3102.7 553.6 L3106.5 536.5 L3110.3 549.6 L3114.2 555.2 L3118.0 551.2 L3121.8 566.8 L3125.7 538.2 L3129.5 546.9 L3133.3 540.0 L3137.2 539.5 L3141.0 550.3 L3144.8 540.9 L3148.7 548.8 L3152.5 537.1 L3156.3 543.1 L3160.2 538.5 L3164.0 546.1 L3167.8 545.5 L3171.7 539.8 L3175.5 548.0 L3179.3 542.7 L3183.2 554.9 L3187.0 560.9 L3190.8 536.7 L3194.7 540.3 L3198.5 545.0 L3202.3 551.9 L3206.2 538.8 L3210.0 551.6 L3213.8 543.2 L3217.7 531.0 L3221.5 545.6 L3225.3 529.4 L3229.2 540.8 L3233.0 538.7 L3236.8 546.9 L3240.7 555.8 L3244.5 544.2 L3248.3 541.3 L3252.2 544.8 L3256.0 543.4 L3259.8 538.2 L3263.7 552.9 L3267.5 532.0 L3271.3 551.6 L3275.2 548.9 L3279.0 546.6 L3282.8 535.6 L3286.7 557.3 L3290.5 535.1 L3294.3 553.9 L3298.2 551.0 L3302.0 539.5 L3305.8 528.1 L3309.7 538.0 L3313.5 538.4 L3317.3 540.1 L3321.2 556.2 L3325.0 538.9 L3328.8 542.8 L3332.7 553.2 L3336.5 544.1 L3340.3 548.4 L3344.2 544.4 L3348.0 540.2 L3351.8 552.1 L3355.7 546.1 L3359.5 543.8 L3363.3 545.4 L3367.2 543.1 L3371.0 547.0 L3374.8 542.0 L3378.7 539.6 L3382.5 548.1 L3386.3 539.3 L3390.2 551.2 L3394.0 559.7 L3397.8 543.9 L3401.7 552.8 L3405.5 542.8 L3409.3 553.2 L3413.2 541.2 L3417.0 545.3 L3420.8 541.2 L3424.7 546.6 L3428.5 534.7 L3432.3 551.9 L3436.2 549.3 L3440.0 547.3 L3443.8 546.8 L3447.7 540.7 L3451.5 557.5 L3455.3 551.4 L3459.2 558.3 L3463.0 556.7 L3466.8 546.3 L3470.7 559.0 L3474.5 553.2 L3478.3 547.6 L3482.2 542.4 L3486.0 533.4 L3489.8 540.5 L3493.7 545.7 L3497.5 536.8 L3501.3 539.1 L3505.2 549.5 L3509.0 542.9 L3512.8 542.9 L3516.7 556.8 L3520.5 547.1 L3524.3 537.1 L3528.2 548.8 L3532.0 539.1 L3532.0 724 L2500.8 724 Z" fill="#8AB8FF" fill-opacity="0.1"/><path d="M2500.8 548.5 L2504.6 548.2 L2508.5 559.5 L2512.3 551.0 L2516.1 547.2 L2520.0 534.2 L2523.8 549.3 L2527.6 536.4 L2531.5 549.9 L2535.3 541.1 L2539.1 541.9 L2543.0 544.2 L2546.8 538.3 L2550.6 532.5 L2554.5 550.7 L2558.3 541.4 L2562.1 552.1 L2566.0 541.4 L2569.8 540.8 L2573.6 546.7 L2577.5 530.0 L2581.3 546.9 L2585.1 558.0 L2589.0 536.7 L2592.8 540.2 L2596.6 541.8 L2600.5 543.7 L2604.3 537.7 L2608.1 544.6 L2612.0 565.9 L2615.8 539.9 L2619.6 553.2 L2623.5 533.9 L2627.3 560.7 L2631.1 556.8 L2635.0 560.9 L2638.8 541.5 L2642.6 536.2 L2646.5 550.6 L2650.3 542.1 L2654.1 546.3 L2658.0 542.5 L2661.8 534.8 L2665.6 543.2 L2669.5 547.5 L2673.3 551.7 L2677.1 550.5 L2681.0 546.5 L2684.8 530.8 L2688.6 520.2 L2692.5 528.2 L2696.3 540.7 L2700.1 546.9 L2704.0 533.6 L2707.8 537.9 L2711.6 547.5 L2715.5 534.8 L2719.3 533.8 L2723.1 551.1 L2727.0 541.9 L2730.8 527.8 L2734.6 546.2 L2738.5 546.7 L2742.3 545.7 L2746.1 547.1 L2750.0 548.6 L2753.8 544.6 L2757.6 540.2 L2761.5 536.6 L2765.3 543.8 L2769.1 528.0 L2773.0 522.7 L2776.8 532.8 L2780.6 533.5 L2784.5 555.0 L2788.3 536.5 L2792.1 540.1 L2796.0 540.6 L2799.8 535.8 L2803.6 545.7 L2807.5 543.6 L2811.3 545.9 L2815.1 540.0 L2819.0 538.2 L2822.8 545.6 L2826.6 550.3 L2830.5 539.1 L2834.3 548.7 L2838.1 546.5 L2842.0 550.0 L2845.8 538.4 L2849.6 547.7 L2853.5 560.3 L2857.3 514.6 L2861.1 550.8 L2865.0 548.1 L2868.8 542.7 L2872.6 545.7 L2876.5 540.8 L2880.3 541.8 L2884.1 561.9 L2888.0 544.9 L2891.8 540.0 L2895.6 553.9 L2899.5 548.9 L2903.3 551.0 L2907.1 533.1 L2911.0 547.6 L2914.8 546.9 L2918.6 568.3 L2922.5 546.6 L2926.3 556.0 L2930.1 553.4 L2934.0 539.9 L2937.8 546.4 L2941.6 541.9 L2945.5 552.3 L2949.3 552.4 L2953.1 560.0 L2957.0 552.6 L2960.8 545.6 L2964.6 523.8 L2968.5 548.0 L2972.3 540.3 L2976.1 549.7 L2980.0 552.9 L2983.8 535.5 L2987.6 553.1 L2991.5 537.8 L2995.3 543.2 L2999.1 554.2 L3003.0 548.3 L3006.8 540.5 L3010.6 541.8 L3014.5 554.2 L3018.3 537.7 L3022.2 556.7 L3026.0 534.5 L3029.8 541.2 L3033.7 546.5 L3037.5 551.1 L3041.3 540.5 L3045.2 544.2 L3049.0 538.4 L3052.8 553.7 L3056.7 550.4 L3060.5 541.5 L3064.3 536.2 L3068.2 537.5 L3072.0 545.3 L3075.8 545.0 L3079.7 555.7 L3083.5 550.0 L3087.3 549.9 L3091.2 541.8 L3095.0 556.7 L3098.8 547.8 L3102.7 553.6 L3106.5 536.5 L3110.3 549.6 L3114.2 555.2 L3118.0 551.2 L3121.8 566.8 L3125.7 538.2 L3129.5 546.9 L3133.3 540.0 L3137.2 539.5 L3141.0 550.3 L3144.8 540.9 L3148.7 548.8 L3152.5 537.1 L3156.3 543.1 L3160.2 538.5 L3164.0 546.1 L3167.8 545.5 L3171.7 539.8 L3175.5 548.0 L3179.3 542.7 L3183.2 554.9 L3187.0 560.9 L3190.8 536.7 L3194.7 540.3 L3198.5 545.0 L3202.3 551.9 L3206.2 538.8 L3210.0 551.6 L3213.8 543.2 L3217.7 531.0 L3221.5 545.6 L3225.3 529.4 L3229.2 540.8 L3233.0 538.7 L3236.8 546.9 L3240.7 555.8 L3244.5 544.2 L3248.3 541.3 L3252.2 544.8 L3256.0 543.4 L3259.8 538.2 L3263.7 552.9 L3267.5 532.0 L3271.3 551.6 L3275.2 548.9 L3279.0 546.6 L3282.8 535.6 L3286.7 557.3 L3290.5 535.1 L3294.3 553.9 L3298.2 551.0 L3302.0 539.5 L3305.8 528.1 L3309.7 538.0 L3313.5 538.4 L3317.3 540.1 L3321.2 556.2 L3325.0 538.9 L3328.8 542.8 L3332.7 553.2 L3336.5 544.1 L3340.3 548.4 L3344.2 544.4 L3348.0 540.2 L3351.8 552.1 L3355.7 546.1 L3359.5 543.8 L3363.3 545.4 L3367.2 543.1 L3371.0 547.0 L3374.8 542.0 L3378.7 539.6 L3382.5 548.1 L3386.3 539.3 L3390.2 551.2 L3394.0 559.7 L3397.8 543.9 L3401.7 552.8 L3405.5 542.8 L3409.3 553.2 L3413.2 541.2 L3417.0 545.3 L3420.8 541.2 L3424.7 546.6 L3428.5 534.7 L3432.3 551.9 L3436.2 549.3 L3440.0 547.3 L3443.8 546.8 L3447.7 540.7 L3451.5 557.5 L3455.3 551.4 L3459.2 558.3 L3463.0 556.7 L3466.8 546.3 L3470.7 559.0 L3474.5 553.2 L3478.3 547.6 L3482.2 542.4 L3486.0 533.4 L3489.8 540.5 L3493.7 545.7 L3497.5 536.8 L3501.3 539.1 L3505.2 549.5 L3509.0 542.9 L3512.8 542.9 L3516.7 556.8 L3520.5 547.1 L3524.3 537.1 L3528.2 548.8 L3532.0 539.1" fill="none" stroke="#8AB8FF" stroke-width="2" stroke-linejoin="round"/></g><clipPath id="c4"><rect x="140.6" y="946.7" width="1004.9999999999999" height="447.89999999999986"/></clipPath><line x1="140.6" y1="949" x2="1147.6" y2="949" stroke="rgb(68,70,76)" stroke-width="2"/><text x="130.1" y="957.7" text-anchor="end" font-size="26" letter-spacing="-2.50" fill="rgb(204,204,220)">1</text><line x1="140.6" y1="1059" x2="1147.6" y2="1059" stroke="rgb(68,70,76)" stroke-width="2"/><text x="130.1" y="1068.0" text-anchor="end" font-size="26" letter-spacing="-0.00" fill="rgb(204,204,220)">0.500</text><line x1="140.6" y1="1171" x2="1147.6" y2="1171" stroke="rgb(68,70,76)" stroke-width="2"/><text x="130.1" y="1180.0" text-anchor="end" font-size="26" letter-spacing="-0.00" fill="rgb(204,204,220)">0</text><line x1="140.6" y1="1283" x2="1147.6" y2="1283" stroke="rgb(68,70,76)" stroke-width="2"/><text x="130.1" y="1292.0" text-anchor="end" font-size="26" letter-spacing="-0.00" fill="rgb(204,204,220)">-0.500</text><line x1="140.6" y1="1395" x2="1147.6" y2="1395" stroke="rgb(68,70,76)" stroke-width="2"/><text x="130.1" y="1403.6" text-anchor="end" font-size="26" letter-spacing="-1.25" fill="rgb(204,204,220)">-1</text><line x1="143" y1="948.7" x2="143" y2="1394.6" stroke="rgb(68,70,76)" stroke-width="2"/><text x="142.6" y="1431.6" text-anchor="middle" font-size="26" fill="rgb(204,204,220)">20:30</text><line x1="311" y1="948.7" x2="311" y2="1394.6" stroke="rgb(68,70,76)" stroke-width="2"/><text x="310.6" y="1431.6" text-anchor="middle" font-size="26" fill="rgb(204,204,220)">21:00</text><line x1="479" y1="948.7" x2="479" y2="1394.6" stroke="rgb(68,70,76)" stroke-width="2"/><text x="478.6" y="1431.6" text-anchor="middle" font-size="26" fill="rgb(204,204,220)">21:30</text><line x1="647" y1="948.7" x2="647" y2="1394.6" stroke="rgb(68,70,76)" stroke-width="2"/><text x="646.6" y="1431.6" text-anchor="middle" font-size="26" fill="rgb(204,204,220)">22:00</text><line x1="815" y1="948.7" x2="815" y2="1394.6" stroke="rgb(68,70,76)" stroke-width="2"/><text x="814.6" y="1431.6" text-anchor="middle" font-size="26" fill="rgb(204,204,220)">22:30</text><line x1="983" y1="948.7" x2="983" y2="1394.6" stroke="rgb(68,70,76)" stroke-width="2"/><text x="982.6" y="1431.6" text-anchor="middle" font-size="26" fill="rgb(204,204,220)">23:00</text><g clip-path="url(#c4)"><path d="M140.6 1171.0 L193.5 1171.0 L246.4 1171.0 L299.3 1171.0 L352.2 1171.0 L405.1 1171.0 L458.0 1171.0 L510.9 1171.0 L563.8 1171.0 L616.7 1171.0 L669.5 1171.0 L722.4 1171.0 L775.3 1171.0 L828.2 1171.0 L881.1 1171.0 L934.0 1171.0 L986.9 1171.0 L1039.8 1171.0 L1092.7 1171.0 L1145.6 1171.0" fill="none" stroke="#6ED0E0" stroke-width="2" stroke-linejoin="round"/></g><clipPath id="c5"><rect x="1349.5" y="941.2" width="998.5" height="464.79999999999995"/></clipPath><line x1="1349.5" y1="943" x2="2350" y2="943" stroke="rgba(240,250,255,0.09)" stroke-width="2"/><text x="1339.0" y="952.2" text-anchor="end" font-size="26" letter-spacing="-0.36" fill="rgb(204,204,220)">1.00006</text><line x1="1349.5" y1="1021" x2="2350" y2="1021" stroke="rgba(240,250,255,0.09)" stroke-width="2"/><text x="1339.0" y="1029.7" text-anchor="end" font-size="26" letter-spacing="-0.36" fill="rgb(204,204,220)">1.00004</text><line x1="1349.5" y1="1098" x2="2350" y2="1098" stroke="rgba(240,250,255,0.09)" stroke-width="2"/><text x="1339.0" y="1106.6" text-anchor="end" font-size="26" letter-spacing="-0.36" fill="rgb(204,204,220)">1.00002</text><line x1="1349.5" y1="1175" x2="2350" y2="1175" stroke="rgba(240,250,255,0.09)" stroke-width="2"/><text x="1339.0" y="1183.6" text-anchor="end" font-size="26" letter-spacing="-2.50" fill="rgb(204,204,220)">1</text><line x1="1349.5" y1="1252" x2="2350" y2="1252" stroke="rgba(240,250,255,0.09)" stroke-width="2"/><text x="1339.0" y="1260.6" text-anchor="end" font-size="26" letter-spacing="-0.00" fill="rgb(204,204,220)">0.99998</text><line x1="1349.5" y1="1328" x2="2350" y2="1328" stroke="rgba(240,250,255,0.09)" stroke-width="2"/><text x="1339.0" y="1337.5" text-anchor="end" font-size="26" letter-spacing="-0.00" fill="rgb(204,204,220)">0.99996</text><line x1="1349.5" y1="1406" x2="2350" y2="1406" stroke="rgba(240,250,255,0.09)" stroke-width="2"/><text x="1339.0" y="1415.0" text-anchor="end" font-size="26" letter-spacing="-0.00" fill="rgb(204,204,220)">0.99994</text><line x1="1354" y1="943.2" x2="1354" y2="1413" stroke="rgba(240,250,255,0.09)" stroke-width="2"/><text x="1354.0" y="1443.0" text-anchor="middle" font-size="26" fill="rgb(204,204,220)">20:30</text><line x1="1520" y1="943.2" x2="1520" y2="1413" stroke="rgba(240,250,255,0.09)" stroke-width="2"/><text x="1520.5" y="1443.0" text-anchor="middle" font-size="26" fill="rgb(204,204,220)">21:00</text><line x1="1687" y1="943.2" x2="1687" y2="1413" stroke="rgba(240,250,255,0.09)" stroke-width="2"/><text x="1687.0" y="1443.0" text-anchor="middle" font-size="26" fill="rgb(204,204,220)">21:30</text><line x1="1854" y1="943.2" x2="1854" y2="1413" stroke="rgba(240,250,255,0.09)" stroke-width="2"/><text x="1853.5" y="1443.0" text-anchor="middle" font-size="26" fill="rgb(204,204,220)">22:00</text><line x1="2020" y1="943.2" x2="2020" y2="1413" stroke="rgba(240,250,255,0.09)" stroke-width="2"/><text x="2020.0" y="1443.0" text-anchor="middle" font-size="26" fill="rgb(204,204,220)">22:30</text><line x1="2186" y1="943.2" x2="2186" y2="1413" stroke="rgba(240,250,255,0.09)" stroke-width="2"/><text x="2186.5" y="1443.0" text-anchor="middle" font-size="26" fill="rgb(204,204,220)">23:00</text><g clip-path="url(#c5)"><path d="M1349.5 1174.6 L1353.2 1174.6 L1356.9 1174.6 L1360.6 1174.6 L1364.3 1174.6 L1368.1 1174.6 L1371.8 1174.6 L1375.5 983.8 L1379.2 1174.6 L1382.9 1174.6 L1386.6 1174.6 L1390.3 1174.6 L1394.0 1174.6 L1397.8 1174.6 L1401.5 1174.6 L1405.2 1174.6 L1408.9 1174.6 L1412.6 1174.6 L1416.3 1174.6 L1420.0 1174.6 L1423.7 1174.6 L1427.4 1174.6 L1431.2 1174.6 L1434.9 1174.6 L1438.6 1174.6 L1442.3 1174.6 L1446.0 1174.6 L1449.7 1174.6 L1453.4 1174.6 L1457.1 1174.6 L1460.9 1174.6 L1464.6 1174.6 L1468.3 1174.6 L1472.0 1174.6 L1475.7 1174.6 L1479.4 1174.6 L1483.1 1174.6 L1486.8 1174.6 L1490.6 1174.6 L1494.3 1174.6 L1498.0 1174.6 L1501.7 1174.6 L1505.4 1174.6 L1509.1 1174.6 L1512.8 1174.6 L1516.5 1174.6 L1520.2 1174.6 L1524.0 1174.6 L1527.7 1174.6 L1531.4 1174.6 L1535.1 1174.6 L1538.8 1174.6 L1542.5 1174.6 L1546.2 1174.6 L1549.9 1174.6 L1553.7 1174.6 L1557.4 1174.6 L1561.1 1174.6 L1564.8 1174.6 L1568.5 1174.6 L1572.2 1174.6 L1575.9 983.8 L1579.6 1174.6 L1583.3 1174.6 L1587.1 1174.6 L1590.8 1174.6 L1594.5 1174.6 L1598.2 1174.6 L1601.9 1174.6 L1605.6 1174.6 L1609.3 1174.6 L1613.0 1174.6 L1616.8 1174.6 L1620.5 1174.6 L1624.2 1174.6 L1627.9 1174.6 L1631.6 983.8 L1635.3 1174.6 L1639.0 1174.6 L1642.7 1174.6 L1646.5 1174.6 L1650.2 1174.6 L1653.9 1174.6 L1657.6 1174.6 L1661.3 1174.6 L1665.0 1174.6 L1668.7 1174.6 L1672.4 1174.6 L1676.1 1174.6 L1679.9 1174.6 L1683.6 1174.6 L1687.3 1174.6 L1691.0 1174.6 L1694.7 1174.6 L1698.4 1174.6 L1702.1 1174.6 L1705.8 1174.6 L1709.6 1174.6 L1713.3 1174.6 L1717.0 1174.6 L1720.7 1174.6 L1724.4 1174.6 L1728.1 1174.6 L1731.8 1174.6 L1735.5 1174.6 L1739.2 1174.6 L1743.0 1174.6 L1746.7 1174.6 L1750.4 1174.6 L1754.1 1174.6 L1757.8 1174.6 L1761.5 1174.6 L1765.2 1174.6 L1768.9 1174.6 L1772.7 1174.6 L1776.4 1174.6 L1780.1 1174.6 L1783.8 1174.6 L1787.5 1174.6 L1791.2 1174.6 L1794.9 1174.6 L1798.6 1174.6 L1802.4 1174.6 L1806.1 1174.6 L1809.8 1174.6 L1813.5 1174.6 L1817.2 1174.6 L1820.9 1174.6 L1824.6 1174.6 L1828.3 1174.6 L1832.0 1174.6 L1835.8 1174.6 L1839.5 1174.6 L1843.2 1174.6 L1846.9 1174.6 L1850.6 1174.6 L1854.3 1174.6 L1858.0 1174.6 L1861.7 1174.6 L1865.5 1174.6 L1869.2 1174.6 L1872.9 1174.6 L1876.6 1174.6 L1880.3 1174.6 L1884.0 1174.6 L1887.7 1174.6 L1891.4 1174.6 L1895.1 1174.6 L1898.9 1174.6 L1902.6 1174.6 L1906.3 1174.6 L1910.0 1174.6 L1913.7 1174.6 L1917.4 1174.6 L1921.1 1174.6 L1924.8 1174.6 L1928.6 1174.6 L1932.3 1174.6 L1936.0 1174.6 L1939.7 1174.6 L1943.4 1174.6 L1947.1 1174.6 L1950.8 1174.6 L1954.5 1174.6 L1958.3 1174.6 L1962.0 1174.6 L1965.7 1174.6 L1969.4 1174.6 L1973.1 1174.6 L1976.8 1174.6 L1980.5 1174.6 L1984.2 1174.6 L1987.9 1174.6 L1991.7 1174.6 L1995.4 1174.6 L1999.1 1174.6 L2002.8 1174.6 L2006.5 1174.6 L2010.2 1174.6 L2013.9 1174.6 L2017.6 1174.6 L2021.4 1174.6 L2025.1 1174.6 L2028.8 1174.6 L2032.5 1174.6 L2036.2 1174.6 L2039.9 1174.6 L2043.6 1174.6 L2047.3 1174.6 L2051.0 1174.6 L2054.8 1174.6 L2058.5 1174.6 L2062.2 1174.6 L2065.9 1174.6 L2069.6 1174.6 L2073.3 1174.6 L2077.0 1174.6 L2080.7 1174.6 L2084.5 1174.6 L2088.2 1174.6 L2091.9 1174.6 L2095.6 1174.6 L2099.3 1174.6 L2103.0 1174.6 L2106.7 1174.6 L2110.4 1174.6 L2114.2 1174.6 L2117.9 1174.6 L2121.6 1174.6 L2125.3 1174.6 L2129.0 1174.6 L2132.7 1174.6 L2136.4 1174.6 L2140.1 1174.6 L2143.8 1174.6 L2147.6 1174.6 L2151.3 1174.6 L2155.0 1174.6 L2158.7 1174.6 L2162.4 1174.6 L2166.1 1174.6 L2169.8 1174.6 L2173.5 1174.6 L2177.3 1174.6 L2181.0 1174.6 L2184.7 1174.6 L2188.4 1174.6 L2192.1 1174.6 L2195.8 1174.6 L2199.5 1174.6 L2203.2 1174.6 L2206.9 1174.6 L2210.7 1174.6 L2214.4 1174.6 L2218.1 1174.6 L2221.8 1174.6 L2225.5 1174.6 L2229.2 1174.6 L2232.9 1174.6 L2236.6 1174.6 L2240.4 1174.6 L2244.1 1174.6 L2247.8 1174.6 L2251.5 1174.6 L2255.2 1174.6 L2258.9 1174.6 L2262.6 1174.6 L2266.3 1174.6 L2270.1 1174.6 L2273.8 1174.6 L2277.5 1174.6 L2281.2 1174.6 L2284.9 1174.6 L2288.6 1174.6 L2292.3 1174.6 L2296.0 1174.6 L2299.7 1174.6 L2303.5 1174.6 L2307.2 1174.6 L2310.9 1174.6 L2314.6 1174.6 L2318.3 1174.6 L2322.0 1174.6 L2325.7 1174.6 L2329.4 1174.6 L2333.2 1174.6 L2336.9 1174.6 L2340.6 1174.6 L2344.3 1174.6 L2348.0 1174.6 L2348.0 1408 L1349.5 1408 Z" fill="#73BF69" fill-opacity="0.1"/><path d="M1349.5 1174.6 L1353.2 1174.6 L1356.9 1174.6 L1360.6 1174.6 L1364.3 1174.6 L1368.1 1174.6 L1371.8 1174.6 L1375.5 983.8 L1379.2 1174.6 L1382.9 1174.6 L1386.6 1174.6 L1390.3 1174.6 L1394.0 1174.6 L1397.8 1174.6 L1401.5 1174.6 L1405.2 1174.6 L1408.9 1174.6 L1412.6 1174.6 L1416.3 1174.6 L1420.0 1174.6 L1423.7 1174.6 L1427.4 1174.6 L1431.2 1174.6 L1434.9 1174.6 L1438.6 1174.6 L1442.3 1174.6 L1446.0 1174.6 L1449.7 1174.6 L1453.4 1174.6 L1457.1 1174.6 L1460.9 1174.6 L1464.6 1174.6 L1468.3 1174.6 L1472.0 1174.6 L1475.7 1174.6 L1479.4 1174.6 L1483.1 1174.6 L1486.8 1174.6 L1490.6 1174.6 L1494.3 1174.6 L1498.0 1174.6 L1501.7 1174.6 L1505.4 1174.6 L1509.1 1174.6 L1512.8 1174.6 L1516.5 1174.6 L1520.2 1174.6 L1524.0 1174.6 L1527.7 1174.6 L1531.4 1174.6 L1535.1 1174.6 L1538.8 1174.6 L1542.5 1174.6 L1546.2 1174.6 L1549.9 1174.6 L1553.7 1174.6 L1557.4 1174.6 L1561.1 1174.6 L1564.8 1174.6 L1568.5 1174.6 L1572.2 1174.6 L1575.9 983.8 L1579.6 1174.6 L1583.3 1174.6 L1587.1 1174.6 L1590.8 1174.6 L1594.5 1174.6 L1598.2 1174.6 L1601.9 1174.6 L1605.6 1174.6 L1609.3 1174.6 L1613.0 1174.6 L1616.8 1174.6 L1620.5 1174.6 L1624.2 1174.6 L1627.9 1174.6 L1631.6 983.8 L1635.3 1174.6 L1639.0 1174.6 L1642.7 1174.6 L1646.5 1174.6 L1650.2 1174.6 L1653.9 1174.6 L1657.6 1174.6 L1661.3 1174.6 L1665.0 1174.6 L1668.7 1174.6 L1672.4 1174.6 L1676.1 1174.6 L1679.9 1174.6 L1683.6 1174.6 L1687.3 1174.6 L1691.0 1174.6 L1694.7 1174.6 L1698.4 1174.6 L1702.1 1174.6 L1705.8 1174.6 L1709.6 1174.6 L1713.3 1174.6 L1717.0 1174.6 L1720.7 1174.6 L1724.4 1174.6 L1728.1 1174.6 L1731.8 1174.6 L1735.5 1174.6 L1739.2 1174.6 L1743.0 1174.6 L1746.7 1174.6 L1750.4 1174.6 L1754.1 1174.6 L1757.8 1174.6 L1761.5 1174.6 L1765.2 1174.6 L1768.9 1174.6 L1772.7 1174.6 L1776.4 1174.6 L1780.1 1174.6 L1783.8 1174.6 L1787.5 1174.6 L1791.2 1174.6 L1794.9 1174.6 L1798.6 1174.6 L1802.4 1174.6 L1806.1 1174.6 L1809.8 1174.6 L1813.5 1174.6 L1817.2 1174.6 L1820.9 1174.6 L1824.6 1174.6 L1828.3 1174.6 L1832.0 1174.6 L1835.8 1174.6 L1839.5 1174.6 L1843.2 1174.6 L1846.9 1174.6 L1850.6 1174.6 L1854.3 1174.6 L1858.0 1174.6 L1861.7 1174.6 L1865.5 1174.6 L1869.2 1174.6 L1872.9 1174.6 L1876.6 1174.6 L1880.3 1174.6 L1884.0 1174.6 L1887.7 1174.6 L1891.4 1174.6 L1895.1 1174.6 L1898.9 1174.6 L1902.6 1174.6 L1906.3 1174.6 L1910.0 1174.6 L1913.7 1174.6 L1917.4 1174.6 L1921.1 1174.6 L1924.8 1174.6 L1928.6 1174.6 L1932.3 1174.6 L1936.0 1174.6 L1939.7 1174.6 L1943.4 1174.6 L1947.1 1174.6 L1950.8 1174.6 L1954.5 1174.6 L1958.3 1174.6 L1962.0 1174.6 L1965.7 1174.6 L1969.4 1174.6 L1973.1 1174.6 L1976.8 1174.6 L1980.5 1174.6 L1984.2 1174.6 L1987.9 1174.6 L1991.7 1174.6 L1995.4 1174.6 L1999.1 1174.6 L2002.8 1174.6 L2006.5 1174.6 L2010.2 1174.6 L2013.9 1174.6 L2017.6 1174.6 L2021.4 1174.6 L2025.1 1174.6 L2028.8 1174.6 L2032.5 1174.6 L2036.2 1174.6 L2039.9 1174.6 L2043.6 1174.6 L2047.3 1174.6 L2051.0 1174.6 L2054.8 1174.6 L2058.5 1174.6 L2062.2 1174.6 L2065.9 1174.6 L2069.6 1174.6 L2073.3 1174.6 L2077.0 1174.6 L2080.7 1174.6 L2084.5 1174.6 L2088.2 1174.6 L2091.9 1174.6 L2095.6 1174.6 L2099.3 1174.6 L2103.0 1174.6 L2106.7 1174.6 L2110.4 1174.6 L2114.2 1174.6 L2117.9 1174.6 L2121.6 1174.6 L2125.3 1174.6 L2129.0 1174.6 L2132.7 1174.6 L2136.4 1174.6 L2140.1 1174.6 L2143.8 1174.6 L2147.6 1174.6 L2151.3 1174.6 L2155.0 1174.6 L2158.7 1174.6 L2162.4 1174.6 L2166.1 1174.6 L2169.8 1174.6 L2173.5 1174.6 L2177.3 1174.6 L2181.0 1174.6 L2184.7 1174.6 L2188.4 1174.6 L2192.1 1174.6 L2195.8 1174.6 L2199.5 1174.6 L2203.2 1174.6 L2206.9 1174.6 L2210.7 1174.6 L2214.4 1174.6 L2218.1 1174.6 L2221.8 1174.6 L2225.5 1174.6 L2229.2 1174.6 L2232.9 1174.6 L2236.6 1174.6 L2240.4 1174.6 L2244.1 1174.6 L2247.8 1174.6 L2251.5 1174.6 L2255.2 1174.6 L2258.9 1174.6 L2262.6 1174.6 L2266.3 1174.6 L2270.1 1174.6 L2273.8 1174.6 L2277.5 1174.6 L2281.2 1174.6 L2284.9 1174.6 L2288.6 1174.6 L2292.3 1174.6 L2296.0 1174.6 L2299.7 1174.6 L2303.5 1174.6 L2307.2 1174.6 L2310.9 1174.6 L2314.6 1174.6 L2318.3 1174.6 L2322.0 1174.6 L2325.7 1174.6 L2329.4 1174.6 L2333.2 1174.6 L2336.9 1174.6 L2340.6 1174.6 L2344.3 1174.6 L2348.0 1174.6" fill="none" stroke="#73BF69" stroke-width="2" stroke-linejoin="round"/><path d="M1349.5 1174.6 L1353.2 1174.6 L1356.9 1174.6 L1360.6 1174.6 L1364.3 1174.6 L1368.1 1174.6 L1371.8 1174.6 L1375.5 1174.6 L1379.2 1174.6 L1382.9 1174.6 L1386.6 1174.6 L1390.3 1174.6 L1394.0 1174.6 L1397.8 1174.6 L1401.5 1174.6 L1405.2 1174.6 L1408.9 1174.6 L1412.6 1174.6 L1416.3 1174.6 L1420.0 1174.6 L1423.7 1174.6 L1427.4 1174.6 L1431.2 1174.6 L1434.9 1174.6 L1438.6 1174.6 L1442.3 1174.6 L1446.0 1174.6 L1449.7 1174.6 L1453.4 1174.6 L1457.1 1174.6 L1460.9 1174.6 L1464.6 1174.6 L1468.3 1174.6 L1472.0 1174.6 L1475.7 1174.6 L1479.4 1174.6 L1483.1 1174.6 L1486.8 1174.6 L1490.6 1174.6 L1494.3 1174.6 L1498.0 1174.6 L1501.7 1174.6 L1505.4 1174.6 L1509.1 1174.6 L1512.8 1174.6 L1516.5 1174.6 L1520.2 1174.6 L1524.0 1174.6 L1527.7 1174.6 L1531.4 1174.6 L1535.1 1174.6 L1538.8 1174.6 L1542.5 1174.6 L1546.2 1174.6 L1549.9 1174.6 L1553.7 1174.6 L1557.4 1174.6 L1561.1 1174.6 L1564.8 1174.6 L1568.5 1174.6 L1572.2 1174.6 L1575.9 1174.6 L1579.6 1174.6 L1583.3 1174.6 L1587.1 1174.6 L1590.8 1174.6 L1594.5 1174.6 L1598.2 1174.6 L1601.9 1174.6 L1605.6 1174.6 L1609.3 1174.6 L1613.0 1174.6 L1616.8 1174.6 L1620.5 1174.6 L1624.2 1174.6 L1627.9 1174.6 L1631.6 1174.6 L1635.3 1174.6 L1639.0 1174.6 L1642.7 1174.6 L1646.5 1174.6 L1650.2 1174.6 L1653.9 1174.6 L1657.6 1174.6 L1661.3 1174.6 L1665.0 1174.6 L1668.7 1174.6 L1672.4 1174.6 L1676.1 983.8 L1679.9 1174.6 L1683.6 1174.6 L1687.3 1174.6 L1691.0 1174.6 L1694.7 1174.6 L1698.4 1174.6 L1702.1 1174.6 L1705.8 1174.6 L1709.6 1174.6 L1713.3 1174.6 L1717.0 1174.6 L1720.7 1174.6 L1724.4 1174.6 L1728.1 1174.6 L1731.8 1174.6 L1735.5 1174.6 L1739.2 1174.6 L1743.0 1174.6 L1746.7 1174.6 L1750.4 1174.6 L1754.1 1174.6 L1757.8 1174.6 L1761.5 1174.6 L1765.2 1174.6 L1768.9 1174.6 L1772.7 1174.6 L1776.4 1174.6 L1780.1 1174.6 L1783.8 1174.6 L1787.5 1174.6 L1791.2 1174.6 L1794.9 1174.6 L1798.6 1174.6 L1802.4 1174.6 L1806.1 1174.6 L1809.8 1174.6 L1813.5 1174.6 L1817.2 1174.6 L1820.9 1174.6 L1824.6 1174.6 L1828.3 1174.6 L1832.0 1174.6 L1835.8 1174.6 L1839.5 1174.6 L1843.2 1174.6 L1846.9 1174.6 L1850.6 1174.6 L1854.3 1174.6 L1858.0 1174.6 L1861.7 1174.6 L1865.5 1174.6 L1869.2 1174.6 L1872.9 1174.6 L1876.6 1174.6 L1880.3 1174.6 L1884.0 1174.6 L1887.7 1174.6 L1891.4 1174.6 L1895.1 1174.6 L1898.9 1174.6 L1902.6 1174.6 L1906.3 1174.6 L1910.0 1174.6 L1913.7 1174.6 L1917.4 1174.6 L1921.1 1174.6 L1924.8 1174.6 L1928.6 1174.6 L1932.3 1174.6 L1936.0 1174.6 L1939.7 1174.6 L1943.4 1174.6 L1947.1 1174.6 L1950.8 1174.6 L1954.5 1174.6 L1958.3 1174.6 L1962.0 1174.6 L1965.7 1174.6 L1969.4 1174.6 L1973.1 1174.6 L1976.8 1174.6 L1980.5 1174.6 L1984.2 1174.6 L1987.9 1174.6 L1991.7 1174.6 L1995.4 1174.6 L1999.1 1174.6 L2002.8 1174.6 L2006.5 1174.6 L2010.2 1174.6 L2013.9 1174.6 L2017.6 1174.6 L2021.4 1174.6 L2025.1 1174.6 L2028.8 1174.6 L2032.5 1174.6 L2036.2 1174.6 L2039.9 1174.6 L2043.6 1174.6 L2047.3 1174.6 L2051.0 1174.6 L2054.8 1174.6 L2058.5 1174.6 L2062.2 1174.6 L2065.9 1174.6 L2069.6 1174.6 L2073.3 1174.6 L2077.0 1174.6 L2080.7 1174.6 L2084.5 1174.6 L2088.2 1174.6 L2091.9 1174.6 L2095.6 1174.6 L2099.3 1174.6 L2103.0 1174.6 L2106.7 1174.6 L2110.4 1174.6 L2114.2 1174.6 L2117.9 1174.6 L2121.6 1174.6 L2125.3 1174.6 L2129.0 1174.6 L2132.7 1174.6 L2136.4 1174.6 L2140.1 1174.6 L2143.8 1174.6 L2147.6 1174.6 L2151.3 1174.6 L2155.0 1365.4 L2158.7 1174.6 L2162.4 1174.6 L2166.1 1174.6 L2169.8 1174.6 L2173.5 1174.6 L2177.3 1174.6 L2181.0 1174.6 L2184.7 1174.6 L2188.4 1174.6 L2192.1 1174.6 L2195.8 1174.6 L2199.5 1174.6 L2203.2 1174.6 L2206.9 1174.6 L2210.7 1174.6 L2214.4 1174.6 L2218.1 1174.6 L2221.8 1174.6 L2225.5 1174.6 L2229.2 1174.6 L2232.9 1174.6 L2236.6 1174.6 L2240.4 1174.6 L2244.1 1174.6 L2247.8 1174.6 L2251.5 1174.6 L2255.2 1174.6 L2258.9 1174.6 L2262.6 1174.6 L2266.3 1174.6 L2270.1 1174.6 L2273.8 1174.6 L2277.5 1174.6 L2281.2 1174.6 L2284.9 1174.6 L2288.6 1174.6 L2292.3 1174.6 L2296.0 1174.6 L2299.7 1174.6 L2303.5 1174.6 L2307.2 1174.6 L2310.9 1174.6 L2314.6 1174.6 L2318.3 1174.6 L2322.0 1174.6 L2325.7 1174.6 L2329.4 1174.6 L2333.2 1174.6 L2336.9 1174.6 L2340.6 1174.6 L2344.3 1174.6 L2348.0 1174.6 L2348.0 1408 L1349.5 1408 Z" fill="#F2CC0C" fill-opacity="0.1"/><path d="M1349.5 1174.6 L1353.2 1174.6 L1356.9 1174.6 L1360.6 1174.6 L1364.3 1174.6 L1368.1 1174.6 L1371.8 1174.6 L1375.5 1174.6 L1379.2 1174.6 L1382.9 1174.6 L1386.6 1174.6 L1390.3 1174.6 L1394.0 1174.6 L1397.8 1174.6 L1401.5 1174.6 L1405.2 1174.6 L1408.9 1174.6 L1412.6 1174.6 L1416.3 1174.6 L1420.0 1174.6 L1423.7 1174.6 L1427.4 1174.6 L1431.2 1174.6 L1434.9 1174.6 L1438.6 1174.6 L1442.3 1174.6 L1446.0 1174.6 L1449.7 1174.6 L1453.4 1174.6 L1457.1 1174.6 L1460.9 1174.6 L1464.6 1174.6 L1468.3 1174.6 L1472.0 1174.6 L1475.7 1174.6 L1479.4 1174.6 L1483.1 1174.6 L1486.8 1174.6 L1490.6 1174.6 L1494.3 1174.6 L1498.0 1174.6 L1501.7 1174.6 L1505.4 1174.6 L1509.1 1174.6 L1512.8 1174.6 L1516.5 1174.6 L1520.2 1174.6 L1524.0 1174.6 L1527.7 1174.6 L1531.4 1174.6 L1535.1 1174.6 L1538.8 1174.6 L1542.5 1174.6 L1546.2 1174.6 L1549.9 1174.6 L1553.7 1174.6 L1557.4 1174.6 L1561.1 1174.6 L1564.8 1174.6 L1568.5 1174.6 L1572.2 1174.6 L1575.9 1174.6 L1579.6 1174.6 L1583.3 1174.6 L1587.1 1174.6 L1590.8 1174.6 L1594.5 1174.6 L1598.2 1174.6 L1601.9 1174.6 L1605.6 1174.6 L1609.3 1174.6 L1613.0 1174.6 L1616.8 1174.6 L1620.5 1174.6 L1624.2 1174.6 L1627.9 1174.6 L1631.6 1174.6 L1635.3 1174.6 L1639.0 1174.6 L1642.7 1174.6 L1646.5 1174.6 L1650.2 1174.6 L1653.9 1174.6 L1657.6 1174.6 L1661.3 1174.6 L1665.0 1174.6 L1668.7 1174.6 L1672.4 1174.6 L1676.1 983.8 L1679.9 1174.6 L1683.6 1174.6 L1687.3 1174.6 L1691.0 1174.6 L1694.7 1174.6 L1698.4 1174.6 L1702.1 1174.6 L1705.8 1174.6 L1709.6 1174.6 L1713.3 1174.6 L1717.0 1174.6 L1720.7 1174.6 L1724.4 1174.6 L1728.1 1174.6 L1731.8 1174.6 L1735.5 1174.6 L1739.2 1174.6 L1743.0 1174.6 L1746.7 1174.6 L1750.4 1174.6 L1754.1 1174.6 L1757.8 1174.6 L1761.5 1174.6 L1765.2 1174.6 L1768.9 1174.6 L1772.7 1174.6 L1776.4 1174.6 L1780.1 1174.6 L1783.8 1174.6 L1787.5 1174.6 L1791.2 1174.6 L1794.9 1174.6 L1798.6 1174.6 L1802.4 1174.6 L1806.1 1174.6 L1809.8 1174.6 L1813.5 1174.6 L1817.2 1174.6 L1820.9 1174.6 L1824.6 1174.6 L1828.3 1174.6 L1832.0 1174.6 L1835.8 1174.6 L1839.5 1174.6 L1843.2 1174.6 L1846.9 1174.6 L1850.6 1174.6 L1854.3 1174.6 L1858.0 1174.6 L1861.7 1174.6 L1865.5 1174.6 L1869.2 1174.6 L1872.9 1174.6 L1876.6 1174.6 L1880.3 1174.6 L1884.0 1174.6 L1887.7 1174.6 L1891.4 1174.6 L1895.1 1174.6 L1898.9 1174.6 L1902.6 1174.6 L1906.3 1174.6 L1910.0 1174.6 L1913.7 1174.6 L1917.4 1174.6 L1921.1 1174.6 L1924.8 1174.6 L1928.6 1174.6 L1932.3 1174.6 L1936.0 1174.6 L1939.7 1174.6 L1943.4 1174.6 L1947.1 1174.6 L1950.8 1174.6 L1954.5 1174.6 L1958.3 1174.6 L1962.0 1174.6 L1965.7 1174.6 L1969.4 1174.6 L1973.1 1174.6 L1976.8 1174.6 L1980.5 1174.6 L1984.2 1174.6 L1987.9 1174.6 L1991.7 1174.6 L1995.4 1174.6 L1999.1 1174.6 L2002.8 1174.6 L2006.5 1174.6 L2010.2 1174.6 L2013.9 1174.6 L2017.6 1174.6 L2021.4 1174.6 L2025.1 1174.6 L2028.8 1174.6 L2032.5 1174.6 L2036.2 1174.6 L2039.9 1174.6 L2043.6 1174.6 L2047.3 1174.6 L2051.0 1174.6 L2054.8 1174.6 L2058.5 1174.6 L2062.2 1174.6 L2065.9 1174.6 L2069.6 1174.6 L2073.3 1174.6 L2077.0 1174.6 L2080.7 1174.6 L2084.5 1174.6 L2088.2 1174.6 L2091.9 1174.6 L2095.6 1174.6 L2099.3 1174.6 L2103.0 1174.6 L2106.7 1174.6 L2110.4 1174.6 L2114.2 1174.6 L2117.9 1174.6 L2121.6 1174.6 L2125.3 1174.6 L2129.0 1174.6 L2132.7 1174.6 L2136.4 1174.6 L2140.1 1174.6 L2143.8 1174.6 L2147.6 1174.6 L2151.3 1174.6 L2155.0 1365.4 L2158.7 1174.6 L2162.4 1174.6 L2166.1 1174.6 L2169.8 1174.6 L2173.5 1174.6 L2177.3 1174.6 L2181.0 1174.6 L2184.7 1174.6 L2188.4 1174.6 L2192.1 1174.6 L2195.8 1174.6 L2199.5 1174.6 L2203.2 1174.6 L2206.9 1174.6 L2210.7 1174.6 L2214.4 1174.6 L2218.1 1174.6 L2221.8 1174.6 L2225.5 1174.6 L2229.2 1174.6 L2232.9 1174.6 L2236.6 1174.6 L2240.4 1174.6 L2244.1 1174.6 L2247.8 1174.6 L2251.5 1174.6 L2255.2 1174.6 L2258.9 1174.6 L2262.6 1174.6 L2266.3 1174.6 L2270.1 1174.6 L2273.8 1174.6 L2277.5 1174.6 L2281.2 1174.6 L2284.9 1174.6 L2288.6 1174.6 L2292.3 1174.6 L2296.0 1174.6 L2299.7 1174.6 L2303.5 1174.6 L2307.2 1174.6 L2310.9 1174.6 L2314.6 1174.6 L2318.3 1174.6 L2322.0 1174.6 L2325.7 1174.6 L2329.4 1174.6 L2333.2 1174.6 L2336.9 1174.6 L2340.6 1174.6 L2344.3 1174.6 L2348.0 1174.6" fill="none" stroke="#F2CC0C" stroke-width="2" stroke-linejoin="round"/><path d="M1349.5 1174.6 L1353.2 1174.6 L1356.9 1174.6 L1360.6 1174.6 L1364.3 1174.6 L1368.1 1174.6 L1371.8 1174.6 L1375.5 1174.6 L1379.2 1174.6 L1382.9 1174.6 L1386.6 1174.6 L1390.3 1174.6 L1394.0 1174.6 L1397.8 1174.6 L1401.5 1174.6 L1405.2 1174.6 L1408.9 1174.6 L1412.6 1174.6 L1416.3 1174.6 L1420.0 1174.6 L1423.7 1174.6 L1427.4 1174.6 L1431.2 1174.6 L1434.9 1174.6 L1438.6 1174.6 L1442.3 1174.6 L1446.0 1174.6 L1449.7 1174.6 L1453.4 1174.6 L1457.1 1174.6 L1460.9 1174.6 L1464.6 1174.6 L1468.3 1174.6 L1472.0 1174.6 L1475.7 1174.6 L1479.4 1174.6 L1483.1 1174.6 L1486.8 1174.6 L1490.6 1174.6 L1494.3 1174.6 L1498.0 1174.6 L1501.7 1174.6 L1505.4 1174.6 L1509.1 1174.6 L1512.8 1174.6 L1516.5 1174.6 L1520.2 1174.6 L1524.0 1174.6 L1527.7 1174.6 L1531.4 1174.6 L1535.1 1174.6 L1538.8 1174.6 L1542.5 1174.6 L1546.2 1174.6 L1549.9 1174.6 L1553.7 1174.6 L1557.4 1174.6 L1561.1 1174.6 L1564.8 1174.6 L1568.5 1174.6 L1572.2 1174.6 L1575.9 1174.6 L1579.6 1174.6 L1583.3 1174.6 L1587.1 1174.6 L1590.8 1174.6 L1594.5 1174.6 L1598.2 1174.6 L1601.9 1174.6 L1605.6 1174.6 L1609.3 1174.6 L1613.0 1174.6 L1616.8 1174.6 L1620.5 1174.6 L1624.2 1174.6 L1627.9 1174.6 L1631.6 1174.6 L1635.3 1174.6 L1639.0 1174.6 L1642.7 1174.6 L1646.5 1174.6 L1650.2 1174.6 L1653.9 1174.6 L1657.6 1174.6 L1661.3 1174.6 L1665.0 1174.6 L1668.7 1174.6 L1672.4 1174.6 L1676.1 1174.6 L1679.9 1174.6 L1683.6 1174.6 L1687.3 1174.6 L1691.0 1174.6 L1694.7 1174.6 L1698.4 1174.6 L1702.1 1174.6 L1705.8 1174.6 L1709.6 1174.6 L1713.3 1174.6 L1717.0 1174.6 L1720.7 1174.6 L1724.4 1174.6 L1728.1 1174.6 L1731.8 1174.6 L1735.5 1174.6 L1739.2 1174.6 L1743.0 1174.6 L1746.7 1174.6 L1750.4 1174.6 L1754.1 1174.6 L1757.8 1174.6 L1761.5 1174.6 L1765.2 1174.6 L1768.9 1174.6 L1772.7 1174.6 L1776.4 1174.6 L1780.1 1174.6 L1783.8 1174.6 L1787.5 1174.6 L1791.2 1174.6 L1794.9 1174.6 L1798.6 1174.6 L1802.4 1174.6 L1806.1 1174.6 L1809.8 1365.4 L1813.5 1174.6 L1817.2 1174.6 L1820.9 1174.6 L1824.6 1174.6 L1828.3 1174.6 L1832.0 1174.6 L1835.8 1174.6 L1839.5 1174.6 L1843.2 1174.6 L1846.9 1174.6 L1850.6 1174.6 L1854.3 1174.6 L1858.0 1174.6 L1861.7 1174.6 L1865.5 1174.6 L1869.2 1174.6 L1872.9 1174.6 L1876.6 1174.6 L1880.3 1174.6 L1884.0 1174.6 L1887.7 1174.6 L1891.4 1174.6 L1895.1 1174.6 L1898.9 1174.6 L1902.6 1174.6 L1906.3 1174.6 L1910.0 1174.6 L1913.7 1174.6 L1917.4 983.8 L1921.1 1174.6 L1924.8 1174.6 L1928.6 1174.6 L1932.3 1174.6 L1936.0 1174.6 L1939.7 1174.6 L1943.4 1174.6 L1947.1 1174.6 L1950.8 1174.6 L1954.5 1174.6 L1958.3 1174.6 L1962.0 1174.6 L1965.7 1174.6 L1969.4 1174.6 L1973.1 1174.6 L1976.8 1174.6 L1980.5 1174.6 L1984.2 1174.6 L1987.9 1174.6 L1991.7 1174.6 L1995.4 1174.6 L1999.1 1174.6 L2002.8 1174.6 L2006.5 1174.6 L2010.2 1174.6 L2013.9 1174.6 L2017.6 1174.6 L2021.4 1174.6 L2025.1 1174.6 L2028.8 1174.6 L2032.5 1174.6 L2036.2 1174.6 L2039.9 1174.6 L2043.6 1174.6 L2047.3 1174.6 L2051.0 1174.6 L2054.8 1174.6 L2058.5 1174.6 L2062.2 1174.6 L2065.9 1174.6 L2069.6 1174.6 L2073.3 1174.6 L2077.0 1174.6 L2080.7 1174.6 L2084.5 1174.6 L2088.2 1174.6 L2091.9 983.8 L2095.6 1174.6 L2099.3 1174.6 L2103.0 1174.6 L2106.7 1174.6 L2110.4 1174.6 L2114.2 1174.6 L2117.9 1174.6 L2121.6 1174.6 L2125.3 1174.6 L2129.0 1174.6 L2132.7 1174.6 L2136.4 1174.6 L2140.1 1174.6 L2143.8 1174.6 L2147.6 1174.6 L2151.3 1174.6 L2155.0 1174.6 L2158.7 1174.6 L2162.4 1174.6 L2166.1 1174.6 L2169.8 1174.6 L2173.5 1174.6 L2177.3 1174.6 L2181.0 1174.6 L2184.7 1174.6 L2188.4 1174.6 L2192.1 1174.6 L2195.8 1174.6 L2199.5 1174.6 L2203.2 1174.6 L2206.9 1174.6 L2210.7 1174.6 L2214.4 1174.6 L2218.1 1174.6 L2221.8 1174.6 L2225.5 1174.6 L2229.2 1174.6 L2232.9 1174.6 L2236.6 1174.6 L2240.4 1174.6 L2244.1 1174.6 L2247.8 1174.6 L2251.5 1174.6 L2255.2 1174.6 L2258.9 1174.6 L2262.6 1174.6 L2266.3 1174.6 L2270.1 1174.6 L2273.8 1174.6 L2277.5 1174.6 L2281.2 1174.6 L2284.9 1174.6 L2288.6 1174.6 L2292.3 1174.6 L2296.0 1174.6 L2299.7 1174.6 L2303.5 1174.6 L2307.2 1174.6 L2310.9 1174.6 L2314.6 1174.6 L2318.3 1174.6 L2322.0 1174.6 L2325.7 1174.6 L2329.4 1174.6 L2333.2 983.8 L2336.9 1174.6 L2340.6 1174.6 L2344.3 1174.6 L2348.0 1174.6 L2348.0 1408 L1349.5 1408 Z" fill="#8AB8FF" fill-opacity="0.1"/><path d="M1349.5 1174.6 L1353.2 1174.6 L1356.9 1174.6 L1360.6 1174.6 L1364.3 1174.6 L1368.1 1174.6 L1371.8 1174.6 L1375.5 1174.6 L1379.2 1174.6 L1382.9 1174.6 L1386.6 1174.6 L1390.3 1174.6 L1394.0 1174.6 L1397.8 1174.6 L1401.5 1174.6 L1405.2 1174.6 L1408.9 1174.6 L1412.6 1174.6 L1416.3 1174.6 L1420.0 1174.6 L1423.7 1174.6 L1427.4 1174.6 L1431.2 1174.6 L1434.9 1174.6 L1438.6 1174.6 L1442.3 1174.6 L1446.0 1174.6 L1449.7 1174.6 L1453.4 1174.6 L1457.1 1174.6 L1460.9 1174.6 L1464.6 1174.6 L1468.3 1174.6 L1472.0 1174.6 L1475.7 1174.6 L1479.4 1174.6 L1483.1 1174.6 L1486.8 1174.6 L1490.6 1174.6 L1494.3 1174.6 L1498.0 1174.6 L1501.7 1174.6 L1505.4 1174.6 L1509.1 1174.6 L1512.8 1174.6 L1516.5 1174.6 L1520.2 1174.6 L1524.0 1174.6 L1527.7 1174.6 L1531.4 1174.6 L1535.1 1174.6 L1538.8 1174.6 L1542.5 1174.6 L1546.2 1174.6 L1549.9 1174.6 L1553.7 1174.6 L1557.4 1174.6 L1561.1 1174.6 L1564.8 1174.6 L1568.5 1174.6 L1572.2 1174.6 L1575.9 1174.6 L1579.6 1174.6 L1583.3 1174.6 L1587.1 1174.6 L1590.8 1174.6 L1594.5 1174.6 L1598.2 1174.6 L1601.9 1174.6 L1605.6 1174.6 L1609.3 1174.6 L1613.0 1174.6 L1616.8 1174.6 L1620.5 1174.6 L1624.2 1174.6 L1627.9 1174.6 L1631.6 1174.6 L1635.3 1174.6 L1639.0 1174.6 L1642.7 1174.6 L1646.5 1174.6 L1650.2 1174.6 L1653.9 1174.6 L1657.6 1174.6 L1661.3 1174.6 L1665.0 1174.6 L1668.7 1174.6 L1672.4 1174.6 L1676.1 1174.6 L1679.9 1174.6 L1683.6 1174.6 L1687.3 1174.6 L1691.0 1174.6 L1694.7 1174.6 L1698.4 1174.6 L1702.1 1174.6 L1705.8 1174.6 L1709.6 1174.6 L1713.3 1174.6 L1717.0 1174.6 L1720.7 1174.6 L1724.4 1174.6 L1728.1 1174.6 L1731.8 1174.6 L1735.5 1174.6 L1739.2 1174.6 L1743.0 1174.6 L1746.7 1174.6 L1750.4 1174.6 L1754.1 1174.6 L1757.8 1174.6 L1761.5 1174.6 L1765.2 1174.6 L1768.9 1174.6 L1772.7 1174.6 L1776.4 1174.6 L1780.1 1174.6 L1783.8 1174.6 L1787.5 1174.6 L1791.2 1174.6 L1794.9 1174.6 L1798.6 1174.6 L1802.4 1174.6 L1806.1 1174.6 L1809.8 1365.4 L1813.5 1174.6 L1817.2 1174.6 L1820.9 1174.6 L1824.6 1174.6 L1828.3 1174.6 L1832.0 1174.6 L1835.8 1174.6 L1839.5 1174.6 L1843.2 1174.6 L1846.9 1174.6 L1850.6 1174.6 L1854.3 1174.6 L1858.0 1174.6 L1861.7 1174.6 L1865.5 1174.6 L1869.2 1174.6 L1872.9 1174.6 L1876.6 1174.6 L1880.3 1174.6 L1884.0 1174.6 L1887.7 1174.6 L1891.4 1174.6 L1895.1 1174.6 L1898.9 1174.6 L1902.6 1174.6 L1906.3 1174.6 L1910.0 1174.6 L1913.7 1174.6 L1917.4 983.8 L1921.1 1174.6 L1924.8 1174.6 L1928.6 1174.6 L1932.3 1174.6 L1936.0 1174.6 L1939.7 1174.6 L1943.4 1174.6 L1947.1 1174.6 L1950.8 1174.6 L1954.5 1174.6 L1958.3 1174.6 L1962.0 1174.6 L1965.7 1174.6 L1969.4 1174.6 L1973.1 1174.6 L1976.8 1174.6 L1980.5 1174.6 L1984.2 1174.6 L1987.9 1174.6 L1991.7 1174.6 L1995.4 1174.6 L1999.1 1174.6 L2002.8 1174.6 L2006.5 1174.6 L2010.2 1174.6 L2013.9 1174.6 L2017.6 1174.6 L2021.4 1174.6 L2025.1 1174.6 L2028.8 1174.6 L2032.5 1174.6 L2036.2 1174.6 L2039.9 1174.6 L2043.6 1174.6 L2047.3 1174.6 L2051.0 1174.6 L2054.8 1174.6 L2058.5 1174.6 L2062.2 1174.6 L2065.9 1174.6 L2069.6 1174.6 L2073.3 1174.6 L2077.0 1174.6 L2080.7 1174.6 L2084.5 1174.6 L2088.2 1174.6 L2091.9 983.8 L2095.6 1174.6 L2099.3 1174.6 L2103.0 1174.6 L2106.7 1174.6 L2110.4 1174.6 L2114.2 1174.6 L2117.9 1174.6 L2121.6 1174.6 L2125.3 1174.6 L2129.0 1174.6 L2132.7 1174.6 L2136.4 1174.6 L2140.1 1174.6 L2143.8 1174.6 L2147.6 1174.6 L2151.3 1174.6 L2155.0 1174.6 L2158.7 1174.6 L2162.4 1174.6 L2166.1 1174.6 L2169.8 1174.6 L2173.5 1174.6 L2177.3 1174.6 L2181.0 1174.6 L2184.7 1174.6 L2188.4 1174.6 L2192.1 1174.6 L2195.8 1174.6 L2199.5 1174.6 L2203.2 1174.6 L2206.9 1174.6 L2210.7 1174.6 L2214.4 1174.6 L2218.1 1174.6 L2221.8 1174.6 L2225.5 1174.6 L2229.2 1174.6 L2232.9 1174.6 L2236.6 1174.6 L2240.4 1174.6 L2244.1 1174.6 L2247.8 1174.6 L2251.5 1174.6 L2255.2 1174.6 L2258.9 1174.6 L2262.6 1174.6 L2266.3 1174.6 L2270.1 1174.6 L2273.8 1174.6 L2277.5 1174.6 L2281.2 1174.6 L2284.9 1174.6 L2288.6 1174.6 L2292.3 1174.6 L2296.0 1174.6 L2299.7 1174.6 L2303.5 1174.6 L2307.2 1174.6 L2310.9 1174.6 L2314.6 1174.6 L2318.3 1174.6 L2322.0 1174.6 L2325.7 1174.6 L2329.4 1174.6 L2333.2 983.8 L2336.9 1174.6 L2340.6 1174.6 L2344.3 1174.6 L2348.0 1174.6" fill="none" stroke="#8AB8FF" stroke-width="2" stroke-linejoin="round"/></g><clipPath id="c6"><rect x="2508" y="942" width="1025" height="464"/></clipPath><line x1="2508" y1="978" x2="3535" y2="978" stroke="rgba(240,250,255,0.09)" stroke-width="2"/><text x="2497.5" y="987.0" text-anchor="end" font-size="26" letter-spacing="-0.00" fill="rgb(204,204,220)">35 ms</text><line x1="2508" y1="1064" x2="3535" y2="1064" stroke="rgba(240,250,255,0.09)" stroke-width="2"/><text x="2497.5" y="1072.9" text-anchor="end" font-size="26" letter-spacing="-0.00" fill="rgb(204,204,220)">30 ms</text><line x1="2508" y1="1149" x2="3535" y2="1149" stroke="rgba(240,250,255,0.09)" stroke-width="2"/><text x="2497.5" y="1157.8" text-anchor="end" font-size="26" letter-spacing="-0.00" fill="rgb(204,204,220)">25 ms</text><line x1="2508" y1="1234" x2="3535" y2="1234" stroke="rgba(240,250,255,0.09)" stroke-width="2"/><text x="2497.5" y="1243.0" text-anchor="end" font-size="26" letter-spacing="-0.00" fill="rgb(204,204,220)">20 ms</text><line x1="2508" y1="1320" x2="3535" y2="1320" stroke="rgba(240,250,255,0.09)" stroke-width="2"/><text x="2497.5" y="1328.6" text-anchor="end" font-size="26" letter-spacing="-0.50" fill="rgb(204,204,220)">15 ms</text><line x1="2508" y1="1406" x2="3535" y2="1406" stroke="rgba(240,250,255,0.09)" stroke-width="2"/><text x="2497.5" y="1415.0" text-anchor="end" font-size="26" letter-spacing="-0.50" fill="rgb(204,204,220)">10 ms</text><line x1="2512" y1="944" x2="2512" y2="1413" stroke="rgba(240,250,255,0.09)" stroke-width="2"/><text x="2511.7" y="1443.0" text-anchor="middle" font-size="26" fill="rgb(204,204,220)">20:30</text><line x1="2683" y1="944" x2="2683" y2="1413" stroke="rgba(240,250,255,0.09)" stroke-width="2"/><text x="2682.7" y="1443.0" text-anchor="middle" font-size="26" fill="rgb(204,204,220)">21:00</text><line x1="2854" y1="944" x2="2854" y2="1413" stroke="rgba(240,250,255,0.09)" stroke-width="2"/><text x="2853.7" y="1443.0" text-anchor="middle" font-size="26" fill="rgb(204,204,220)">21:30</text><line x1="3025" y1="944" x2="3025" y2="1413" stroke="rgba(240,250,255,0.09)" stroke-width="2"/><text x="3024.7" y="1443.0" text-anchor="middle" font-size="26" fill="rgb(204,204,220)">22:00</text><line x1="3196" y1="944" x2="3196" y2="1413" stroke="rgba(240,250,255,0.09)" stroke-width="2"/><text x="3195.7" y="1443.0" text-anchor="middle" font-size="26" fill="rgb(204,204,220)">22:30</text><line x1="3367" y1="944" x2="3367" y2="1413" stroke="rgba(240,250,255,0.09)" stroke-width="2"/><text x="3366.7" y="1443.0" text-anchor="middle" font-size="26" fill="rgb(204,204,220)">23:00</text><g clip-path="url(#c6)"><path d="M2508.0 1298.1 L2511.8 1157.8 L2515.6 1303.3 L2519.4 1115.0 L2523.2 1183.4 L2527.1 1251.9 L2530.9 1174.9 L2534.7 1166.3 L2538.5 1132.1 L2542.3 1140.6 L2546.1 1174.9 L2549.9 1106.4 L2553.7 1217.7 L2557.5 1202.4 L2561.3 1241.3 L2565.2 1209.1 L2569.0 1264.5 L2572.8 1199.7 L2576.6 1274.7 L2580.4 1263.2 L2584.2 1230.5 L2588.0 1187.2 L2591.8 1319.8 L2595.6 1245.0 L2599.4 1258.9 L2603.3 1236.8 L2607.1 1289.0 L2610.9 1227.7 L2614.7 1191.9 L2618.5 1217.7 L2622.3 1269.6 L2626.1 1227.7 L2629.9 1333.3 L2633.7 1247.9 L2637.6 1246.7 L2641.4 1291.1 L2645.2 1248.7 L2649.0 1265.0 L2652.8 1315.4 L2656.6 1225.0 L2660.4 1284.8 L2664.2 1235.8 L2668.0 1210.9 L2671.8 1300.9 L2675.7 1237.1 L2679.5 1334.4 L2683.3 1267.3 L2687.1 1108.1 L2690.9 1292.1 L2694.7 1249.8 L2698.5 1322.7 L2702.3 1288.2 L2706.1 1197.3 L2710.0 1307.9 L2713.8 1282.1 L2717.6 1305.5 L2721.4 1317.0 L2725.2 1224.6 L2729.0 1252.2 L2732.8 1308.3 L2736.6 1249.9 L2740.4 1273.7 L2744.2 1297.3 L2748.1 1296.9 L2751.9 1123.5 L2755.7 1225.1 L2759.5 1230.3 L2763.3 1195.7 L2767.1 1271.1 L2770.9 1226.8 L2774.7 1241.2 L2778.5 1171.8 L2782.3 1094.4 L2786.2 1218.1 L2790.0 1219.6 L2793.8 1136.2 L2797.6 1243.5 L2801.4 1232.5 L2805.2 1246.7 L2809.0 1283.9 L2812.8 1236.9 L2816.6 1221.9 L2820.5 1314.5 L2824.3 1029.4 L2828.1 1303.1 L2831.9 1259.9 L2835.7 1276.6 L2839.5 1235.5 L2843.3 1261.0 L2847.1 1224.7 L2850.9 1307.3 L2854.7 1311.1 L2858.6 1257.0 L2862.4 1287.3 L2866.2 1307.6 L2870.0 1262.6 L2873.8 1302.6 L2877.6 1283.6 L2881.4 1223.6 L2885.2 1248.0 L2889.0 1343.0 L2892.9 1244.0 L2896.7 1251.2 L2900.5 1192.3 L2904.3 1290.1 L2908.1 1275.5 L2911.9 1299.4 L2915.7 1248.0 L2919.5 1364.4 L2923.3 1235.3 L2927.1 1249.4 L2931.0 1221.4 L2934.8 1221.7 L2938.6 1222.5 L2942.4 1222.9 L2946.2 1276.8 L2950.0 1234.8 L2953.8 1354.6 L2957.6 1264.7 L2961.4 1224.2 L2965.2 1236.2 L2969.1 1240.1 L2972.9 1245.0 L2976.7 1280.4 L2980.5 1269.4 L2984.3 1173.6 L2988.1 1234.4 L2991.9 1302.7 L2995.7 1279.3 L2999.5 1231.1 L3003.4 1213.3 L3007.2 1214.3 L3011.0 1138.3 L3014.8 1195.0 L3018.6 1254.5 L3022.4 1193.3 L3026.2 1259.7 L3030.0 1227.9 L3033.8 1237.6 L3037.6 1184.4 L3041.5 1143.6 L3045.3 1251.0 L3049.1 1210.7 L3052.9 1307.8 L3056.7 1290.1 L3060.5 1250.2 L3064.3 1106.4 L3068.1 1242.6 L3071.9 1192.3 L3075.8 1298.1 L3079.6 1215.9 L3083.4 1266.0 L3087.2 1257.9 L3091.0 1216.7 L3094.8 1281.8 L3098.6 1192.2 L3102.4 1237.6 L3106.2 1197.1 L3110.0 1189.1 L3113.9 1231.2 L3117.7 1248.4 L3121.5 1123.5 L3125.3 1234.9 L3129.1 1368.3 L3132.9 1230.9 L3136.7 1198.8 L3140.5 1158.4 L3144.3 1208.7 L3148.1 1299.8 L3152.0 1171.1 L3155.8 1240.3 L3159.6 1231.5 L3163.4 1230.2 L3167.2 1279.0 L3171.0 1236.9 L3174.8 1228.0 L3178.6 1273.9 L3182.4 1249.0 L3186.3 1243.4 L3190.1 1243.4 L3193.9 1307.1 L3197.7 1250.5 L3201.5 1206.3 L3205.3 1272.9 L3209.1 1237.1 L3212.9 1256.4 L3216.7 1277.3 L3220.5 1336.1 L3224.4 1315.5 L3228.2 1264.0 L3232.0 1330.8 L3235.8 1268.8 L3239.6 1264.4 L3243.4 1265.4 L3247.2 1212.0 L3251.0 1307.2 L3254.8 1298.1 L3258.7 1286.1 L3262.5 1303.1 L3266.3 1287.3 L3270.1 1284.6 L3273.9 1187.2 L3277.7 995.1 L3281.5 1256.4 L3285.3 1290.9 L3289.1 1237.9 L3292.9 1255.2 L3296.8 1262.0 L3300.6 1247.4 L3304.4 1283.7 L3308.2 1331.5 L3312.0 1242.4 L3315.8 1264.4 L3319.6 1219.9 L3323.4 1306.2 L3327.2 1309.3 L3331.0 1285.3 L3334.9 1266.0 L3338.7 1272.0 L3342.5 1245.0 L3346.3 1250.1 L3350.1 1222.0 L3353.9 1225.1 L3357.7 1276.6 L3361.5 1253.9 L3365.3 1269.6 L3369.2 1092.7 L3373.0 1303.3 L3376.8 1299.9 L3380.6 1245.5 L3384.4 1257.2 L3388.2 1186.5 L3392.0 1207.2 L3395.8 1263.0 L3399.6 1229.5 L3403.4 1228.3 L3407.3 1265.6 L3411.1 1275.0 L3414.9 1319.4 L3418.7 1183.1 L3422.5 1306.8 L3426.3 1151.3 L3430.1 1221.7 L3433.9 1219.7 L3437.7 1308.3 L3441.6 1258.0 L3445.4 1218.9 L3449.2 1241.3 L3453.0 1181.6 L3456.8 1208.7 L3460.6 1217.9 L3464.4 1351.2 L3468.2 1180.5 L3472.0 1274.7 L3475.8 1218.8 L3479.7 1271.4 L3483.5 1141.3 L3487.3 1278.5 L3491.1 1255.2 L3494.9 1201.8 L3498.7 1227.7 L3502.5 1250.0 L3506.3 1278.4 L3510.1 1226.0 L3513.9 1373.0 L3517.8 1277.3 L3521.6 1249.2 L3525.4 1238.8 L3529.2 1149.2 L3533.0 1284.4 L3533.0 1408 L2508.0 1408 Z" fill="#73BF69" fill-opacity="0.1"/><path d="M2508.0 1298.1 L2511.8 1157.8 L2515.6 1303.3 L2519.4 1115.0 L2523.2 1183.4 L2527.1 1251.9 L2530.9 1174.9 L2534.7 1166.3 L2538.5 1132.1 L2542.3 1140.6 L2546.1 1174.9 L2549.9 1106.4 L2553.7 1217.7 L2557.5 1202.4 L2561.3 1241.3 L2565.2 1209.1 L2569.0 1264.5 L2572.8 1199.7 L2576.6 1274.7 L2580.4 1263.2 L2584.2 1230.5 L2588.0 1187.2 L2591.8 1319.8 L2595.6 1245.0 L2599.4 1258.9 L2603.3 1236.8 L2607.1 1289.0 L2610.9 1227.7 L2614.7 1191.9 L2618.5 1217.7 L2622.3 1269.6 L2626.1 1227.7 L2629.9 1333.3 L2633.7 1247.9 L2637.6 1246.7 L2641.4 1291.1 L2645.2 1248.7 L2649.0 1265.0 L2652.8 1315.4 L2656.6 1225.0 L2660.4 1284.8 L2664.2 1235.8 L2668.0 1210.9 L2671.8 1300.9 L2675.7 1237.1 L2679.5 1334.4 L2683.3 1267.3 L2687.1 1108.1 L2690.9 1292.1 L2694.7 1249.8 L2698.5 1322.7 L2702.3 1288.2 L2706.1 1197.3 L2710.0 1307.9 L2713.8 1282.1 L2717.6 1305.5 L2721.4 1317.0 L2725.2 1224.6 L2729.0 1252.2 L2732.8 1308.3 L2736.6 1249.9 L2740.4 1273.7 L2744.2 1297.3 L2748.1 1296.9 L2751.9 1123.5 L2755.7 1225.1 L2759.5 1230.3 L2763.3 1195.7 L2767.1 1271.1 L2770.9 1226.8 L2774.7 1241.2 L2778.5 1171.8 L2782.3 1094.4 L2786.2 1218.1 L2790.0 1219.6 L2793.8 1136.2 L2797.6 1243.5 L2801.4 1232.5 L2805.2 1246.7 L2809.0 1283.9 L2812.8 1236.9 L2816.6 1221.9 L2820.5 1314.5 L2824.3 1029.4 L2828.1 1303.1 L2831.9 1259.9 L2835.7 1276.6 L2839.5 1235.5 L2843.3 1261.0 L2847.1 1224.7 L2850.9 1307.3 L2854.7 1311.1 L2858.6 1257.0 L2862.4 1287.3 L2866.2 1307.6 L2870.0 1262.6 L2873.8 1302.6 L2877.6 1283.6 L2881.4 1223.6 L2885.2 1248.0 L2889.0 1343.0 L2892.9 1244.0 L2896.7 1251.2 L2900.5 1192.3 L2904.3 1290.1 L2908.1 1275.5 L2911.9 1299.4 L2915.7 1248.0 L2919.5 1364.4 L2923.3 1235.3 L2927.1 1249.4 L2931.0 1221.4 L2934.8 1221.7 L2938.6 1222.5 L2942.4 1222.9 L2946.2 1276.8 L2950.0 1234.8 L2953.8 1354.6 L2957.6 1264.7 L2961.4 1224.2 L2965.2 1236.2 L2969.1 1240.1 L2972.9 1245.0 L2976.7 1280.4 L2980.5 1269.4 L2984.3 1173.6 L2988.1 1234.4 L2991.9 1302.7 L2995.7 1279.3 L2999.5 1231.1 L3003.4 1213.3 L3007.2 1214.3 L3011.0 1138.3 L3014.8 1195.0 L3018.6 1254.5 L3022.4 1193.3 L3026.2 1259.7 L3030.0 1227.9 L3033.8 1237.6 L3037.6 1184.4 L3041.5 1143.6 L3045.3 1251.0 L3049.1 1210.7 L3052.9 1307.8 L3056.7 1290.1 L3060.5 1250.2 L3064.3 1106.4 L3068.1 1242.6 L3071.9 1192.3 L3075.8 1298.1 L3079.6 1215.9 L3083.4 1266.0 L3087.2 1257.9 L3091.0 1216.7 L3094.8 1281.8 L3098.6 1192.2 L3102.4 1237.6 L3106.2 1197.1 L3110.0 1189.1 L3113.9 1231.2 L3117.7 1248.4 L3121.5 1123.5 L3125.3 1234.9 L3129.1 1368.3 L3132.9 1230.9 L3136.7 1198.8 L3140.5 1158.4 L3144.3 1208.7 L3148.1 1299.8 L3152.0 1171.1 L3155.8 1240.3 L3159.6 1231.5 L3163.4 1230.2 L3167.2 1279.0 L3171.0 1236.9 L3174.8 1228.0 L3178.6 1273.9 L3182.4 1249.0 L3186.3 1243.4 L3190.1 1243.4 L3193.9 1307.1 L3197.7 1250.5 L3201.5 1206.3 L3205.3 1272.9 L3209.1 1237.1 L3212.9 1256.4 L3216.7 1277.3 L3220.5 1336.1 L3224.4 1315.5 L3228.2 1264.0 L3232.0 1330.8 L3235.8 1268.8 L3239.6 1264.4 L3243.4 1265.4 L3247.2 1212.0 L3251.0 1307.2 L3254.8 1298.1 L3258.7 1286.1 L3262.5 1303.1 L3266.3 1287.3 L3270.1 1284.6 L3273.9 1187.2 L3277.7 995.1 L3281.5 1256.4 L3285.3 1290.9 L3289.1 1237.9 L3292.9 1255.2 L3296.8 1262.0 L3300.6 1247.4 L3304.4 1283.7 L3308.2 1331.5 L3312.0 1242.4 L3315.8 1264.4 L3319.6 1219.9 L3323.4 1306.2 L3327.2 1309.3 L3331.0 1285.3 L3334.9 1266.0 L3338.7 1272.0 L3342.5 1245.0 L3346.3 1250.1 L3350.1 1222.0 L3353.9 1225.1 L3357.7 1276.6 L3361.5 1253.9 L3365.3 1269.6 L3369.2 1092.7 L3373.0 1303.3 L3376.8 1299.9 L3380.6 1245.5 L3384.4 1257.2 L3388.2 1186.5 L3392.0 1207.2 L3395.8 1263.0 L3399.6 1229.5 L3403.4 1228.3 L3407.3 1265.6 L3411.1 1275.0 L3414.9 1319.4 L3418.7 1183.1 L3422.5 1306.8 L3426.3 1151.3 L3430.1 1221.7 L3433.9 1219.7 L3437.7 1308.3 L3441.6 1258.0 L3445.4 1218.9 L3449.2 1241.3 L3453.0 1181.6 L3456.8 1208.7 L3460.6 1217.9 L3464.4 1351.2 L3468.2 1180.5 L3472.0 1274.7 L3475.8 1218.8 L3479.7 1271.4 L3483.5 1141.3 L3487.3 1278.5 L3491.1 1255.2 L3494.9 1201.8 L3498.7 1227.7 L3502.5 1250.0 L3506.3 1278.4 L3510.1 1226.0 L3513.9 1373.0 L3517.8 1277.3 L3521.6 1249.2 L3525.4 1238.8 L3529.2 1149.2 L3533.0 1284.4" fill="none" stroke="#73BF69" stroke-width="2" stroke-linejoin="round"/></g><clipPath id="c7"><rect x="149" y="1626" width="1015.5" height="539.5"/></clipPath><line x1="149" y1="1664" x2="1166.5" y2="1664" stroke="rgba(240,250,255,0.09)" stroke-width="2"/><text x="138.5" y="1672.5" text-anchor="end" font-size="26" letter-spacing="-0.42" fill="rgb(204,204,220)">140 ms</text><line x1="149" y1="1736" x2="1166.5" y2="1736" stroke="rgba(240,250,255,0.09)" stroke-width="2"/><text x="138.5" y="1744.5" text-anchor="end" font-size="26" letter-spacing="-0.42" fill="rgb(204,204,220)">120 ms</text><line x1="149" y1="1806" x2="1166.5" y2="1806" stroke="rgba(240,250,255,0.09)" stroke-width="2"/><text x="138.5" y="1815.5" text-anchor="end" font-size="26" letter-spacing="-0.42" fill="rgb(204,204,220)">100 ms</text><line x1="149" y1="1878" x2="1166.5" y2="1878" stroke="rgba(240,250,255,0.09)" stroke-width="2"/><text x="138.5" y="1887.0" text-anchor="end" font-size="26" letter-spacing="-0.00" fill="rgb(204,204,220)">80 ms</text><line x1="149" y1="1950" x2="1166.5" y2="1950" stroke="rgba(240,250,255,0.09)" stroke-width="2"/><text x="138.5" y="1959.0" text-anchor="end" font-size="26" letter-spacing="-0.00" fill="rgb(204,204,220)">60 ms</text><line x1="149" y1="2022" x2="1166.5" y2="2022" stroke="rgba(240,250,255,0.09)" stroke-width="2"/><text x="138.5" y="2031.0" text-anchor="end" font-size="26" letter-spacing="-0.00" fill="rgb(204,204,220)">40 ms</text><line x1="149" y1="2094" x2="1166.5" y2="2094" stroke="rgba(240,250,255,0.09)" stroke-width="2"/><text x="138.5" y="2102.5" text-anchor="end" font-size="26" letter-spacing="-0.00" fill="rgb(204,204,220)">20 ms</text><line x1="149" y1="2166" x2="1166.5" y2="2166" stroke="rgba(240,250,255,0.09)" stroke-width="2"/><text x="138.5" y="2174.5" text-anchor="end" font-size="26" letter-spacing="-0.00" fill="rgb(204,204,220)">0 µs</text><line x1="154" y1="1628" x2="154" y2="2172.5" stroke="rgba(240,250,255,0.09)" stroke-width="2"/><text x="154.0" y="2202.5" text-anchor="middle" font-size="26" fill="rgb(204,204,220)">20:30</text><line x1="323" y1="1628" x2="323" y2="2172.5" stroke="rgba(240,250,255,0.09)" stroke-width="2"/><text x="323.3" y="2202.5" text-anchor="middle" font-size="26" fill="rgb(204,204,220)">21:00</text><line x1="493" y1="1628" x2="493" y2="2172.5" stroke="rgba(240,250,255,0.09)" stroke-width="2"/><text x="492.6" y="2202.5" text-anchor="middle" font-size="26" fill="rgb(204,204,220)">21:30</text><line x1="662" y1="1628" x2="662" y2="2172.5" stroke="rgba(240,250,255,0.09)" stroke-width="2"/><text x="661.9" y="2202.5" text-anchor="middle" font-size="26" fill="rgb(204,204,220)">22:00</text><line x1="831" y1="1628" x2="831" y2="2172.5" stroke="rgba(240,250,255,0.09)" stroke-width="2"/><text x="831.2" y="2202.5" text-anchor="middle" font-size="26" fill="rgb(204,204,220)">22:30</text><line x1="1000" y1="1628" x2="1000" y2="2172.5" stroke="rgba(240,250,255,0.09)" stroke-width="2"/><text x="1000.5" y="2202.5" text-anchor="middle" font-size="26" fill="rgb(204,204,220)">23:00</text><g clip-path="url(#c7)"><path d="M149.0 1807.9 L152.8 1804.0 L156.6 1851.7 L160.3 1848.1 L164.1 1872.7 L167.9 1850.8 L171.7 1805.7 L175.4 1805.2 L179.2 1768.8 L183.0 1839.5 L186.8 1847.4 L190.5 1817.2 L194.3 1825.5 L198.1 1868.8 L201.9 1832.0 L205.6 1849.1 L209.4 1867.0 L213.2 1846.8 L217.0 1827.8 L220.7 1837.7 L224.5 1882.7 L228.3 1839.2 L232.1 1870.0 L235.8 1861.0 L239.6 1846.7 L243.4 1851.0 L247.2 1900.3 L250.9 1823.1 L254.7 1864.5 L258.5 1844.3 L262.3 1831.9 L266.0 1878.2 L269.8 1882.0 L273.6 1856.0 L277.4 1865.8 L281.1 1873.9 L284.9 1842.4 L288.7 1863.3 L292.5 1837.0 L296.2 1860.0 L300.0 1866.9 L303.8 1840.0 L307.6 1881.2 L311.3 1853.9 L315.1 1872.8 L318.9 1834.4 L322.7 1830.1 L326.4 1819.6 L330.2 1893.5 L334.0 1853.6 L337.8 1839.1 L341.5 1858.8 L345.3 1796.3 L349.1 1844.3 L352.9 1824.0 L356.6 1872.2 L360.4 1825.8 L364.2 1854.6 L368.0 1861.8 L371.7 1846.5 L375.5 1848.6 L379.3 1863.7 L383.1 1898.7 L386.8 1874.7 L390.6 1807.1 L394.4 1885.6 L398.2 1885.9 L401.9 1829.5 L405.7 1852.6 L409.5 1861.2 L413.3 1877.8 L417.0 1865.5 L420.8 1878.7 L424.6 1833.2 L428.4 1852.9 L432.1 1902.7 L435.9 1848.7 L439.7 1888.3 L443.5 1904.3 L447.2 1844.4 L451.0 1880.1 L454.8 1842.3 L458.6 1836.5 L462.3 1713.8 L466.1 1840.8 L469.9 1834.1 L473.7 1868.1 L477.4 1866.0 L481.2 1854.2 L485.0 1849.0 L488.8 1819.5 L492.5 1852.6 L496.3 1900.4 L500.1 1863.6 L503.9 1825.3 L507.6 1884.5 L511.4 1845.5 L515.2 1844.2 L519.0 1823.6 L522.7 1873.0 L526.5 1850.1 L530.3 1846.3 L534.1 1813.2 L537.8 1798.9 L541.6 1890.5 L545.4 1853.8 L549.2 1851.9 L552.9 1849.1 L556.7 1861.9 L560.5 1859.0 L564.3 1815.9 L568.0 1861.9 L571.8 1850.5 L575.6 1882.2 L579.4 1863.1 L583.1 1846.9 L586.9 1920.9 L590.7 1855.5 L594.5 1861.9 L598.2 1866.5 L602.0 1887.6 L605.8 1818.0 L609.6 1861.5 L613.3 1830.8 L617.1 1809.5 L620.9 1830.8 L624.7 1812.8 L628.4 1869.4 L632.2 1853.7 L636.0 1830.9 L639.8 1814.6 L643.5 1827.5 L647.3 1912.0 L651.1 1845.6 L654.9 1896.1 L658.6 1858.4 L662.4 1879.8 L666.2 1848.0 L670.0 1845.9 L673.7 1855.6 L677.5 1877.5 L681.3 1860.5 L685.1 1876.0 L688.8 1821.9 L692.6 1856.8 L696.4 1875.6 L700.2 1821.8 L703.9 1840.0 L707.7 1837.5 L711.5 1865.0 L715.3 1847.1 L719.0 1836.2 L722.8 1854.1 L726.6 1777.3 L730.4 1829.7 L734.1 1886.7 L737.9 1872.5 L741.7 1910.9 L745.5 1872.5 L749.2 1855.0 L753.0 1839.6 L756.8 1856.8 L760.6 1853.1 L764.3 1867.3 L768.1 1843.6 L771.9 1868.4 L775.7 1857.2 L779.4 1817.9 L783.2 1869.8 L787.0 1910.7 L790.8 1888.2 L794.5 1822.7 L798.3 1878.6 L802.1 1867.7 L805.9 1820.4 L809.6 1855.3 L813.4 1851.6 L817.2 1863.8 L821.0 1873.6 L824.7 1821.1 L828.5 1839.4 L832.3 1823.4 L836.1 1867.9 L839.8 1827.1 L843.6 1846.7 L847.4 1816.3 L851.2 1848.6 L854.9 1846.4 L858.7 1823.8 L862.5 1874.3 L866.3 1902.9 L870.0 1839.1 L873.8 1874.7 L877.6 1817.8 L881.4 1860.4 L885.1 1868.0 L888.9 1808.4 L892.7 1827.9 L896.5 1866.3 L900.2 1831.3 L904.0 1852.3 L907.8 1826.2 L911.6 1695.9 L915.3 1902.4 L919.1 1809.9 L922.9 1800.5 L926.7 1815.4 L930.4 1866.0 L934.2 1814.3 L938.0 1856.3 L941.8 1844.1 L945.5 1834.2 L949.3 1877.7 L953.1 1769.8 L956.9 1881.7 L960.6 1882.9 L964.4 1849.0 L968.2 1828.4 L972.0 1857.5 L975.7 1801.9 L979.5 1899.6 L983.3 1827.6 L987.1 1914.1 L990.8 1799.8 L994.6 1886.8 L998.4 1861.4 L1002.2 1862.4 L1005.9 1863.9 L1009.7 1865.1 L1013.5 1870.8 L1017.3 1811.9 L1021.0 1791.7 L1024.8 1866.4 L1028.6 1846.6 L1032.4 1861.2 L1036.1 1862.2 L1039.9 1847.9 L1043.7 1882.6 L1047.5 1870.0 L1051.2 1856.0 L1055.0 1858.5 L1058.8 1812.0 L1062.6 1851.8 L1066.3 1869.0 L1070.1 1818.3 L1073.9 1791.2 L1077.7 1813.9 L1081.4 1869.1 L1085.2 1828.2 L1089.0 1858.3 L1092.8 1831.8 L1096.5 1799.6 L1100.3 1892.4 L1104.1 1897.1 L1107.9 1847.6 L1111.6 1884.1 L1115.4 1846.6 L1119.2 1809.1 L1123.0 1916.0 L1126.7 1823.3 L1130.5 1817.0 L1134.3 1818.8 L1138.1 1873.1 L1141.8 1808.4 L1145.6 1830.3 L1149.4 1874.5 L1153.2 1852.0 L1156.9 1775.3 L1160.7 1813.6 L1164.5 1864.3 L1164.5 2167.5 L149.0 2167.5 Z" fill="#73BF69" fill-opacity="0.1"/><path d="M149.0 1807.9 L152.8 1804.0 L156.6 1851.7 L160.3 1848.1 L164.1 1872.7 L167.9 1850.8 L171.7 1805.7 L175.4 1805.2 L179.2 1768.8 L183.0 1839.5 L186.8 1847.4 L190.5 1817.2 L194.3 1825.5 L198.1 1868.8 L201.9 1832.0 L205.6 1849.1 L209.4 1867.0 L213.2 1846.8 L217.0 1827.8 L220.7 1837.7 L224.5 1882.7 L228.3 1839.2 L232.1 1870.0 L235.8 1861.0 L239.6 1846.7 L243.4 1851.0 L247.2 1900.3 L250.9 1823.1 L254.7 1864.5 L258.5 1844.3 L262.3 1831.9 L266.0 1878.2 L269.8 1882.0 L273.6 1856.0 L277.4 1865.8 L281.1 1873.9 L284.9 1842.4 L288.7 1863.3 L292.5 1837.0 L296.2 1860.0 L300.0 1866.9 L303.8 1840.0 L307.6 1881.2 L311.3 1853.9 L315.1 1872.8 L318.9 1834.4 L322.7 1830.1 L326.4 1819.6 L330.2 1893.5 L334.0 1853.6 L337.8 1839.1 L341.5 1858.8 L345.3 1796.3 L349.1 1844.3 L352.9 1824.0 L356.6 1872.2 L360.4 1825.8 L364.2 1854.6 L368.0 1861.8 L371.7 1846.5 L375.5 1848.6 L379.3 1863.7 L383.1 1898.7 L386.8 1874.7 L390.6 1807.1 L394.4 1885.6 L398.2 1885.9 L401.9 1829.5 L405.7 1852.6 L409.5 1861.2 L413.3 1877.8 L417.0 1865.5 L420.8 1878.7 L424.6 1833.2 L428.4 1852.9 L432.1 1902.7 L435.9 1848.7 L439.7 1888.3 L443.5 1904.3 L447.2 1844.4 L451.0 1880.1 L454.8 1842.3 L458.6 1836.5 L462.3 1713.8 L466.1 1840.8 L469.9 1834.1 L473.7 1868.1 L477.4 1866.0 L481.2 1854.2 L485.0 1849.0 L488.8 1819.5 L492.5 1852.6 L496.3 1900.4 L500.1 1863.6 L503.9 1825.3 L507.6 1884.5 L511.4 1845.5 L515.2 1844.2 L519.0 1823.6 L522.7 1873.0 L526.5 1850.1 L530.3 1846.3 L534.1 1813.2 L537.8 1798.9 L541.6 1890.5 L545.4 1853.8 L549.2 1851.9 L552.9 1849.1 L556.7 1861.9 L560.5 1859.0 L564.3 1815.9 L568.0 1861.9 L571.8 1850.5 L575.6 1882.2 L579.4 1863.1 L583.1 1846.9 L586.9 1920.9 L590.7 1855.5 L594.5 1861.9 L598.2 1866.5 L602.0 1887.6 L605.8 1818.0 L609.6 1861.5 L613.3 1830.8 L617.1 1809.5 L620.9 1830.8 L624.7 1812.8 L628.4 1869.4 L632.2 1853.7 L636.0 1830.9 L639.8 1814.6 L643.5 1827.5 L647.3 1912.0 L651.1 1845.6 L654.9 1896.1 L658.6 1858.4 L662.4 1879.8 L666.2 1848.0 L670.0 1845.9 L673.7 1855.6 L677.5 1877.5 L681.3 1860.5 L685.1 1876.0 L688.8 1821.9 L692.6 1856.8 L696.4 1875.6 L700.2 1821.8 L703.9 1840.0 L707.7 1837.5 L711.5 1865.0 L715.3 1847.1 L719.0 1836.2 L722.8 1854.1 L726.6 1777.3 L730.4 1829.7 L734.1 1886.7 L737.9 1872.5 L741.7 1910.9 L745.5 1872.5 L749.2 1855.0 L753.0 1839.6 L756.8 1856.8 L760.6 1853.1 L764.3 1867.3 L768.1 1843.6 L771.9 1868.4 L775.7 1857.2 L779.4 1817.9 L783.2 1869.8 L787.0 1910.7 L790.8 1888.2 L794.5 1822.7 L798.3 1878.6 L802.1 1867.7 L805.9 1820.4 L809.6 1855.3 L813.4 1851.6 L817.2 1863.8 L821.0 1873.6 L824.7 1821.1 L828.5 1839.4 L832.3 1823.4 L836.1 1867.9 L839.8 1827.1 L843.6 1846.7 L847.4 1816.3 L851.2 1848.6 L854.9 1846.4 L858.7 1823.8 L862.5 1874.3 L866.3 1902.9 L870.0 1839.1 L873.8 1874.7 L877.6 1817.8 L881.4 1860.4 L885.1 1868.0 L888.9 1808.4 L892.7 1827.9 L896.5 1866.3 L900.2 1831.3 L904.0 1852.3 L907.8 1826.2 L911.6 1695.9 L915.3 1902.4 L919.1 1809.9 L922.9 1800.5 L926.7 1815.4 L930.4 1866.0 L934.2 1814.3 L938.0 1856.3 L941.8 1844.1 L945.5 1834.2 L949.3 1877.7 L953.1 1769.8 L956.9 1881.7 L960.6 1882.9 L964.4 1849.0 L968.2 1828.4 L972.0 1857.5 L975.7 1801.9 L979.5 1899.6 L983.3 1827.6 L987.1 1914.1 L990.8 1799.8 L994.6 1886.8 L998.4 1861.4 L1002.2 1862.4 L1005.9 1863.9 L1009.7 1865.1 L1013.5 1870.8 L1017.3 1811.9 L1021.0 1791.7 L1024.8 1866.4 L1028.6 1846.6 L1032.4 1861.2 L1036.1 1862.2 L1039.9 1847.9 L1043.7 1882.6 L1047.5 1870.0 L1051.2 1856.0 L1055.0 1858.5 L1058.8 1812.0 L1062.6 1851.8 L1066.3 1869.0 L1070.1 1818.3 L1073.9 1791.2 L1077.7 1813.9 L1081.4 1869.1 L1085.2 1828.2 L1089.0 1858.3 L1092.8 1831.8 L1096.5 1799.6 L1100.3 1892.4 L1104.1 1897.1 L1107.9 1847.6 L1111.6 1884.1 L1115.4 1846.6 L1119.2 1809.1 L1123.0 1916.0 L1126.7 1823.3 L1130.5 1817.0 L1134.3 1818.8 L1138.1 1873.1 L1141.8 1808.4 L1145.6 1830.3 L1149.4 1874.5 L1153.2 1852.0 L1156.9 1775.3 L1160.7 1813.6 L1164.5 1864.3" fill="none" stroke="#73BF69" stroke-width="2" stroke-linejoin="round"/><path d="M149.0 1890.3 L152.8 1879.2 L156.6 1921.7 L160.3 1922.6 L164.1 1951.6 L167.9 1928.2 L171.7 1882.3 L175.4 1881.4 L179.2 1850.5 L183.0 1918.0 L186.8 1926.5 L190.5 1900.2 L194.3 1905.8 L198.1 1948.2 L201.9 1912.8 L205.6 1929.4 L209.4 1946.3 L213.2 1929.6 L217.0 1904.6 L220.7 1921.5 L224.5 1963.2 L228.3 1922.3 L232.1 1954.1 L235.8 1941.5 L239.6 1928.4 L243.4 1931.6 L247.2 1971.8 L250.9 1895.9 L254.7 1945.1 L258.5 1927.2 L262.3 1907.5 L266.0 1954.8 L269.8 1957.2 L273.6 1935.5 L277.4 1950.0 L281.1 1957.0 L284.9 1913.9 L288.7 1945.8 L292.5 1910.9 L296.2 1936.7 L300.0 1944.1 L303.8 1922.1 L307.6 1955.7 L311.3 1930.8 L315.1 1952.7 L318.9 1910.8 L322.7 1911.7 L326.4 1895.2 L330.2 1966.3 L334.0 1925.6 L337.8 1916.0 L341.5 1942.0 L345.3 1873.2 L349.1 1922.3 L352.9 1905.3 L356.6 1947.2 L360.4 1907.5 L364.2 1936.1 L368.0 1937.4 L371.7 1923.4 L375.5 1935.9 L379.3 1938.2 L383.1 1977.5 L386.8 1946.1 L390.6 1887.2 L394.4 1962.1 L398.2 1965.6 L401.9 1911.7 L405.7 1946.8 L409.5 1941.1 L413.3 1958.5 L417.0 1940.5 L420.8 1961.1 L424.6 1915.8 L428.4 1931.5 L432.1 1977.0 L435.9 1929.6 L439.7 1967.5 L443.5 1978.8 L447.2 1922.4 L451.0 1958.4 L454.8 1914.1 L458.6 1925.6 L462.3 1792.7 L466.1 1917.5 L469.9 1909.5 L473.7 1945.5 L477.4 1945.4 L481.2 1929.3 L485.0 1935.2 L488.8 1903.3 L492.5 1926.2 L496.3 1981.6 L500.1 1939.7 L503.9 1906.2 L507.6 1961.2 L511.4 1925.5 L515.2 1930.2 L519.0 1906.7 L522.7 1934.5 L526.5 1926.4 L530.3 1921.8 L534.1 1889.8 L537.8 1871.4 L541.6 1973.7 L545.4 1928.6 L549.2 1929.8 L552.9 1927.4 L556.7 1941.9 L560.5 1942.1 L564.3 1894.7 L568.0 1934.0 L571.8 1925.0 L575.6 1958.0 L579.4 1941.2 L583.1 1924.9 L586.9 1999.3 L590.7 1934.7 L594.5 1938.3 L598.2 1945.2 L602.0 1973.5 L605.8 1898.7 L609.6 1935.8 L613.3 1906.0 L617.1 1893.2 L620.9 1912.5 L624.7 1894.2 L628.4 1940.8 L632.2 1930.5 L636.0 1905.2 L639.8 1895.2 L643.5 1905.4 L647.3 1995.4 L651.1 1926.0 L654.9 1977.3 L658.6 1936.2 L662.4 1956.7 L666.2 1928.9 L670.0 1927.1 L673.7 1930.6 L677.5 1958.4 L681.3 1946.3 L685.1 1957.3 L688.8 1894.7 L692.6 1932.8 L696.4 1952.4 L700.2 1896.5 L703.9 1920.7 L707.7 1916.9 L711.5 1946.0 L715.3 1924.2 L719.0 1920.4 L722.8 1934.3 L726.6 1857.2 L730.4 1911.2 L734.1 1965.9 L737.9 1948.6 L741.7 1991.8 L745.5 1953.9 L749.2 1930.3 L753.0 1918.8 L756.8 1941.6 L760.6 1924.2 L764.3 1954.4 L768.1 1919.0 L771.9 1949.5 L775.7 1936.5 L779.4 1892.7 L783.2 1946.8 L787.0 1984.6 L790.8 1966.2 L794.5 1895.9 L798.3 1950.8 L802.1 1941.8 L805.9 1899.3 L809.6 1936.6 L813.4 1928.5 L817.2 1940.7 L821.0 1948.4 L824.7 1899.3 L828.5 1918.5 L832.3 1899.4 L836.1 1942.2 L839.8 1908.9 L843.6 1919.2 L847.4 1892.7 L851.2 1925.5 L854.9 1923.1 L858.7 1906.5 L862.5 1951.1 L866.3 1974.3 L870.0 1918.2 L873.8 1955.4 L877.6 1897.4 L881.4 1943.1 L885.1 1940.3 L888.9 1883.8 L892.7 1905.7 L896.5 1944.2 L900.2 1904.8 L904.0 1932.6 L907.8 1903.5 L911.6 1771.2 L915.3 1980.8 L919.1 1887.0 L922.9 1877.4 L926.7 1885.3 L930.4 1942.2 L934.2 1893.0 L938.0 1929.9 L941.8 1921.7 L945.5 1911.8 L949.3 1956.1 L953.1 1852.3 L956.9 1957.4 L960.6 1961.2 L964.4 1929.7 L968.2 1908.8 L972.0 1934.9 L975.7 1883.3 L979.5 1977.5 L983.3 1909.2 L987.1 1987.7 L990.8 1888.1 L994.6 1960.1 L998.4 1937.0 L1002.2 1945.3 L1005.9 1935.8 L1009.7 1943.7 L1013.5 1947.5 L1017.3 1889.2 L1021.0 1866.4 L1024.8 1941.1 L1028.6 1921.0 L1032.4 1934.7 L1036.1 1945.9 L1039.9 1926.7 L1043.7 1956.4 L1047.5 1945.3 L1051.2 1931.4 L1055.0 1941.1 L1058.8 1898.5 L1062.6 1934.8 L1066.3 1955.6 L1070.1 1887.8 L1073.9 1871.6 L1077.7 1895.7 L1081.4 1948.2 L1085.2 1905.8 L1089.0 1932.8 L1092.8 1911.6 L1096.5 1875.8 L1100.3 1970.6 L1104.1 1968.5 L1107.9 1922.7 L1111.6 1962.2 L1115.4 1925.2 L1119.2 1886.0 L1123.0 2001.3 L1126.7 1890.3 L1130.5 1894.9 L1134.3 1899.9 L1138.1 1953.0 L1141.8 1889.2 L1145.6 1911.3 L1149.4 1950.0 L1153.2 1932.0 L1156.9 1858.0 L1160.7 1887.8 L1164.5 1939.7 L1164.5 2167.5 L149.0 2167.5 Z" fill="#F2CC0C" fill-opacity="0.1"/><path d="M149.0 1890.3 L152.8 1879.2 L156.6 1921.7 L160.3 1922.6 L164.1 1951.6 L167.9 1928.2 L171.7 1882.3 L175.4 1881.4 L179.2 1850.5 L183.0 1918.0 L186.8 1926.5 L190.5 1900.2 L194.3 1905.8 L198.1 1948.2 L201.9 1912.8 L205.6 1929.4 L209.4 1946.3 L213.2 1929.6 L217.0 1904.6 L220.7 1921.5 L224.5 1963.2 L228.3 1922.3 L232.1 1954.1 L235.8 1941.5 L239.6 1928.4 L243.4 1931.6 L247.2 1971.8 L250.9 1895.9 L254.7 1945.1 L258.5 1927.2 L262.3 1907.5 L266.0 1954.8 L269.8 1957.2 L273.6 1935.5 L277.4 1950.0 L281.1 1957.0 L284.9 1913.9 L288.7 1945.8 L292.5 1910.9 L296.2 1936.7 L300.0 1944.1 L303.8 1922.1 L307.6 1955.7 L311.3 1930.8 L315.1 1952.7 L318.9 1910.8 L322.7 1911.7 L326.4 1895.2 L330.2 1966.3 L334.0 1925.6 L337.8 1916.0 L341.5 1942.0 L345.3 1873.2 L349.1 1922.3 L352.9 1905.3 L356.6 1947.2 L360.4 1907.5 L364.2 1936.1 L368.0 1937.4 L371.7 1923.4 L375.5 1935.9 L379.3 1938.2 L383.1 1977.5 L386.8 1946.1 L390.6 1887.2 L394.4 1962.1 L398.2 1965.6 L401.9 1911.7 L405.7 1946.8 L409.5 1941.1 L413.3 1958.5 L417.0 1940.5 L420.8 1961.1 L424.6 1915.8 L428.4 1931.5 L432.1 1977.0 L435.9 1929.6 L439.7 1967.5 L443.5 1978.8 L447.2 1922.4 L451.0 1958.4 L454.8 1914.1 L458.6 1925.6 L462.3 1792.7 L466.1 1917.5 L469.9 1909.5 L473.7 1945.5 L477.4 1945.4 L481.2 1929.3 L485.0 1935.2 L488.8 1903.3 L492.5 1926.2 L496.3 1981.6 L500.1 1939.7 L503.9 1906.2 L507.6 1961.2 L511.4 1925.5 L515.2 1930.2 L519.0 1906.7 L522.7 1934.5 L526.5 1926.4 L530.3 1921.8 L534.1 1889.8 L537.8 1871.4 L541.6 1973.7 L545.4 1928.6 L549.2 1929.8 L552.9 1927.4 L556.7 1941.9 L560.5 1942.1 L564.3 1894.7 L568.0 1934.0 L571.8 1925.0 L575.6 1958.0 L579.4 1941.2 L583.1 1924.9 L586.9 1999.3 L590.7 1934.7 L594.5 1938.3 L598.2 1945.2 L602.0 1973.5 L605.8 1898.7 L609.6 1935.8 L613.3 1906.0 L617.1 1893.2 L620.9 1912.5 L624.7 1894.2 L628.4 1940.8 L632.2 1930.5 L636.0 1905.2 L639.8 1895.2 L643.5 1905.4 L647.3 1995.4 L651.1 1926.0 L654.9 1977.3 L658.6 1936.2 L662.4 1956.7 L666.2 1928.9 L670.0 1927.1 L673.7 1930.6 L677.5 1958.4 L681.3 1946.3 L685.1 1957.3 L688.8 1894.7 L692.6 1932.8 L696.4 1952.4 L700.2 1896.5 L703.9 1920.7 L707.7 1916.9 L711.5 1946.0 L715.3 1924.2 L719.0 1920.4 L722.8 1934.3 L726.6 1857.2 L730.4 1911.2 L734.1 1965.9 L737.9 1948.6 L741.7 1991.8 L745.5 1953.9 L749.2 1930.3 L753.0 1918.8 L756.8 1941.6 L760.6 1924.2 L764.3 1954.4 L768.1 1919.0 L771.9 1949.5 L775.7 1936.5 L779.4 1892.7 L783.2 1946.8 L787.0 1984.6 L790.8 1966.2 L794.5 1895.9 L798.3 1950.8 L802.1 1941.8 L805.9 1899.3 L809.6 1936.6 L813.4 1928.5 L817.2 1940.7 L821.0 1948.4 L824.7 1899.3 L828.5 1918.5 L832.3 1899.4 L836.1 1942.2 L839.8 1908.9 L843.6 1919.2 L847.4 1892.7 L851.2 1925.5 L854.9 1923.1 L858.7 1906.5 L862.5 1951.1 L866.3 1974.3 L870.0 1918.2 L873.8 1955.4 L877.6 1897.4 L881.4 1943.1 L885.1 1940.3 L888.9 1883.8 L892.7 1905.7 L896.5 1944.2 L900.2 1904.8 L904.0 1932.6 L907.8 1903.5 L911.6 1771.2 L915.3 1980.8 L919.1 1887.0 L922.9 1877.4 L926.7 1885.3 L930.4 1942.2 L934.2 1893.0 L938.0 1929.9 L941.8 1921.7 L945.5 1911.8 L949.3 1956.1 L953.1 1852.3 L956.9 1957.4 L960.6 1961.2 L964.4 1929.7 L968.2 1908.8 L972.0 1934.9 L975.7 1883.3 L979.5 1977.5 L983.3 1909.2 L987.1 1987.7 L990.8 1888.1 L994.6 1960.1 L998.4 1937.0 L1002.2 1945.3 L1005.9 1935.8 L1009.7 1943.7 L1013.5 1947.5 L1017.3 1889.2 L1021.0 1866.4 L1024.8 1941.1 L1028.6 1921.0 L1032.4 1934.7 L1036.1 1945.9 L1039.9 1926.7 L1043.7 1956.4 L1047.5 1945.3 L1051.2 1931.4 L1055.0 1941.1 L1058.8 1898.5 L1062.6 1934.8 L1066.3 1955.6 L1070.1 1887.8 L1073.9 1871.6 L1077.7 1895.7 L1081.4 1948.2 L1085.2 1905.8 L1089.0 1932.8 L1092.8 1911.6 L1096.5 1875.8 L1100.3 1970.6 L1104.1 1968.5 L1107.9 1922.7 L1111.6 1962.2 L1115.4 1925.2 L1119.2 1886.0 L1123.0 2001.3 L1126.7 1890.3 L1130.5 1894.9 L1134.3 1899.9 L1138.1 1953.0 L1141.8 1889.2 L1145.6 1911.3 L1149.4 1950.0 L1153.2 1932.0 L1156.9 1858.0 L1160.7 1887.8 L1164.5 1939.7" fill="none" stroke="#F2CC0C" stroke-width="2" stroke-linejoin="round"/><path d="M149.0 2084.8 L152.8 2092.1 L156.6 2097.3 L160.3 2092.7 L164.1 2088.4 L167.9 2089.9 L171.7 2090.6 L175.4 2091.1 L179.2 2085.6 L183.0 2088.8 L186.8 2088.1 L190.5 2084.3 L194.3 2087.0 L198.1 2088.0 L201.9 2086.4 L205.6 2086.9 L209.4 2088.0 L213.2 2084.5 L217.0 2090.5 L220.7 2083.4 L224.5 2086.8 L228.3 2084.2 L232.1 2083.3 L235.8 2086.8 L239.6 2085.6 L243.4 2086.7 L247.2 2095.8 L250.9 2094.5 L254.7 2086.7 L258.5 2084.3 L262.3 2091.7 L266.0 2090.7 L269.8 2092.0 L273.6 2087.8 L277.4 2083.1 L281.1 2084.2 L284.9 2095.8 L288.7 2084.8 L292.5 2093.4 L296.2 2090.6 L300.0 2090.1 L303.8 2085.1 L307.6 2092.8 L311.3 2090.4 L315.1 2087.4 L318.9 2090.9 L322.7 2085.8 L326.4 2091.7 L330.2 2094.6 L334.0 2095.3 L337.8 2090.4 L341.5 2084.1 L345.3 2090.4 L349.1 2089.3 L352.9 2086.0 L356.6 2092.3 L360.4 2085.6 L364.2 2085.8 L368.0 2091.7 L371.7 2090.4 L375.5 2080.0 L379.3 2092.8 L383.1 2088.5 L386.8 2095.9 L390.6 2087.1 L394.4 2090.8 L398.2 2087.6 L401.9 2085.1 L405.7 2073.0 L409.5 2087.4 L413.3 2086.6 L417.0 2092.3 L420.8 2084.9 L424.6 2084.7 L428.4 2088.7 L432.1 2093.0 L435.9 2086.4 L439.7 2088.1 L443.5 2092.8 L447.2 2089.4 L451.0 2089.0 L454.8 2095.6 L458.6 2078.2 L462.3 2099.2 L466.1 2090.6 L469.9 2091.9 L473.7 2089.9 L477.4 2087.9 L481.2 2092.2 L485.0 2081.1 L488.8 2083.5 L492.5 2093.7 L496.3 2086.1 L500.1 2091.2 L503.9 2086.4 L507.6 2090.6 L511.4 2087.2 L515.2 2081.3 L519.0 2084.2 L522.7 2105.8 L526.5 2091.0 L530.3 2091.8 L534.1 2090.7 L537.8 2094.8 L541.6 2084.1 L545.4 2092.4 L549.2 2089.4 L552.9 2088.9 L556.7 2087.2 L560.5 2084.2 L564.3 2088.5 L568.0 2095.2 L571.8 2092.9 L575.6 2091.5 L579.4 2089.2 L583.1 2089.2 L586.9 2088.9 L590.7 2088.1 L594.5 2090.8 L598.2 2088.5 L602.0 2081.4 L605.8 2086.6 L609.6 2093.0 L613.3 2092.1 L617.1 2083.6 L620.9 2085.6 L624.7 2085.9 L628.4 2096.0 L632.2 2090.5 L636.0 2093.0 L639.8 2086.6 L643.5 2089.4 L647.3 2084.0 L651.1 2086.9 L654.9 2086.1 L658.6 2089.5 L662.4 2090.3 L666.2 2086.3 L670.0 2086.1 L673.7 2092.3 L677.5 2086.4 L681.3 2081.5 L685.1 2086.0 L688.8 2094.5 L692.6 2091.3 L696.4 2090.4 L700.2 2092.6 L703.9 2086.6 L707.7 2087.9 L711.5 2086.2 L715.3 2090.2 L719.0 2083.1 L722.8 2087.2 L726.6 2087.4 L730.4 2085.8 L734.1 2088.1 L737.9 2091.2 L741.7 2086.4 L745.5 2085.9 L749.2 2092.0 L753.0 2088.1 L756.8 2082.6 L760.6 2096.2 L764.3 2080.2 L768.1 2091.9 L771.9 2086.2 L775.7 2087.9 L779.4 2092.5 L783.2 2090.3 L787.0 2093.4 L790.8 2089.3 L794.5 2094.1 L798.3 2095.1 L802.1 2093.3 L805.9 2088.4 L809.6 2086.0 L813.4 2090.3 L817.2 2090.3 L821.0 2092.4 L824.7 2089.1 L828.5 2088.2 L832.3 2091.3 L836.1 2093.0 L839.8 2085.5 L843.6 2094.8 L847.4 2090.9 L851.2 2090.4 L854.9 2090.6 L858.7 2084.6 L862.5 2090.5 L866.3 2095.9 L870.0 2088.1 L873.8 2086.6 L877.6 2087.7 L881.4 2084.6 L885.1 2095.0 L888.9 2091.9 L892.7 2089.4 L896.5 2089.4 L900.2 2093.8 L904.0 2087.0 L907.8 2090.0 L911.6 2087.9 L915.3 2088.9 L919.1 2090.3 L922.9 2090.3 L926.7 2097.4 L930.4 2091.2 L934.2 2088.6 L938.0 2093.6 L941.8 2089.7 L945.5 2089.7 L949.3 2088.9 L953.1 2084.8 L956.9 2091.6 L960.6 2089.0 L964.4 2086.5 L968.2 2086.8 L972.0 2089.9 L975.7 2085.9 L979.5 2089.4 L983.3 2085.6 L987.1 2093.7 L990.8 2079.1 L994.6 2094.0 L998.4 2091.6 L1002.2 2084.3 L1005.9 2095.4 L1009.7 2088.7 L1013.5 2090.6 L1017.3 2090.0 L1021.0 2092.6 L1024.8 2092.6 L1028.6 2092.8 L1032.4 2093.8 L1036.1 2083.5 L1039.9 2088.6 L1043.7 2093.5 L1047.5 2092.0 L1051.2 2091.9 L1055.0 2084.6 L1058.8 2080.8 L1062.6 2084.3 L1066.3 2080.7 L1070.1 2097.8 L1073.9 2086.9 L1077.7 2085.5 L1081.4 2088.2 L1085.2 2089.7 L1089.0 2092.8 L1092.8 2087.5 L1096.5 2091.0 L1100.3 2089.1 L1104.1 2095.9 L1107.9 2092.2 L1111.6 2089.1 L1115.4 2088.6 L1119.2 2090.4 L1123.0 2082.0 L1126.7 2100.3 L1130.5 2089.4 L1134.3 2086.2 L1138.1 2087.4 L1141.8 2086.5 L1145.6 2086.2 L1149.4 2091.8 L1153.2 2087.4 L1156.9 2084.6 L1160.7 2093.1 L1164.5 2091.9 L1164.5 2167.5 L149.0 2167.5 Z" fill="#8AB8FF" fill-opacity="0.1"/><path d="M149.0 2084.8 L152.8 2092.1 L156.6 2097.3 L160.3 2092.7 L164.1 2088.4 L167.9 2089.9 L171.7 2090.6 L175.4 2091.1 L179.2 2085.6 L183.0 2088.8 L186.8 2088.1 L190.5 2084.3 L194.3 2087.0 L198.1 2088.0 L201.9 2086.4 L205.6 2086.9 L209.4 2088.0 L213.2 2084.5 L217.0 2090.5 L220.7 2083.4 L224.5 2086.8 L228.3 2084.2 L232.1 2083.3 L235.8 2086.8 L239.6 2085.6 L243.4 2086.7 L247.2 2095.8 L250.9 2094.5 L254.7 2086.7 L258.5 2084.3 L262.3 2091.7 L266.0 2090.7 L269.8 2092.0 L273.6 2087.8 L277.4 2083.1 L281.1 2084.2 L284.9 2095.8 L288.7 2084.8 L292.5 2093.4 L296.2 2090.6 L300.0 2090.1 L303.8 2085.1 L307.6 2092.8 L311.3 2090.4 L315.1 2087.4 L318.9 2090.9 L322.7 2085.8 L326.4 2091.7 L330.2 2094.6 L334.0 2095.3 L337.8 2090.4 L341.5 2084.1 L345.3 2090.4 L349.1 2089.3 L352.9 2086.0 L356.6 2092.3 L360.4 2085.6 L364.2 2085.8 L368.0 2091.7 L371.7 2090.4 L375.5 2080.0 L379.3 2092.8 L383.1 2088.5 L386.8 2095.9 L390.6 2087.1 L394.4 2090.8 L398.2 2087.6 L401.9 2085.1 L405.7 2073.0 L409.5 2087.4 L413.3 2086.6 L417.0 2092.3 L420.8 2084.9 L424.6 2084.7 L428.4 2088.7 L432.1 2093.0 L435.9 2086.4 L439.7 2088.1 L443.5 2092.8 L447.2 2089.4 L451.0 2089.0 L454.8 2095.6 L458.6 2078.2 L462.3 2099.2 L466.1 2090.6 L469.9 2091.9 L473.7 2089.9 L477.4 2087.9 L481.2 2092.2 L485.0 2081.1 L488.8 2083.5 L492.5 2093.7 L496.3 2086.1 L500.1 2091.2 L503.9 2086.4 L507.6 2090.6 L511.4 2087.2 L515.2 2081.3 L519.0 2084.2 L522.7 2105.8 L526.5 2091.0 L530.3 2091.8 L534.1 2090.7 L537.8 2094.8 L541.6 2084.1 L545.4 2092.4 L549.2 2089.4 L552.9 2088.9 L556.7 2087.2 L560.5 2084.2 L564.3 2088.5 L568.0 2095.2 L571.8 2092.9 L575.6 2091.5 L579.4 2089.2 L583.1 2089.2 L586.9 2088.9 L590.7 2088.1 L594.5 2090.8 L598.2 2088.5 L602.0 2081.4 L605.8 2086.6 L609.6 2093.0 L613.3 2092.1 L617.1 2083.6 L620.9 2085.6 L624.7 2085.9 L628.4 2096.0 L632.2 2090.5 L636.0 2093.0 L639.8 2086.6 L643.5 2089.4 L647.3 2084.0 L651.1 2086.9 L654.9 2086.1 L658.6 2089.5 L662.4 2090.3 L666.2 2086.3 L670.0 2086.1 L673.7 2092.3 L677.5 2086.4 L681.3 2081.5 L685.1 2086.0 L688.8 2094.5 L692.6 2091.3 L696.4 2090.4 L700.2 2092.6 L703.9 2086.6 L707.7 2087.9 L711.5 2086.2 L715.3 2090.2 L719.0 2083.1 L722.8 2087.2 L726.6 2087.4 L730.4 2085.8 L734.1 2088.1 L737.9 2091.2 L741.7 2086.4 L745.5 2085.9 L749.2 2092.0 L753.0 2088.1 L756.8 2082.6 L760.6 2096.2 L764.3 2080.2 L768.1 2091.9 L771.9 2086.2 L775.7 2087.9 L779.4 2092.5 L783.2 2090.3 L787.0 2093.4 L790.8 2089.3 L794.5 2094.1 L798.3 2095.1 L802.1 2093.3 L805.9 2088.4 L809.6 2086.0 L813.4 2090.3 L817.2 2090.3 L821.0 2092.4 L824.7 2089.1 L828.5 2088.2 L832.3 2091.3 L836.1 2093.0 L839.8 2085.5 L843.6 2094.8 L847.4 2090.9 L851.2 2090.4 L854.9 2090.6 L858.7 2084.6 L862.5 2090.5 L866.3 2095.9 L870.0 2088.1 L873.8 2086.6 L877.6 2087.7 L881.4 2084.6 L885.1 2095.0 L888.9 2091.9 L892.7 2089.4 L896.5 2089.4 L900.2 2093.8 L904.0 2087.0 L907.8 2090.0 L911.6 2087.9 L915.3 2088.9 L919.1 2090.3 L922.9 2090.3 L926.7 2097.4 L930.4 2091.2 L934.2 2088.6 L938.0 2093.6 L941.8 2089.7 L945.5 2089.7 L949.3 2088.9 L953.1 2084.8 L956.9 2091.6 L960.6 2089.0 L964.4 2086.5 L968.2 2086.8 L972.0 2089.9 L975.7 2085.9 L979.5 2089.4 L983.3 2085.6 L987.1 2093.7 L990.8 2079.1 L994.6 2094.0 L998.4 2091.6 L1002.2 2084.3 L1005.9 2095.4 L1009.7 2088.7 L1013.5 2090.6 L1017.3 2090.0 L1021.0 2092.6 L1024.8 2092.6 L1028.6 2092.8 L1032.4 2093.8 L1036.1 2083.5 L1039.9 2088.6 L1043.7 2093.5 L1047.5 2092.0 L1051.2 2091.9 L1055.0 2084.6 L1058.8 2080.8 L1062.6 2084.3 L1066.3 2080.7 L1070.1 2097.8 L1073.9 2086.9 L1077.7 2085.5 L1081.4 2088.2 L1085.2 2089.7 L1089.0 2092.8 L1092.8 2087.5 L1096.5 2091.0 L1100.3 2089.1 L1104.1 2095.9 L1107.9 2092.2 L1111.6 2089.1 L1115.4 2088.6 L1119.2 2090.4 L1123.0 2082.0 L1126.7 2100.3 L1130.5 2089.4 L1134.3 2086.2 L1138.1 2087.4 L1141.8 2086.5 L1145.6 2086.2 L1149.4 2091.8 L1153.2 2087.4 L1156.9 2084.6 L1160.7 2093.1 L1164.5 2091.9" fill="none" stroke="#8AB8FF" stroke-width="2" stroke-linejoin="round"/></g><clipPath id="c8"><rect x="1343" y="1625.7" width="1005" height="540.8"/></clipPath><line x1="1343" y1="1628" x2="2350" y2="1628" stroke="rgba(240,250,255,0.09)" stroke-width="2"/><text x="1332.5" y="1636.7" text-anchor="end" font-size="26" letter-spacing="-0.00" fill="rgb(204,204,220)">2.20 ms</text><line x1="1343" y1="1691" x2="2350" y2="1691" stroke="rgba(240,250,255,0.09)" stroke-width="2"/><text x="1332.5" y="1699.8" text-anchor="end" font-size="26" letter-spacing="-0.00" fill="rgb(204,204,220)">2 ms</text><line x1="1343" y1="1754" x2="2350" y2="1754" stroke="rgba(240,250,255,0.09)" stroke-width="2"/><text x="1332.5" y="1762.9" text-anchor="end" font-size="26" letter-spacing="-0.36" fill="rgb(204,204,220)">1.80 ms</text><line x1="1343" y1="1817" x2="2350" y2="1817" stroke="rgba(240,250,255,0.09)" stroke-width="2"/><text x="1332.5" y="1826.4" text-anchor="end" font-size="26" letter-spacing="-0.36" fill="rgb(204,204,220)">1.60 ms</text><line x1="1343" y1="1880" x2="2350" y2="1880" stroke="rgba(240,250,255,0.09)" stroke-width="2"/><text x="1332.5" y="1889.5" text-anchor="end" font-size="26" letter-spacing="-0.36" fill="rgb(204,204,220)">1.40 ms</text><line x1="1343" y1="1944" x2="2350" y2="1944" stroke="rgba(240,250,255,0.09)" stroke-width="2"/><text x="1332.5" y="1952.5" text-anchor="end" font-size="26" letter-spacing="-0.36" fill="rgb(204,204,220)">1.20 ms</text><line x1="1343" y1="2007" x2="2350" y2="2007" stroke="rgba(240,250,255,0.09)" stroke-width="2"/><text x="1332.5" y="2016.0" text-anchor="end" font-size="26" letter-spacing="-0.62" fill="rgb(204,204,220)">1 ms</text><line x1="1343" y1="2070" x2="2350" y2="2070" stroke="rgba(240,250,255,0.09)" stroke-width="2"/><text x="1332.5" y="2079.0" text-anchor="end" font-size="26" letter-spacing="-0.00" fill="rgb(204,204,220)">800 µs</text><line x1="1343" y1="2134" x2="2350" y2="2134" stroke="rgba(240,250,255,0.09)" stroke-width="2"/><text x="1332.5" y="2142.7" text-anchor="end" font-size="26" letter-spacing="-0.00" fill="rgb(204,204,220)">600 µs</text><line x1="1348" y1="1627.7" x2="1348" y2="2173.5" stroke="rgba(240,250,255,0.09)" stroke-width="2"/><text x="1347.5" y="2203.5" text-anchor="middle" font-size="26" fill="rgb(204,204,220)">20:30</text><line x1="1515" y1="1627.7" x2="1515" y2="2173.5" stroke="rgba(240,250,255,0.09)" stroke-width="2"/><text x="1515.2" y="2203.5" text-anchor="middle" font-size="26" fill="rgb(204,204,220)">21:00</text><line x1="1683" y1="1627.7" x2="1683" y2="2173.5" stroke="rgba(240,250,255,0.09)" stroke-width="2"/><text x="1682.9" y="2203.5" text-anchor="middle" font-size="26" fill="rgb(204,204,220)">21:30</text><line x1="1851" y1="1627.7" x2="1851" y2="2173.5" stroke="rgba(240,250,255,0.09)" stroke-width="2"/><text x="1850.6" y="2203.5" text-anchor="middle" font-size="26" fill="rgb(204,204,220)">22:00</text><line x1="2018" y1="1627.7" x2="2018" y2="2173.5" stroke="rgba(240,250,255,0.09)" stroke-width="2"/><text x="2018.3" y="2203.5" text-anchor="middle" font-size="26" fill="rgb(204,204,220)">22:30</text><line x1="2186" y1="1627.7" x2="2186" y2="2173.5" stroke="rgba(240,250,255,0.09)" stroke-width="2"/><text x="2186.0" y="2203.5" text-anchor="middle" font-size="26" fill="rgb(204,204,220)">23:00</text><g clip-path="url(#c8)"><path d="M1343.0 1766.9 L1346.7 1739.9 L1350.5 1755.9 L1354.2 1764.9 L1357.9 1764.7 L1361.7 1745.8 L1365.4 1752.1 L1369.2 1751.7 L1372.9 1762.3 L1376.6 1776.3 L1380.4 1720.3 L1384.1 1760.3 L1387.8 1744.6 L1391.6 1743.9 L1395.3 1741.8 L1399.0 1758.7 L1402.8 1760.2 L1406.5 1773.0 L1410.2 1781.1 L1414.0 1769.3 L1417.7 1745.0 L1421.5 1770.8 L1425.2 1757.7 L1428.9 1779.1 L1432.7 1770.6 L1436.4 1747.3 L1440.1 1784.2 L1443.9 1755.4 L1447.6 1744.2 L1451.3 1746.0 L1455.1 1756.3 L1458.8 1775.5 L1462.6 1757.9 L1466.3 1749.6 L1470.0 1762.3 L1473.8 1764.4 L1477.5 1777.7 L1481.2 1776.3 L1485.0 1768.9 L1488.7 1737.1 L1492.4 1777.0 L1496.2 1749.9 L1499.9 1758.7 L1503.7 1776.5 L1507.4 1754.4 L1511.1 1746.8 L1514.9 1759.0 L1518.6 1787.9 L1522.3 1764.2 L1526.1 1762.3 L1529.8 1791.1 L1533.5 1771.5 L1537.3 1758.5 L1541.0 1757.6 L1544.7 1785.0 L1548.5 1742.2 L1552.2 1765.3 L1556.0 1726.7 L1559.7 1741.9 L1563.4 1754.7 L1567.2 1739.7 L1570.9 1781.4 L1574.6 1769.1 L1578.4 1764.2 L1582.1 1757.0 L1585.8 1765.4 L1589.6 1733.7 L1593.3 1709.1 L1597.1 1761.4 L1600.8 1760.3 L1604.5 1756.2 L1608.3 1709.8 L1612.0 1760.2 L1615.7 1778.2 L1619.5 1779.9 L1623.2 1756.7 L1626.9 1760.3 L1630.7 1751.5 L1634.4 1740.5 L1638.1 1753.2 L1641.9 1745.3 L1645.6 1755.3 L1649.4 1747.8 L1653.1 1733.7 L1656.8 1731.3 L1660.6 1761.6 L1664.3 1746.7 L1668.0 1740.5 L1671.8 1715.1 L1675.5 1764.6 L1679.2 1780.7 L1683.0 1731.0 L1686.7 1747.0 L1690.5 1784.0 L1694.2 1748.6 L1697.9 1763.8 L1701.7 1775.8 L1705.4 1728.1 L1709.1 1766.2 L1712.9 1738.2 L1716.6 1800.4 L1720.3 1768.8 L1724.1 1780.8 L1727.8 1777.9 L1731.6 1793.3 L1735.3 1752.7 L1739.0 1783.2 L1742.8 1756.5 L1746.5 1730.7 L1750.2 1780.0 L1754.0 1728.6 L1757.7 1758.9 L1761.4 1762.3 L1765.2 1756.4 L1768.9 1753.6 L1772.6 1784.1 L1776.4 1743.6 L1780.1 1761.3 L1783.9 1747.0 L1787.6 1761.7 L1791.3 1784.0 L1795.1 1776.2 L1798.8 1782.6 L1802.5 1768.5 L1806.3 1761.5 L1810.0 1787.8 L1813.7 1751.5 L1817.5 1752.7 L1821.2 1760.6 L1825.0 1753.6 L1828.7 1773.1 L1832.4 1738.7 L1836.2 1746.1 L1839.9 1764.4 L1843.6 1779.0 L1847.4 1748.9 L1851.1 1750.6 L1854.8 1735.3 L1858.6 1773.7 L1862.3 1753.7 L1866.0 1751.4 L1869.8 1757.1 L1873.5 1757.6 L1877.3 1742.5 L1881.0 1726.0 L1884.7 1757.7 L1888.5 1760.4 L1892.2 1751.0 L1895.9 1769.7 L1899.7 1749.7 L1903.4 1734.6 L1907.1 1761.7 L1910.9 1757.8 L1914.6 1766.0 L1918.4 1737.6 L1922.1 1753.7 L1925.8 1787.3 L1929.6 1756.8 L1933.3 1718.3 L1937.0 1770.4 L1940.8 1753.7 L1944.5 1732.7 L1948.2 1736.9 L1952.0 1735.9 L1955.7 1777.5 L1959.4 1772.9 L1963.2 1763.3 L1966.9 1776.5 L1970.7 1763.3 L1974.4 1752.8 L1978.1 1766.3 L1981.9 1772.1 L1985.6 1750.3 L1989.3 1767.5 L1993.1 1749.0 L1996.8 1751.5 L2000.5 1761.6 L2004.3 1754.6 L2008.0 1760.6 L2011.8 1755.9 L2015.5 1757.4 L2019.2 1753.9 L2023.0 1757.9 L2026.7 1752.3 L2030.4 1749.7 L2034.2 1759.4 L2037.9 1774.2 L2041.6 1731.8 L2045.4 1716.9 L2049.1 1759.5 L2052.9 1757.1 L2056.6 1754.9 L2060.3 1752.2 L2064.1 1750.7 L2067.8 1752.1 L2071.5 1762.6 L2075.3 1760.1 L2079.0 1726.2 L2082.7 1782.9 L2086.5 1752.5 L2090.2 1798.0 L2093.9 1775.1 L2097.7 1770.9 L2101.4 1727.7 L2105.2 1779.7 L2108.9 1754.3 L2112.6 1763.9 L2116.4 1755.5 L2120.1 1723.9 L2123.8 1747.9 L2127.6 1770.7 L2131.3 1747.4 L2135.0 1755.3 L2138.8 1754.7 L2142.5 1754.4 L2146.3 1762.9 L2150.0 1744.0 L2153.7 1754.7 L2157.5 1768.9 L2161.2 1756.2 L2164.9 1770.4 L2168.7 1754.5 L2172.4 1746.1 L2176.1 1751.6 L2179.9 1761.9 L2183.6 1746.8 L2187.3 1751.4 L2191.1 1743.5 L2194.8 1763.3 L2198.6 1745.7 L2202.3 1747.0 L2206.0 1742.6 L2209.8 1758.9 L2213.5 1743.9 L2217.2 1769.5 L2221.0 1758.1 L2224.7 1769.7 L2228.4 1748.1 L2232.2 1758.2 L2235.9 1728.2 L2239.7 1771.0 L2243.4 1721.7 L2247.1 1765.8 L2250.9 1755.3 L2254.6 1764.7 L2258.3 1787.8 L2262.1 1753.2 L2265.8 1717.9 L2269.5 1747.8 L2273.3 1755.8 L2277.0 1749.0 L2280.8 1725.3 L2284.5 1741.6 L2288.2 1755.7 L2292.0 1738.1 L2295.7 1764.6 L2299.4 1760.6 L2303.2 1736.0 L2306.9 1756.7 L2310.6 1708.9 L2314.4 1771.7 L2318.1 1764.3 L2321.8 1738.5 L2325.6 1728.6 L2329.3 1750.4 L2333.1 1762.9 L2336.8 1749.4 L2340.5 1731.1 L2344.3 1745.7 L2348.0 1742.3 L2348.0 2168.5 L1343.0 2168.5 Z" fill="#73BF69" fill-opacity="0.1"/><path d="M1343.0 1766.9 L1346.7 1739.9 L1350.5 1755.9 L1354.2 1764.9 L1357.9 1764.7 L1361.7 1745.8 L1365.4 1752.1 L1369.2 1751.7 L1372.9 1762.3 L1376.6 1776.3 L1380.4 1720.3 L1384.1 1760.3 L1387.8 1744.6 L1391.6 1743.9 L1395.3 1741.8 L1399.0 1758.7 L1402.8 1760.2 L1406.5 1773.0 L1410.2 1781.1 L1414.0 1769.3 L1417.7 1745.0 L1421.5 1770.8 L1425.2 1757.7 L1428.9 1779.1 L1432.7 1770.6 L1436.4 1747.3 L1440.1 1784.2 L1443.9 1755.4 L1447.6 1744.2 L1451.3 1746.0 L1455.1 1756.3 L1458.8 1775.5 L1462.6 1757.9 L1466.3 1749.6 L1470.0 1762.3 L1473.8 1764.4 L1477.5 1777.7 L1481.2 1776.3 L1485.0 1768.9 L1488.7 1737.1 L1492.4 1777.0 L1496.2 1749.9 L1499.9 1758.7 L1503.7 1776.5 L1507.4 1754.4 L1511.1 1746.8 L1514.9 1759.0 L1518.6 1787.9 L1522.3 1764.2 L1526.1 1762.3 L1529.8 1791.1 L1533.5 1771.5 L1537.3 1758.5 L1541.0 1757.6 L1544.7 1785.0 L1548.5 1742.2 L1552.2 1765.3 L1556.0 1726.7 L1559.7 1741.9 L1563.4 1754.7 L1567.2 1739.7 L1570.9 1781.4 L1574.6 1769.1 L1578.4 1764.2 L1582.1 1757.0 L1585.8 1765.4 L1589.6 1733.7 L1593.3 1709.1 L1597.1 1761.4 L1600.8 1760.3 L1604.5 1756.2 L1608.3 1709.8 L1612.0 1760.2 L1615.7 1778.2 L1619.5 1779.9 L1623.2 1756.7 L1626.9 1760.3 L1630.7 1751.5 L1634.4 1740.5 L1638.1 1753.2 L1641.9 1745.3 L1645.6 1755.3 L1649.4 1747.8 L1653.1 1733.7 L1656.8 1731.3 L1660.6 1761.6 L1664.3 1746.7 L1668.0 1740.5 L1671.8 1715.1 L1675.5 1764.6 L1679.2 1780.7 L1683.0 1731.0 L1686.7 1747.0 L1690.5 1784.0 L1694.2 1748.6 L1697.9 1763.8 L1701.7 1775.8 L1705.4 1728.1 L1709.1 1766.2 L1712.9 1738.2 L1716.6 1800.4 L1720.3 1768.8 L1724.1 1780.8 L1727.8 1777.9 L1731.6 1793.3 L1735.3 1752.7 L1739.0 1783.2 L1742.8 1756.5 L1746.5 1730.7 L1750.2 1780.0 L1754.0 1728.6 L1757.7 1758.9 L1761.4 1762.3 L1765.2 1756.4 L1768.9 1753.6 L1772.6 1784.1 L1776.4 1743.6 L1780.1 1761.3 L1783.9 1747.0 L1787.6 1761.7 L1791.3 1784.0 L1795.1 1776.2 L1798.8 1782.6 L1802.5 1768.5 L1806.3 1761.5 L1810.0 1787.8 L1813.7 1751.5 L1817.5 1752.7 L1821.2 1760.6 L1825.0 1753.6 L1828.7 1773.1 L1832.4 1738.7 L1836.2 1746.1 L1839.9 1764.4 L1843.6 1779.0 L1847.4 1748.9 L1851.1 1750.6 L1854.8 1735.3 L1858.6 1773.7 L1862.3 1753.7 L1866.0 1751.4 L1869.8 1757.1 L1873.5 1757.6 L1877.3 1742.5 L1881.0 1726.0 L1884.7 1757.7 L1888.5 1760.4 L1892.2 1751.0 L1895.9 1769.7 L1899.7 1749.7 L1903.4 1734.6 L1907.1 1761.7 L1910.9 1757.8 L1914.6 1766.0 L1918.4 1737.6 L1922.1 1753.7 L1925.8 1787.3 L1929.6 1756.8 L1933.3 1718.3 L1937.0 1770.4 L1940.8 1753.7 L1944.5 1732.7 L1948.2 1736.9 L1952.0 1735.9 L1955.7 1777.5 L1959.4 1772.9 L1963.2 1763.3 L1966.9 1776.5 L1970.7 1763.3 L1974.4 1752.8 L1978.1 1766.3 L1981.9 1772.1 L1985.6 1750.3 L1989.3 1767.5 L1993.1 1749.0 L1996.8 1751.5 L2000.5 1761.6 L2004.3 1754.6 L2008.0 1760.6 L2011.8 1755.9 L2015.5 1757.4 L2019.2 1753.9 L2023.0 1757.9 L2026.7 1752.3 L2030.4 1749.7 L2034.2 1759.4 L2037.9 1774.2 L2041.6 1731.8 L2045.4 1716.9 L2049.1 1759.5 L2052.9 1757.1 L2056.6 1754.9 L2060.3 1752.2 L2064.1 1750.7 L2067.8 1752.1 L2071.5 1762.6 L2075.3 1760.1 L2079.0 1726.2 L2082.7 1782.9 L2086.5 1752.5 L2090.2 1798.0 L2093.9 1775.1 L2097.7 1770.9 L2101.4 1727.7 L2105.2 1779.7 L2108.9 1754.3 L2112.6 1763.9 L2116.4 1755.5 L2120.1 1723.9 L2123.8 1747.9 L2127.6 1770.7 L2131.3 1747.4 L2135.0 1755.3 L2138.8 1754.7 L2142.5 1754.4 L2146.3 1762.9 L2150.0 1744.0 L2153.7 1754.7 L2157.5 1768.9 L2161.2 1756.2 L2164.9 1770.4 L2168.7 1754.5 L2172.4 1746.1 L2176.1 1751.6 L2179.9 1761.9 L2183.6 1746.8 L2187.3 1751.4 L2191.1 1743.5 L2194.8 1763.3 L2198.6 1745.7 L2202.3 1747.0 L2206.0 1742.6 L2209.8 1758.9 L2213.5 1743.9 L2217.2 1769.5 L2221.0 1758.1 L2224.7 1769.7 L2228.4 1748.1 L2232.2 1758.2 L2235.9 1728.2 L2239.7 1771.0 L2243.4 1721.7 L2247.1 1765.8 L2250.9 1755.3 L2254.6 1764.7 L2258.3 1787.8 L2262.1 1753.2 L2265.8 1717.9 L2269.5 1747.8 L2273.3 1755.8 L2277.0 1749.0 L2280.8 1725.3 L2284.5 1741.6 L2288.2 1755.7 L2292.0 1738.1 L2295.7 1764.6 L2299.4 1760.6 L2303.2 1736.0 L2306.9 1756.7 L2310.6 1708.9 L2314.4 1771.7 L2318.1 1764.3 L2321.8 1738.5 L2325.6 1728.6 L2329.3 1750.4 L2333.1 1762.9 L2336.8 1749.4 L2340.5 1731.1 L2344.3 1745.7 L2348.0 1742.3" fill="none" stroke="#73BF69" stroke-width="2" stroke-linejoin="round"/><path d="M1343.0 1981.6 L1346.7 1970.1 L1350.5 1994.2 L1354.2 2004.1 L1357.9 1995.1 L1361.7 1978.4 L1365.4 2000.4 L1369.2 1977.1 L1372.9 2002.7 L1376.6 1998.6 L1380.4 1959.4 L1384.1 1994.7 L1387.8 1980.1 L1391.6 1982.3 L1395.3 1965.2 L1399.0 1974.6 L1402.8 1992.3 L1406.5 1996.0 L1410.2 2014.5 L1414.0 1995.9 L1417.7 1985.5 L1421.5 1998.0 L1425.2 1995.3 L1428.9 2009.2 L1432.7 1990.0 L1436.4 1991.5 L1440.1 1994.5 L1443.9 1983.0 L1447.6 1988.2 L1451.3 1993.1 L1455.1 2000.0 L1458.8 2000.1 L1462.6 1988.9 L1466.3 1992.7 L1470.0 1996.5 L1473.8 1986.9 L1477.5 2001.0 L1481.2 2003.0 L1485.0 1995.2 L1488.7 1983.5 L1492.4 2007.8 L1496.2 1985.9 L1499.9 1986.9 L1503.7 1997.2 L1507.4 1976.8 L1511.1 1985.0 L1514.9 1988.2 L1518.6 2006.7 L1522.3 1996.9 L1526.1 1984.4 L1529.8 2024.1 L1533.5 1991.6 L1537.3 1994.9 L1541.0 1974.3 L1544.7 2005.0 L1548.5 1980.4 L1552.2 1999.4 L1556.0 1983.8 L1559.7 1980.0 L1563.4 1991.6 L1567.2 1981.6 L1570.9 1995.6 L1574.6 1985.4 L1578.4 2001.6 L1582.1 1985.7 L1585.8 1991.9 L1589.6 1957.9 L1593.3 1952.6 L1597.1 1990.7 L1600.8 2001.9 L1604.5 1988.0 L1608.3 1982.7 L1612.0 1981.7 L1615.7 2010.1 L1619.5 2000.8 L1623.2 1992.7 L1626.9 1997.4 L1630.7 1984.3 L1634.4 1993.7 L1638.1 1988.2 L1641.9 1975.6 L1645.6 1983.4 L1649.4 1982.7 L1653.1 1964.1 L1656.8 1970.3 L1660.6 1983.7 L1664.3 1975.4 L1668.0 1984.9 L1671.8 1962.5 L1675.5 1993.1 L1679.2 2013.1 L1683.0 1972.1 L1686.7 1982.8 L1690.5 2024.1 L1694.2 1976.8 L1697.9 1992.3 L1701.7 1998.0 L1705.4 1969.5 L1709.1 1993.3 L1712.9 1994.0 L1716.6 2022.4 L1720.3 1983.7 L1724.1 2009.7 L1727.8 2004.0 L1731.6 2008.0 L1735.3 1993.3 L1739.0 2014.0 L1742.8 1999.3 L1746.5 1973.4 L1750.2 2003.8 L1754.0 1970.6 L1757.7 1995.1 L1761.4 1995.2 L1765.2 1998.1 L1768.9 1999.1 L1772.6 2007.7 L1776.4 1982.7 L1780.1 1996.4 L1783.9 1986.5 L1787.6 1991.5 L1791.3 2008.4 L1795.1 2008.2 L1798.8 2000.3 L1802.5 2002.2 L1806.3 1992.5 L1810.0 2013.3 L1813.7 1992.0 L1817.5 1980.5 L1821.2 1999.2 L1825.0 1978.9 L1828.7 2001.2 L1832.4 1974.0 L1836.2 1987.4 L1839.9 1993.0 L1843.6 1996.1 L1847.4 1978.5 L1851.1 1979.9 L1854.8 1964.8 L1858.6 1996.2 L1862.3 1966.6 L1866.0 1994.3 L1869.8 1981.9 L1873.5 1988.3 L1877.3 1984.2 L1881.0 1982.7 L1884.7 1981.7 L1888.5 1983.0 L1892.2 1982.8 L1895.9 1985.9 L1899.7 1985.7 L1903.4 1980.2 L1907.1 1994.1 L1910.9 1978.6 L1914.6 1989.6 L1918.4 1977.0 L1922.1 1977.7 L1925.8 2004.7 L1929.6 1983.2 L1933.3 1981.8 L1937.0 1995.8 L1940.8 1983.2 L1944.5 1978.2 L1948.2 1986.7 L1952.0 1988.1 L1955.7 2006.4 L1959.4 1998.8 L1963.2 2007.6 L1966.9 1996.5 L1970.7 1998.4 L1974.4 1997.7 L1978.1 2003.9 L1981.9 2008.3 L1985.6 1991.5 L1989.3 1994.4 L1993.1 1991.0 L1996.8 1991.6 L2000.5 1992.7 L2004.3 1992.0 L2008.0 1989.6 L2011.8 1991.2 L2015.5 1990.7 L2019.2 1983.4 L2023.0 1987.1 L2026.7 1986.6 L2030.4 1994.9 L2034.2 1995.4 L2037.9 1998.2 L2041.6 1978.9 L2045.4 1944.9 L2049.1 1991.6 L2052.9 1988.5 L2056.6 1993.8 L2060.3 1984.9 L2064.1 1990.8 L2067.8 1986.9 L2071.5 1989.7 L2075.3 2006.9 L2079.0 1971.3 L2082.7 2010.6 L2086.5 1995.4 L2090.2 2018.6 L2093.9 2010.4 L2097.7 1999.3 L2101.4 1978.0 L2105.2 2005.5 L2108.9 1994.5 L2112.6 1983.8 L2116.4 1986.2 L2120.1 1979.1 L2123.8 1984.9 L2127.6 2004.8 L2131.3 1982.0 L2135.0 1985.8 L2138.8 1989.5 L2142.5 1981.6 L2146.3 1988.6 L2150.0 1984.5 L2153.7 1993.7 L2157.5 2003.6 L2161.2 1995.4 L2164.9 1988.0 L2168.7 1983.6 L2172.4 1985.7 L2176.1 1980.0 L2179.9 1993.7 L2183.6 1984.8 L2187.3 1992.5 L2191.1 1976.0 L2194.8 1993.2 L2198.6 1969.6 L2202.3 1997.0 L2206.0 1986.7 L2209.8 1987.9 L2213.5 1979.3 L2217.2 1983.4 L2221.0 1988.3 L2224.7 1981.7 L2228.4 1975.9 L2232.2 1984.5 L2235.9 1955.9 L2239.7 2004.2 L2243.4 1973.9 L2247.1 1995.2 L2250.9 1982.5 L2254.6 1990.9 L2258.3 2010.7 L2262.1 1988.8 L2265.8 1955.3 L2269.5 1979.2 L2273.3 1975.7 L2277.0 1964.7 L2280.8 1959.8 L2284.5 1970.4 L2288.2 1987.5 L2292.0 1973.0 L2295.7 1999.1 L2299.4 1998.7 L2303.2 1973.6 L2306.9 1987.2 L2310.6 1942.9 L2314.4 1998.5 L2318.1 2001.0 L2321.8 1971.9 L2325.6 1989.5 L2329.3 1984.2 L2333.1 1991.1 L2336.8 1985.6 L2340.5 1963.1 L2344.3 1983.6 L2348.0 1984.6 L2348.0 2168.5 L1343.0 2168.5 Z" fill="#F2CC0C" fill-opacity="0.1"/><path d="M1343.0 1981.6 L1346.7 1970.1 L1350.5 1994.2 L1354.2 2004.1 L1357.9 1995.1 L1361.7 1978.4 L1365.4 2000.4 L1369.2 1977.1 L1372.9 2002.7 L1376.6 1998.6 L1380.4 1959.4 L1384.1 1994.7 L1387.8 1980.1 L1391.6 1982.3 L1395.3 1965.2 L1399.0 1974.6 L1402.8 1992.3 L1406.5 1996.0 L1410.2 2014.5 L1414.0 1995.9 L1417.7 1985.5 L1421.5 1998.0 L1425.2 1995.3 L1428.9 2009.2 L1432.7 1990.0 L1436.4 1991.5 L1440.1 1994.5 L1443.9 1983.0 L1447.6 1988.2 L1451.3 1993.1 L1455.1 2000.0 L1458.8 2000.1 L1462.6 1988.9 L1466.3 1992.7 L1470.0 1996.5 L1473.8 1986.9 L1477.5 2001.0 L1481.2 2003.0 L1485.0 1995.2 L1488.7 1983.5 L1492.4 2007.8 L1496.2 1985.9 L1499.9 1986.9 L1503.7 1997.2 L1507.4 1976.8 L1511.1 1985.0 L1514.9 1988.2 L1518.6 2006.7 L1522.3 1996.9 L1526.1 1984.4 L1529.8 2024.1 L1533.5 1991.6 L1537.3 1994.9 L1541.0 1974.3 L1544.7 2005.0 L1548.5 1980.4 L1552.2 1999.4 L1556.0 1983.8 L1559.7 1980.0 L1563.4 1991.6 L1567.2 1981.6 L1570.9 1995.6 L1574.6 1985.4 L1578.4 2001.6 L1582.1 1985.7 L1585.8 1991.9 L1589.6 1957.9 L1593.3 1952.6 L1597.1 1990.7 L1600.8 2001.9 L1604.5 1988.0 L1608.3 1982.7 L1612.0 1981.7 L1615.7 2010.1 L1619.5 2000.8 L1623.2 1992.7 L1626.9 1997.4 L1630.7 1984.3 L1634.4 1993.7 L1638.1 1988.2 L1641.9 1975.6 L1645.6 1983.4 L1649.4 1982.7 L1653.1 1964.1 L1656.8 1970.3 L1660.6 1983.7 L1664.3 1975.4 L1668.0 1984.9 L1671.8 1962.5 L1675.5 1993.1 L1679.2 2013.1 L1683.0 1972.1 L1686.7 1982.8 L1690.5 2024.1 L1694.2 1976.8 L1697.9 1992.3 L1701.7 1998.0 L1705.4 1969.5 L1709.1 1993.3 L1712.9 1994.0 L1716.6 2022.4 L1720.3 1983.7 L1724.1 2009.7 L1727.8 2004.0 L1731.6 2008.0 L1735.3 1993.3 L1739.0 2014.0 L1742.8 1999.3 L1746.5 1973.4 L1750.2 2003.8 L1754.0 1970.6 L1757.7 1995.1 L1761.4 1995.2 L1765.2 1998.1 L1768.9 1999.1 L1772.6 2007.7 L1776.4 1982.7 L1780.1 1996.4 L1783.9 1986.5 L1787.6 1991.5 L1791.3 2008.4 L1795.1 2008.2 L1798.8 2000.3 L1802.5 2002.2 L1806.3 1992.5 L1810.0 2013.3 L1813.7 1992.0 L1817.5 1980.5 L1821.2 1999.2 L1825.0 1978.9 L1828.7 2001.2 L1832.4 1974.0 L1836.2 1987.4 L1839.9 1993.0 L1843.6 1996.1 L1847.4 1978.5 L1851.1 1979.9 L1854.8 1964.8 L1858.6 1996.2 L1862.3 1966.6 L1866.0 1994.3 L1869.8 1981.9 L1873.5 1988.3 L1877.3 1984.2 L1881.0 1982.7 L1884.7 1981.7 L1888.5 1983.0 L1892.2 1982.8 L1895.9 1985.9 L1899.7 1985.7 L1903.4 1980.2 L1907.1 1994.1 L1910.9 1978.6 L1914.6 1989.6 L1918.4 1977.0 L1922.1 1977.7 L1925.8 2004.7 L1929.6 1983.2 L1933.3 1981.8 L1937.0 1995.8 L1940.8 1983.2 L1944.5 1978.2 L1948.2 1986.7 L1952.0 1988.1 L1955.7 2006.4 L1959.4 1998.8 L1963.2 2007.6 L1966.9 1996.5 L1970.7 1998.4 L1974.4 1997.7 L1978.1 2003.9 L1981.9 2008.3 L1985.6 1991.5 L1989.3 1994.4 L1993.1 1991.0 L1996.8 1991.6 L2000.5 1992.7 L2004.3 1992.0 L2008.0 1989.6 L2011.8 1991.2 L2015.5 1990.7 L2019.2 1983.4 L2023.0 1987.1 L2026.7 1986.6 L2030.4 1994.9 L2034.2 1995.4 L2037.9 1998.2 L2041.6 1978.9 L2045.4 1944.9 L2049.1 1991.6 L2052.9 1988.5 L2056.6 1993.8 L2060.3 1984.9 L2064.1 1990.8 L2067.8 1986.9 L2071.5 1989.7 L2075.3 2006.9 L2079.0 1971.3 L2082.7 2010.6 L2086.5 1995.4 L2090.2 2018.6 L2093.9 2010.4 L2097.7 1999.3 L2101.4 1978.0 L2105.2 2005.5 L2108.9 1994.5 L2112.6 1983.8 L2116.4 1986.2 L2120.1 1979.1 L2123.8 1984.9 L2127.6 2004.8 L2131.3 1982.0 L2135.0 1985.8 L2138.8 1989.5 L2142.5 1981.6 L2146.3 1988.6 L2150.0 1984.5 L2153.7 1993.7 L2157.5 2003.6 L2161.2 1995.4 L2164.9 1988.0 L2168.7 1983.6 L2172.4 1985.7 L2176.1 1980.0 L2179.9 1993.7 L2183.6 1984.8 L2187.3 1992.5 L2191.1 1976.0 L2194.8 1993.2 L2198.6 1969.6 L2202.3 1997.0 L2206.0 1986.7 L2209.8 1987.9 L2213.5 1979.3 L2217.2 1983.4 L2221.0 1988.3 L2224.7 1981.7 L2228.4 1975.9 L2232.2 1984.5 L2235.9 1955.9 L2239.7 2004.2 L2243.4 1973.9 L2247.1 1995.2 L2250.9 1982.5 L2254.6 1990.9 L2258.3 2010.7 L2262.1 1988.8 L2265.8 1955.3 L2269.5 1979.2 L2273.3 1975.7 L2277.0 1964.7 L2280.8 1959.8 L2284.5 1970.4 L2288.2 1987.5 L2292.0 1973.0 L2295.7 1999.1 L2299.4 1998.7 L2303.2 1973.6 L2306.9 1987.2 L2310.6 1942.9 L2314.4 1998.5 L2318.1 2001.0 L2321.8 1971.9 L2325.6 1989.5 L2329.3 1984.2 L2333.1 1991.1 L2336.8 1985.6 L2340.5 1963.1 L2344.3 1983.6 L2348.0 1984.6" fill="none" stroke="#F2CC0C" stroke-width="2" stroke-linejoin="round"/><path d="M1343.0 2113.0 L1346.7 2098.7 L1350.5 2093.3 L1354.2 2091.4 L1357.9 2093.7 L1361.7 2092.9 L1365.4 2080.3 L1369.2 2096.7 L1372.9 2087.2 L1376.6 2112.2 L1380.4 2096.0 L1384.1 2097.8 L1387.8 2092.2 L1391.6 2093.2 L1395.3 2103.8 L1399.0 2115.1 L1402.8 2096.6 L1406.5 2105.4 L1410.2 2095.0 L1414.0 2100.2 L1417.7 2085.4 L1421.5 2103.1 L1425.2 2088.4 L1428.9 2097.9 L1432.7 2107.4 L1436.4 2090.8 L1440.1 2116.4 L1443.9 2106.2 L1447.6 2090.4 L1451.3 2087.8 L1455.1 2078.3 L1458.8 2102.3 L1462.6 2090.4 L1466.3 2082.1 L1470.0 2092.2 L1473.8 2105.7 L1477.5 2113.6 L1481.2 2097.1 L1485.0 2101.4 L1488.7 2090.8 L1492.4 2104.0 L1496.2 2090.3 L1499.9 2100.8 L1503.7 2108.4 L1507.4 2103.8 L1511.1 2094.5 L1514.9 2101.7 L1518.6 2103.1 L1522.3 2098.2 L1526.1 2107.5 L1529.8 2102.7 L1533.5 2112.8 L1537.3 2096.5 L1541.0 2112.8 L1544.7 2117.9 L1548.5 2092.8 L1552.2 2093.2 L1556.0 2073.0 L1559.7 2095.8 L1563.4 2092.9 L1567.2 2084.8 L1570.9 2113.5 L1574.6 2112.1 L1578.4 2093.8 L1582.1 2097.7 L1585.8 2110.3 L1589.6 2102.9 L1593.3 2086.8 L1597.1 2099.3 L1600.8 2088.6 L1604.5 2095.2 L1608.3 2062.9 L1612.0 2107.3 L1615.7 2095.7 L1619.5 2105.6 L1623.2 2088.2 L1626.9 2091.4 L1630.7 2101.3 L1634.4 2080.5 L1638.1 2088.3 L1641.9 2096.8 L1645.6 2096.7 L1649.4 2090.3 L1653.1 2101.8 L1656.8 2091.5 L1660.6 2105.2 L1664.3 2100.8 L1668.0 2092.9 L1671.8 2088.6 L1675.5 2100.5 L1679.2 2096.4 L1683.0 2089.9 L1686.7 2095.2 L1690.5 2090.5 L1694.2 2097.3 L1697.9 2102.5 L1701.7 2106.0 L1705.4 2085.9 L1709.1 2102.5 L1712.9 2071.7 L1716.6 2108.4 L1720.3 2111.2 L1724.1 2096.1 L1727.8 2104.0 L1731.6 2114.5 L1735.3 2088.2 L1739.0 2095.7 L1742.8 2085.0 L1746.5 2089.1 L1750.2 2106.0 L1754.0 2083.0 L1757.7 2092.0 L1761.4 2090.1 L1765.2 2091.9 L1768.9 2077.9 L1772.6 2097.2 L1776.4 2086.4 L1780.1 2094.7 L1783.9 2086.9 L1787.6 2096.4 L1791.3 2101.2 L1795.1 2100.8 L1798.8 2108.7 L1802.5 2098.5 L1806.3 2100.2 L1810.0 2104.9 L1813.7 2091.4 L1817.5 2100.6 L1821.2 2095.5 L1825.0 2102.8 L1828.7 2102.5 L1832.4 2099.3 L1836.2 2083.2 L1839.9 2094.5 L1843.6 2109.7 L1847.4 2096.5 L1851.1 2098.4 L1854.8 2098.3 L1858.6 2112.2 L1862.3 2119.1 L1866.0 2087.8 L1869.8 2105.1 L1873.5 2101.6 L1877.3 2092.0 L1881.0 2076.8 L1884.7 2108.1 L1888.5 2101.7 L1892.2 2095.9 L1895.9 2114.4 L1899.7 2098.1 L1903.4 2089.2 L1907.1 2100.4 L1910.9 2111.5 L1914.6 2100.9 L1918.4 2085.8 L1922.1 2106.0 L1925.8 2106.7 L1929.6 2106.0 L1933.3 2068.0 L1937.0 2103.1 L1940.8 2102.4 L1944.5 2085.1 L1948.2 2082.1 L1952.0 2077.7 L1955.7 2098.7 L1959.4 2104.3 L1963.2 2088.9 L1966.9 2100.3 L1970.7 2094.3 L1974.4 2087.6 L1978.1 2092.7 L1981.9 2094.3 L1985.6 2091.5 L1989.3 2099.9 L1993.1 2085.2 L1996.8 2086.8 L2000.5 2096.8 L2004.3 2097.0 L2008.0 2098.1 L2011.8 2090.8 L2015.5 2096.7 L2019.2 2100.0 L2023.0 2102.1 L2026.7 2097.9 L2030.4 2089.5 L2034.2 2097.8 L2037.9 2106.4 L2041.6 2084.0 L2045.4 2101.8 L2049.1 2099.1 L2052.9 2098.4 L2056.6 2086.0 L2060.3 2101.9 L2064.1 2088.0 L2067.8 2094.2 L2071.5 2101.5 L2075.3 2083.6 L2079.0 2082.6 L2082.7 2104.7 L2086.5 2091.8 L2090.2 2113.6 L2093.9 2097.7 L2097.7 2101.7 L2101.4 2082.9 L2105.2 2102.8 L2108.9 2095.4 L2112.6 2106.7 L2116.4 2101.2 L2120.1 2078.0 L2123.8 2100.8 L2127.6 2099.8 L2131.3 2093.1 L2135.0 2096.5 L2138.8 2092.8 L2142.5 2103.2 L2146.3 2100.9 L2150.0 2090.6 L2153.7 2091.1 L2157.5 2094.3 L2161.2 2089.8 L2164.9 2112.5 L2168.7 2100.8 L2172.4 2089.8 L2176.1 2106.0 L2179.9 2097.0 L2183.6 2094.1 L2187.3 2090.5 L2191.1 2097.0 L2194.8 2100.4 L2198.6 2102.8 L2202.3 2084.1 L2206.0 2084.0 L2209.8 2105.3 L2213.5 2098.1 L2217.2 2105.5 L2221.0 2094.4 L2224.7 2111.6 L2228.4 2097.5 L2232.2 2101.4 L2235.9 2102.2 L2239.7 2094.0 L2243.4 2078.3 L2247.1 2097.0 L2250.9 2100.7 L2254.6 2101.6 L2258.3 2108.7 L2262.1 2097.7 L2265.8 2094.6 L2269.5 2094.9 L2273.3 2107.8 L2277.0 2109.1 L2280.8 2090.7 L2284.5 2100.8 L2288.2 2096.7 L2292.0 2096.1 L2295.7 2095.8 L2299.4 2086.0 L2303.2 2092.8 L2306.9 2091.6 L2310.6 2093.6 L2314.4 2099.4 L2318.1 2092.4 L2321.8 2097.0 L2325.6 2065.0 L2329.3 2095.6 L2333.1 2097.7 L2336.8 2090.1 L2340.5 2088.1 L2344.3 2095.7 L2348.0 2085.2 L2348.0 2168.5 L1343.0 2168.5 Z" fill="#8AB8FF" fill-opacity="0.1"/><path d="M1343.0 2113.0 L1346.7 2098.7 L1350.5 2093.3 L1354.2 2091.4 L1357.9 2093.7 L1361.7 2092.9 L1365.4 2080.3 L1369.2 2096.7 L1372.9 2087.2 L1376.6 2112.2 L1380.4 2096.0 L1384.1 2097.8 L1387.8 2092.2 L1391.6 2093.2 L1395.3 2103.8 L1399.0 2115.1 L1402.8 2096.6 L1406.5 2105.4 L1410.2 2095.0 L1414.0 2100.2 L1417.7 2085.4 L1421.5 2103.1 L1425.2 2088.4 L1428.9 2097.9 L1432.7 2107.4 L1436.4 2090.8 L1440.1 2116.4 L1443.9 2106.2 L1447.6 2090.4 L1451.3 2087.8 L1455.1 2078.3 L1458.8 2102.3 L1462.6 2090.4 L1466.3 2082.1 L1470.0 2092.2 L1473.8 2105.7 L1477.5 2113.6 L1481.2 2097.1 L1485.0 2101.4 L1488.7 2090.8 L1492.4 2104.0 L1496.2 2090.3 L1499.9 2100.8 L1503.7 2108.4 L1507.4 2103.8 L1511.1 2094.5 L1514.9 2101.7 L1518.6 2103.1 L1522.3 2098.2 L1526.1 2107.5 L1529.8 2102.7 L1533.5 2112.8 L1537.3 2096.5 L1541.0 2112.8 L1544.7 2117.9 L1548.5 2092.8 L1552.2 2093.2 L1556.0 2073.0 L1559.7 2095.8 L1563.4 2092.9 L1567.2 2084.8 L1570.9 2113.5 L1574.6 2112.1 L1578.4 2093.8 L1582.1 2097.7 L1585.8 2110.3 L1589.6 2102.9 L1593.3 2086.8 L1597.1 2099.3 L1600.8 2088.6 L1604.5 2095.2 L1608.3 2062.9 L1612.0 2107.3 L1615.7 2095.7 L1619.5 2105.6 L1623.2 2088.2 L1626.9 2091.4 L1630.7 2101.3 L1634.4 2080.5 L1638.1 2088.3 L1641.9 2096.8 L1645.6 2096.7 L1649.4 2090.3 L1653.1 2101.8 L1656.8 2091.5 L1660.6 2105.2 L1664.3 2100.8 L1668.0 2092.9 L1671.8 2088.6 L1675.5 2100.5 L1679.2 2096.4 L1683.0 2089.9 L1686.7 2095.2 L1690.5 2090.5 L1694.2 2097.3 L1697.9 2102.5 L1701.7 2106.0 L1705.4 2085.9 L1709.1 2102.5 L1712.9 2071.7 L1716.6 2108.4 L1720.3 2111.2 L1724.1 2096.1 L1727.8 2104.0 L1731.6 2114.5 L1735.3 2088.2 L1739.0 2095.7 L1742.8 2085.0 L1746.5 2089.1 L1750.2 2106.0 L1754.0 2083.0 L1757.7 2092.0 L1761.4 2090.1 L1765.2 2091.9 L1768.9 2077.9 L1772.6 2097.2 L1776.4 2086.4 L1780.1 2094.7 L1783.9 2086.9 L1787.6 2096.4 L1791.3 2101.2 L1795.1 2100.8 L1798.8 2108.7 L1802.5 2098.5 L1806.3 2100.2 L1810.0 2104.9 L1813.7 2091.4 L1817.5 2100.6 L1821.2 2095.5 L1825.0 2102.8 L1828.7 2102.5 L1832.4 2099.3 L1836.2 2083.2 L1839.9 2094.5 L1843.6 2109.7 L1847.4 2096.5 L1851.1 2098.4 L1854.8 2098.3 L1858.6 2112.2 L1862.3 2119.1 L1866.0 2087.8 L1869.8 2105.1 L1873.5 2101.6 L1877.3 2092.0 L1881.0 2076.8 L1884.7 2108.1 L1888.5 2101.7 L1892.2 2095.9 L1895.9 2114.4 L1899.7 2098.1 L1903.4 2089.2 L1907.1 2100.4 L1910.9 2111.5 L1914.6 2100.9 L1918.4 2085.8 L1922.1 2106.0 L1925.8 2106.7 L1929.6 2106.0 L1933.3 2068.0 L1937.0 2103.1 L1940.8 2102.4 L1944.5 2085.1 L1948.2 2082.1 L1952.0 2077.7 L1955.7 2098.7 L1959.4 2104.3 L1963.2 2088.9 L1966.9 2100.3 L1970.7 2094.3 L1974.4 2087.6 L1978.1 2092.7 L1981.9 2094.3 L1985.6 2091.5 L1989.3 2099.9 L1993.1 2085.2 L1996.8 2086.8 L2000.5 2096.8 L2004.3 2097.0 L2008.0 2098.1 L2011.8 2090.8 L2015.5 2096.7 L2019.2 2100.0 L2023.0 2102.1 L2026.7 2097.9 L2030.4 2089.5 L2034.2 2097.8 L2037.9 2106.4 L2041.6 2084.0 L2045.4 2101.8 L2049.1 2099.1 L2052.9 2098.4 L2056.6 2086.0 L2060.3 2101.9 L2064.1 2088.0 L2067.8 2094.2 L2071.5 2101.5 L2075.3 2083.6 L2079.0 2082.6 L2082.7 2104.7 L2086.5 2091.8 L2090.2 2113.6 L2093.9 2097.7 L2097.7 2101.7 L2101.4 2082.9 L2105.2 2102.8 L2108.9 2095.4 L2112.6 2106.7 L2116.4 2101.2 L2120.1 2078.0 L2123.8 2100.8 L2127.6 2099.8 L2131.3 2093.1 L2135.0 2096.5 L2138.8 2092.8 L2142.5 2103.2 L2146.3 2100.9 L2150.0 2090.6 L2153.7 2091.1 L2157.5 2094.3 L2161.2 2089.8 L2164.9 2112.5 L2168.7 2100.8 L2172.4 2089.8 L2176.1 2106.0 L2179.9 2097.0 L2183.6 2094.1 L2187.3 2090.5 L2191.1 2097.0 L2194.8 2100.4 L2198.6 2102.8 L2202.3 2084.1 L2206.0 2084.0 L2209.8 2105.3 L2213.5 2098.1 L2217.2 2105.5 L2221.0 2094.4 L2224.7 2111.6 L2228.4 2097.5 L2232.2 2101.4 L2235.9 2102.2 L2239.7 2094.0 L2243.4 2078.3 L2247.1 2097.0 L2250.9 2100.7 L2254.6 2101.6 L2258.3 2108.7 L2262.1 2097.7 L2265.8 2094.6 L2269.5 2094.9 L2273.3 2107.8 L2277.0 2109.1 L2280.8 2090.7 L2284.5 2100.8 L2288.2 2096.7 L2292.0 2096.1 L2295.7 2095.8 L2299.4 2086.0 L2303.2 2092.8 L2306.9 2091.6 L2310.6 2093.6 L2314.4 2099.4 L2318.1 2092.4 L2321.8 2097.0 L2325.6 2065.0 L2329.3 2095.6 L2333.1 2097.7 L2336.8 2090.1 L2340.5 2088.1 L2344.3 2095.7 L2348.0 2085.2" fill="none" stroke="#8AB8FF" stroke-width="2" stroke-linejoin="round"/></g><clipPath id="c9"><rect x="2500.8" y="1625.2" width="1031.1999999999998" height="540.3"/></clipPath><line x1="2500.8" y1="1627" x2="3534" y2="1627" stroke="rgba(240,250,255,0.09)" stroke-width="2"/><text x="2490.3" y="1636.0" text-anchor="end" font-size="26" letter-spacing="-0.50" fill="rgb(204,204,220)">16 ms</text><line x1="2500.8" y1="1705" x2="3534" y2="1705" stroke="rgba(240,250,255,0.09)" stroke-width="2"/><text x="2490.3" y="1713.7" text-anchor="end" font-size="26" letter-spacing="-0.50" fill="rgb(204,204,220)">14 ms</text><line x1="2500.8" y1="1782" x2="3534" y2="1782" stroke="rgba(240,250,255,0.09)" stroke-width="2"/><text x="2490.3" y="1790.7" text-anchor="end" font-size="26" letter-spacing="-0.50" fill="rgb(204,204,220)">12 ms</text><line x1="2500.8" y1="1859" x2="3534" y2="1859" stroke="rgba(240,250,255,0.09)" stroke-width="2"/><text x="2490.3" y="1867.6" text-anchor="end" font-size="26" letter-spacing="-0.50" fill="rgb(204,204,220)">10 ms</text><line x1="2500.8" y1="1935" x2="3534" y2="1935" stroke="rgba(240,250,255,0.09)" stroke-width="2"/><text x="2490.3" y="1943.6" text-anchor="end" font-size="26" letter-spacing="-0.00" fill="rgb(204,204,220)">8 ms</text><line x1="2500.8" y1="2012" x2="3534" y2="2012" stroke="rgba(240,250,255,0.09)" stroke-width="2"/><text x="2490.3" y="2020.5" text-anchor="end" font-size="26" letter-spacing="-0.00" fill="rgb(204,204,220)">6 ms</text><line x1="2500.8" y1="2088" x2="3534" y2="2088" stroke="rgba(240,250,255,0.09)" stroke-width="2"/><text x="2490.3" y="2096.5" text-anchor="end" font-size="26" letter-spacing="-0.00" fill="rgb(204,204,220)">4 ms</text><line x1="2500.8" y1="2166" x2="3534" y2="2166" stroke="rgba(240,250,255,0.09)" stroke-width="2"/><text x="2490.3" y="2174.5" text-anchor="end" font-size="26" letter-spacing="-0.00" fill="rgb(204,204,220)">2 ms</text><line x1="2506" y1="1627.2" x2="2506" y2="2172.5" stroke="rgba(240,250,255,0.09)" stroke-width="2"/><text x="2505.7" y="2202.5" text-anchor="middle" font-size="26" fill="rgb(204,204,220)">20:30</text><line x1="2678" y1="1627.2" x2="2678" y2="2172.5" stroke="rgba(240,250,255,0.09)" stroke-width="2"/><text x="2677.7" y="2202.5" text-anchor="middle" font-size="26" fill="rgb(204,204,220)">21:00</text><line x1="2850" y1="1627.2" x2="2850" y2="2172.5" stroke="rgba(240,250,255,0.09)" stroke-width="2"/><text x="2849.7" y="2202.5" text-anchor="middle" font-size="26" fill="rgb(204,204,220)">21:30</text><line x1="3022" y1="1627.2" x2="3022" y2="2172.5" stroke="rgba(240,250,255,0.09)" stroke-width="2"/><text x="3021.7" y="2202.5" text-anchor="middle" font-size="26" fill="rgb(204,204,220)">22:00</text><line x1="3194" y1="1627.2" x2="3194" y2="2172.5" stroke="rgba(240,250,255,0.09)" stroke-width="2"/><text x="3193.7" y="2202.5" text-anchor="middle" font-size="26" fill="rgb(204,204,220)">22:30</text><line x1="3366" y1="1627.2" x2="3366" y2="2172.5" stroke="rgba(240,250,255,0.09)" stroke-width="2"/><text x="3365.7" y="2202.5" text-anchor="middle" font-size="26" fill="rgb(204,204,220)">23:00</text><g clip-path="url(#c9)"><path d="M2500.8 1716.2 L2504.6 1708.9 L2508.5 1717.3 L2512.3 1718.2 L2516.1 1737.5 L2520.0 1716.8 L2523.8 1714.3 L2527.6 1718.4 L2531.5 1725.6 L2535.3 1709.8 L2539.1 1722.1 L2543.0 1710.9 L2546.8 1718.6 L2550.6 1714.2 L2554.5 1710.9 L2558.3 1727.6 L2562.1 1712.9 L2566.0 1734.5 L2569.8 1726.5 L2573.6 1708.9 L2577.5 1724.6 L2581.3 1721.5 L2585.1 1713.0 L2589.0 1703.7 L2592.8 1704.1 L2596.6 1705.3 L2600.5 1725.3 L2604.3 1706.4 L2608.1 1716.3 L2612.0 1713.8 L2615.8 1714.8 L2619.6 1721.8 L2623.5 1731.9 L2627.3 1718.5 L2631.1 1714.3 L2635.0 1727.7 L2638.8 1718.5 L2642.6 1709.7 L2646.5 1712.5 L2650.3 1737.5 L2654.1 1740.6 L2658.0 1721.9 L2661.8 1711.4 L2665.6 1719.7 L2669.5 1716.6 L2673.3 1724.3 L2677.1 1719.7 L2681.0 1729.5 L2684.8 1722.5 L2688.6 1713.3 L2692.5 1729.6 L2696.3 1715.8 L2700.1 1720.5 L2704.0 1720.4 L2707.8 1720.2 L2711.6 1725.2 L2715.5 1701.9 L2719.3 1712.4 L2723.1 1711.1 L2727.0 1706.1 L2730.8 1710.1 L2734.6 1730.5 L2738.5 1727.7 L2742.3 1706.4 L2746.1 1716.4 L2750.0 1712.8 L2753.8 1702.7 L2757.6 1703.5 L2761.5 1708.5 L2765.3 1705.1 L2769.1 1714.9 L2773.0 1679.4 L2776.8 1712.8 L2780.6 1723.7 L2784.5 1709.4 L2788.3 1726.0 L2792.1 1698.4 L2796.0 1717.7 L2799.8 1707.1 L2803.6 1721.3 L2807.5 1722.8 L2811.3 1708.1 L2815.1 1724.7 L2819.0 1709.3 L2822.8 1707.3 L2826.6 1728.7 L2830.5 1714.6 L2834.3 1713.4 L2838.1 1711.1 L2842.0 1709.8 L2845.8 1722.0 L2849.6 1718.9 L2853.5 1708.7 L2857.3 1712.1 L2861.1 1724.9 L2865.0 1708.3 L2868.8 1715.6 L2872.6 1712.8 L2876.5 1725.8 L2880.3 1713.9 L2884.1 1720.4 L2888.0 1718.5 L2891.8 1726.3 L2895.6 1706.5 L2899.5 1732.3 L2903.3 1708.6 L2907.1 1713.9 L2911.0 1727.7 L2914.8 1729.6 L2918.6 1699.3 L2922.5 1708.6 L2926.3 1723.1 L2930.1 1709.2 L2934.0 1712.8 L2937.8 1719.6 L2941.6 1722.6 L2945.5 1720.0 L2949.3 1721.1 L2953.1 1706.9 L2957.0 1728.2 L2960.8 1715.8 L2964.6 1723.4 L2968.5 1711.9 L2972.3 1714.9 L2976.1 1713.3 L2980.0 1721.1 L2983.8 1716.9 L2987.6 1715.5 L2991.5 1725.8 L2995.3 1719.7 L2999.1 1714.9 L3003.0 1726.4 L3006.8 1706.7 L3010.6 1723.3 L3014.5 1704.7 L3018.3 1722.8 L3022.2 1731.5 L3026.0 1721.7 L3029.8 1716.7 L3033.7 1727.5 L3037.5 1715.5 L3041.3 1715.0 L3045.2 1710.8 L3049.0 1728.0 L3052.8 1716.1 L3056.7 1722.3 L3060.5 1725.0 L3064.3 1730.1 L3068.2 1716.2 L3072.0 1724.1 L3075.8 1722.5 L3079.7 1722.6 L3083.5 1720.1 L3087.3 1694.2 L3091.2 1734.9 L3095.0 1689.1 L3098.8 1707.9 L3102.7 1728.6 L3106.5 1712.3 L3110.3 1712.0 L3114.2 1718.5 L3118.0 1727.1 L3121.8 1715.5 L3125.7 1712.6 L3129.5 1717.5 L3133.3 1723.1 L3137.2 1715.8 L3141.0 1703.9 L3144.8 1710.1 L3148.7 1694.1 L3152.5 1707.8 L3156.3 1697.2 L3160.2 1721.2 L3164.0 1725.1 L3167.8 1721.3 L3171.7 1729.8 L3175.5 1720.1 L3179.3 1732.1 L3183.2 1727.6 L3187.0 1715.5 L3190.8 1722.6 L3194.7 1713.6 L3198.5 1719.5 L3202.3 1725.7 L3206.2 1722.0 L3210.0 1722.3 L3213.8 1714.8 L3217.7 1725.3 L3221.5 1727.3 L3225.3 1720.8 L3229.2 1725.5 L3233.0 1718.7 L3236.8 1708.1 L3240.7 1716.1 L3244.5 1723.1 L3248.3 1723.6 L3252.2 1702.6 L3256.0 1733.2 L3259.8 1725.4 L3263.7 1724.8 L3267.5 1728.6 L3271.3 1709.5 L3275.2 1694.0 L3279.0 1725.2 L3282.8 1711.2 L3286.7 1704.0 L3290.5 1700.8 L3294.3 1717.7 L3298.2 1715.0 L3302.0 1713.2 L3305.8 1705.1 L3309.7 1720.6 L3313.5 1713.7 L3317.3 1722.6 L3321.2 1736.2 L3325.0 1714.9 L3328.8 1715.7 L3332.7 1725.4 L3336.5 1706.5 L3340.3 1711.8 L3344.2 1711.3 L3348.0 1722.8 L3351.8 1713.9 L3355.7 1723.2 L3359.5 1700.1 L3363.3 1719.3 L3367.2 1718.7 L3371.0 1721.5 L3374.8 1733.3 L3378.7 1724.0 L3382.5 1729.3 L3386.3 1717.1 L3390.2 1692.5 L3394.0 1726.4 L3397.8 1729.8 L3401.7 1716.3 L3405.5 1701.3 L3409.3 1715.2 L3413.2 1714.5 L3417.0 1724.3 L3420.8 1733.1 L3424.7 1720.1 L3428.5 1711.3 L3432.3 1723.9 L3436.2 1727.5 L3440.0 1707.4 L3443.8 1723.9 L3447.7 1715.4 L3451.5 1729.9 L3455.3 1729.9 L3459.2 1729.8 L3463.0 1731.7 L3466.8 1723.6 L3470.7 1729.5 L3474.5 1724.7 L3478.3 1715.3 L3482.2 1732.0 L3486.0 1715.9 L3489.8 1716.4 L3493.7 1718.7 L3497.5 1724.0 L3501.3 1711.5 L3505.2 1719.7 L3509.0 1711.5 L3512.8 1699.1 L3516.7 1724.1 L3520.5 1720.7 L3524.3 1724.6 L3528.2 1707.2 L3532.0 1721.5 L3532.0 2167.5 L2500.8 2167.5 Z" fill="#73BF69" fill-opacity="0.1"/><path d="M2500.8 1716.2 L2504.6 1708.9 L2508.5 1717.3 L2512.3 1718.2 L2516.1 1737.5 L2520.0 1716.8 L2523.8 1714.3 L2527.6 1718.4 L2531.5 1725.6 L2535.3 1709.8 L2539.1 1722.1 L2543.0 1710.9 L2546.8 1718.6 L2550.6 1714.2 L2554.5 1710.9 L2558.3 1727.6 L2562.1 1712.9 L2566.0 1734.5 L2569.8 1726.5 L2573.6 1708.9 L2577.5 1724.6 L2581.3 1721.5 L2585.1 1713.0 L2589.0 1703.7 L2592.8 1704.1 L2596.6 1705.3 L2600.5 1725.3 L2604.3 1706.4 L2608.1 1716.3 L2612.0 1713.8 L2615.8 1714.8 L2619.6 1721.8 L2623.5 1731.9 L2627.3 1718.5 L2631.1 1714.3 L2635.0 1727.7 L2638.8 1718.5 L2642.6 1709.7 L2646.5 1712.5 L2650.3 1737.5 L2654.1 1740.6 L2658.0 1721.9 L2661.8 1711.4 L2665.6 1719.7 L2669.5 1716.6 L2673.3 1724.3 L2677.1 1719.7 L2681.0 1729.5 L2684.8 1722.5 L2688.6 1713.3 L2692.5 1729.6 L2696.3 1715.8 L2700.1 1720.5 L2704.0 1720.4 L2707.8 1720.2 L2711.6 1725.2 L2715.5 1701.9 L2719.3 1712.4 L2723.1 1711.1 L2727.0 1706.1 L2730.8 1710.1 L2734.6 1730.5 L2738.5 1727.7 L2742.3 1706.4 L2746.1 1716.4 L2750.0 1712.8 L2753.8 1702.7 L2757.6 1703.5 L2761.5 1708.5 L2765.3 1705.1 L2769.1 1714.9 L2773.0 1679.4 L2776.8 1712.8 L2780.6 1723.7 L2784.5 1709.4 L2788.3 1726.0 L2792.1 1698.4 L2796.0 1717.7 L2799.8 1707.1 L2803.6 1721.3 L2807.5 1722.8 L2811.3 1708.1 L2815.1 1724.7 L2819.0 1709.3 L2822.8 1707.3 L2826.6 1728.7 L2830.5 1714.6 L2834.3 1713.4 L2838.1 1711.1 L2842.0 1709.8 L2845.8 1722.0 L2849.6 1718.9 L2853.5 1708.7 L2857.3 1712.1 L2861.1 1724.9 L2865.0 1708.3 L2868.8 1715.6 L2872.6 1712.8 L2876.5 1725.8 L2880.3 1713.9 L2884.1 1720.4 L2888.0 1718.5 L2891.8 1726.3 L2895.6 1706.5 L2899.5 1732.3 L2903.3 1708.6 L2907.1 1713.9 L2911.0 1727.7 L2914.8 1729.6 L2918.6 1699.3 L2922.5 1708.6 L2926.3 1723.1 L2930.1 1709.2 L2934.0 1712.8 L2937.8 1719.6 L2941.6 1722.6 L2945.5 1720.0 L2949.3 1721.1 L2953.1 1706.9 L2957.0 1728.2 L2960.8 1715.8 L2964.6 1723.4 L2968.5 1711.9 L2972.3 1714.9 L2976.1 1713.3 L2980.0 1721.1 L2983.8 1716.9 L2987.6 1715.5 L2991.5 1725.8 L2995.3 1719.7 L2999.1 1714.9 L3003.0 1726.4 L3006.8 1706.7 L3010.6 1723.3 L3014.5 1704.7 L3018.3 1722.8 L3022.2 1731.5 L3026.0 1721.7 L3029.8 1716.7 L3033.7 1727.5 L3037.5 1715.5 L3041.3 1715.0 L3045.2 1710.8 L3049.0 1728.0 L3052.8 1716.1 L3056.7 1722.3 L3060.5 1725.0 L3064.3 1730.1 L3068.2 1716.2 L3072.0 1724.1 L3075.8 1722.5 L3079.7 1722.6 L3083.5 1720.1 L3087.3 1694.2 L3091.2 1734.9 L3095.0 1689.1 L3098.8 1707.9 L3102.7 1728.6 L3106.5 1712.3 L3110.3 1712.0 L3114.2 1718.5 L3118.0 1727.1 L3121.8 1715.5 L3125.7 1712.6 L3129.5 1717.5 L3133.3 1723.1 L3137.2 1715.8 L3141.0 1703.9 L3144.8 1710.1 L3148.7 1694.1 L3152.5 1707.8 L3156.3 1697.2 L3160.2 1721.2 L3164.0 1725.1 L3167.8 1721.3 L3171.7 1729.8 L3175.5 1720.1 L3179.3 1732.1 L3183.2 1727.6 L3187.0 1715.5 L3190.8 1722.6 L3194.7 1713.6 L3198.5 1719.5 L3202.3 1725.7 L3206.2 1722.0 L3210.0 1722.3 L3213.8 1714.8 L3217.7 1725.3 L3221.5 1727.3 L3225.3 1720.8 L3229.2 1725.5 L3233.0 1718.7 L3236.8 1708.1 L3240.7 1716.1 L3244.5 1723.1 L3248.3 1723.6 L3252.2 1702.6 L3256.0 1733.2 L3259.8 1725.4 L3263.7 1724.8 L3267.5 1728.6 L3271.3 1709.5 L3275.2 1694.0 L3279.0 1725.2 L3282.8 1711.2 L3286.7 1704.0 L3290.5 1700.8 L3294.3 1717.7 L3298.2 1715.0 L3302.0 1713.2 L3305.8 1705.1 L3309.7 1720.6 L3313.5 1713.7 L3317.3 1722.6 L3321.2 1736.2 L3325.0 1714.9 L3328.8 1715.7 L3332.7 1725.4 L3336.5 1706.5 L3340.3 1711.8 L3344.2 1711.3 L3348.0 1722.8 L3351.8 1713.9 L3355.7 1723.2 L3359.5 1700.1 L3363.3 1719.3 L3367.2 1718.7 L3371.0 1721.5 L3374.8 1733.3 L3378.7 1724.0 L3382.5 1729.3 L3386.3 1717.1 L3390.2 1692.5 L3394.0 1726.4 L3397.8 1729.8 L3401.7 1716.3 L3405.5 1701.3 L3409.3 1715.2 L3413.2 1714.5 L3417.0 1724.3 L3420.8 1733.1 L3424.7 1720.1 L3428.5 1711.3 L3432.3 1723.9 L3436.2 1727.5 L3440.0 1707.4 L3443.8 1723.9 L3447.7 1715.4 L3451.5 1729.9 L3455.3 1729.9 L3459.2 1729.8 L3463.0 1731.7 L3466.8 1723.6 L3470.7 1729.5 L3474.5 1724.7 L3478.3 1715.3 L3482.2 1732.0 L3486.0 1715.9 L3489.8 1716.4 L3493.7 1718.7 L3497.5 1724.0 L3501.3 1711.5 L3505.2 1719.7 L3509.0 1711.5 L3512.8 1699.1 L3516.7 1724.1 L3520.5 1720.7 L3524.3 1724.6 L3528.2 1707.2 L3532.0 1721.5" fill="none" stroke="#73BF69" stroke-width="2" stroke-linejoin="round"/><path d="M2500.8 2082.6 L2504.6 2082.9 L2508.5 2080.2 L2512.3 2083.2 L2516.1 2083.5 L2520.0 2079.6 L2523.8 2084.5 L2527.6 2079.1 L2531.5 2083.7 L2535.3 2080.8 L2539.1 2082.6 L2543.0 2083.8 L2546.8 2081.4 L2550.6 2084.2 L2554.5 2082.1 L2558.3 2082.4 L2562.1 2080.1 L2566.0 2081.7 L2569.8 2081.1 L2573.6 2081.6 L2577.5 2082.3 L2581.3 2081.9 L2585.1 2078.2 L2589.0 2079.5 L2592.8 2079.5 L2596.6 2084.3 L2600.5 2081.5 L2604.3 2078.8 L2608.1 2080.5 L2612.0 2081.7 L2615.8 2080.0 L2619.6 2085.1 L2623.5 2079.5 L2627.3 2079.7 L2631.1 2080.0 L2635.0 2082.0 L2638.8 2078.6 L2642.6 2080.2 L2646.5 2078.3 L2650.3 2083.9 L2654.1 2081.5 L2658.0 2083.1 L2661.8 2081.3 L2665.6 2081.1 L2669.5 2083.5 L2673.3 2082.1 L2677.1 2080.1 L2681.0 2084.5 L2684.8 2084.0 L2688.6 2080.5 L2692.5 2081.4 L2696.3 2080.4 L2700.1 2081.3 L2704.0 2080.9 L2707.8 2081.5 L2711.6 2079.7 L2715.5 2081.5 L2719.3 2082.4 L2723.1 2078.6 L2727.0 2080.2 L2730.8 2081.3 L2734.6 2081.7 L2738.5 2080.3 L2742.3 2081.6 L2746.1 2080.8 L2750.0 2080.3 L2753.8 2081.7 L2757.6 2080.8 L2761.5 2081.8 L2765.3 2080.3 L2769.1 2079.4 L2773.0 2078.3 L2776.8 2079.6 L2780.6 2083.6 L2784.5 2082.4 L2788.3 2078.6 L2792.1 2080.4 L2796.0 2079.4 L2799.8 2081.5 L2803.6 2078.2 L2807.5 2079.8 L2811.3 2079.6 L2815.1 2079.4 L2819.0 2080.4 L2822.8 2080.2 L2826.6 2081.7 L2830.5 2077.8 L2834.3 2080.2 L2838.1 2081.3 L2842.0 2081.6 L2845.8 2080.6 L2849.6 2081.3 L2853.5 2079.8 L2857.3 2081.2 L2861.1 2081.5 L2865.0 2079.2 L2868.8 2080.0 L2872.6 2079.5 L2876.5 2082.6 L2880.3 2083.9 L2884.1 2082.0 L2888.0 2082.4 L2891.8 2083.1 L2895.6 2082.0 L2899.5 2083.0 L2903.3 2079.2 L2907.1 2079.7 L2911.0 2080.5 L2914.8 2079.4 L2918.6 2081.6 L2922.5 2082.4 L2926.3 2082.9 L2930.1 2078.3 L2934.0 2082.0 L2937.8 2082.7 L2941.6 2081.0 L2945.5 2083.9 L2949.3 2081.9 L2953.1 2080.6 L2957.0 2085.3 L2960.8 2078.5 L2964.6 2082.6 L2968.5 2080.6 L2972.3 2084.2 L2976.1 2085.7 L2980.0 2080.6 L2983.8 2084.8 L2987.6 2079.8 L2991.5 2084.4 L2995.3 2080.3 L2999.1 2082.0 L3003.0 2083.1 L3006.8 2079.7 L3010.6 2081.0 L3014.5 2081.2 L3018.3 2080.3 L3022.2 2082.1 L3026.0 2081.7 L3029.8 2079.6 L3033.7 2082.7 L3037.5 2080.3 L3041.3 2080.5 L3045.2 2080.8 L3049.0 2080.0 L3052.8 2079.5 L3056.7 2082.1 L3060.5 2083.9 L3064.3 2080.7 L3068.2 2081.3 L3072.0 2083.1 L3075.8 2080.0 L3079.7 2082.4 L3083.5 2082.5 L3087.3 2081.2 L3091.2 2084.6 L3095.0 2081.9 L3098.8 2080.1 L3102.7 2080.0 L3106.5 2081.8 L3110.3 2080.3 L3114.2 2079.6 L3118.0 2080.4 L3121.8 2081.5 L3125.7 2079.7 L3129.5 2078.2 L3133.3 2081.5 L3137.2 2081.2 L3141.0 2079.1 L3144.8 2080.4 L3148.7 2078.9 L3152.5 2081.1 L3156.3 2079.4 L3160.2 2081.9 L3164.0 2082.8 L3167.8 2079.5 L3171.7 2081.6 L3175.5 2081.5 L3179.3 2079.6 L3183.2 2078.5 L3187.0 2082.7 L3190.8 2081.4 L3194.7 2080.6 L3198.5 2077.4 L3202.3 2080.4 L3206.2 2082.1 L3210.0 2077.6 L3213.8 2078.3 L3217.7 2082.3 L3221.5 2080.9 L3225.3 2081.7 L3229.2 2079.6 L3233.0 2080.0 L3236.8 2084.1 L3240.7 2078.3 L3244.5 2079.6 L3248.3 2080.1 L3252.2 2078.4 L3256.0 2085.0 L3259.8 2080.4 L3263.7 2082.7 L3267.5 2078.6 L3271.3 2079.2 L3275.2 2077.0 L3279.0 2080.0 L3282.8 2080.7 L3286.7 2078.9 L3290.5 2081.8 L3294.3 2081.6 L3298.2 2079.2 L3302.0 2076.9 L3305.8 2082.0 L3309.7 2081.1 L3313.5 2082.7 L3317.3 2078.9 L3321.2 2079.6 L3325.0 2081.7 L3328.8 2081.4 L3332.7 2081.3 L3336.5 2076.2 L3340.3 2080.1 L3344.2 2077.4 L3348.0 2081.6 L3351.8 2079.2 L3355.7 2079.0 L3359.5 2078.3 L3363.3 2081.0 L3367.2 2081.6 L3371.0 2084.0 L3374.8 2083.5 L3378.7 2081.0 L3382.5 2084.3 L3386.3 2079.3 L3390.2 2081.2 L3394.0 2078.3 L3397.8 2080.2 L3401.7 2080.3 L3405.5 2080.0 L3409.3 2082.4 L3413.2 2082.7 L3417.0 2083.5 L3420.8 2083.5 L3424.7 2083.0 L3428.5 2083.2 L3432.3 2079.6 L3436.2 2080.3 L3440.0 2081.6 L3443.8 2081.8 L3447.7 2078.8 L3451.5 2083.7 L3455.3 2080.0 L3459.2 2081.0 L3463.0 2083.9 L3466.8 2080.7 L3470.7 2080.0 L3474.5 2079.4 L3478.3 2080.8 L3482.2 2082.8 L3486.0 2081.2 L3489.8 2080.7 L3493.7 2081.4 L3497.5 2077.5 L3501.3 2080.0 L3505.2 2080.4 L3509.0 2079.2 L3512.8 2079.1 L3516.7 2078.8 L3520.5 2079.5 L3524.3 2079.6 L3528.2 2079.6 L3532.0 2079.6 L3532.0 2167.5 L2500.8 2167.5 Z" fill="#F2CC0C" fill-opacity="0.1"/><path d="M2500.8 2082.6 L2504.6 2082.9 L2508.5 2080.2 L2512.3 2083.2 L2516.1 2083.5 L2520.0 2079.6 L2523.8 2084.5 L2527.6 2079.1 L2531.5 2083.7 L2535.3 2080.8 L2539.1 2082.6 L2543.0 2083.8 L2546.8 2081.4 L2550.6 2084.2 L2554.5 2082.1 L2558.3 2082.4 L2562.1 2080.1 L2566.0 2081.7 L2569.8 2081.1 L2573.6 2081.6 L2577.5 2082.3 L2581.3 2081.9 L2585.1 2078.2 L2589.0 2079.5 L2592.8 2079.5 L2596.6 2084.3 L2600.5 2081.5 L2604.3 2078.8 L2608.1 2080.5 L2612.0 2081.7 L2615.8 2080.0 L2619.6 2085.1 L2623.5 2079.5 L2627.3 2079.7 L2631.1 2080.0 L2635.0 2082.0 L2638.8 2078.6 L2642.6 2080.2 L2646.5 2078.3 L2650.3 2083.9 L2654.1 2081.5 L2658.0 2083.1 L2661.8 2081.3 L2665.6 2081.1 L2669.5 2083.5 L2673.3 2082.1 L2677.1 2080.1 L2681.0 2084.5 L2684.8 2084.0 L2688.6 2080.5 L2692.5 2081.4 L2696.3 2080.4 L2700.1 2081.3 L2704.0 2080.9 L2707.8 2081.5 L2711.6 2079.7 L2715.5 2081.5 L2719.3 2082.4 L2723.1 2078.6 L2727.0 2080.2 L2730.8 2081.3 L2734.6 2081.7 L2738.5 2080.3 L2742.3 2081.6 L2746.1 2080.8 L2750.0 2080.3 L2753.8 2081.7 L2757.6 2080.8 L2761.5 2081.8 L2765.3 2080.3 L2769.1 2079.4 L2773.0 2078.3 L2776.8 2079.6 L2780.6 2083.6 L2784.5 2082.4 L2788.3 2078.6 L2792.1 2080.4 L2796.0 2079.4 L2799.8 2081.5 L2803.6 2078.2 L2807.5 2079.8 L2811.3 2079.6 L2815.1 2079.4 L2819.0 2080.4 L2822.8 2080.2 L2826.6 2081.7 L2830.5 2077.8 L2834.3 2080.2 L2838.1 2081.3 L2842.0 2081.6 L2845.8 2080.6 L2849.6 2081.3 L2853.5 2079.8 L2857.3 2081.2 L2861.1 2081.5 L2865.0 2079.2 L2868.8 2080.0 L2872.6 2079.5 L2876.5 2082.6 L2880.3 2083.9 L2884.1 2082.0 L2888.0 2082.4 L2891.8 2083.1 L2895.6 2082.0 L2899.5 2083.0 L2903.3 2079.2 L2907.1 2079.7 L2911.0 2080.5 L2914.8 2079.4 L2918.6 2081.6 L2922.5 2082.4 L2926.3 2082.9 L2930.1 2078.3 L2934.0 2082.0 L2937.8 2082.7 L2941.6 2081.0 L2945.5 2083.9 L2949.3 2081.9 L2953.1 2080.6 L2957.0 2085.3 L2960.8 2078.5 L2964.6 2082.6 L2968.5 2080.6 L2972.3 2084.2 L2976.1 2085.7 L2980.0 2080.6 L2983.8 2084.8 L2987.6 2079.8 L2991.5 2084.4 L2995.3 2080.3 L2999.1 2082.0 L3003.0 2083.1 L3006.8 2079.7 L3010.6 2081.0 L3014.5 2081.2 L3018.3 2080.3 L3022.2 2082.1 L3026.0 2081.7 L3029.8 2079.6 L3033.7 2082.7 L3037.5 2080.3 L3041.3 2080.5 L3045.2 2080.8 L3049.0 2080.0 L3052.8 2079.5 L3056.7 2082.1 L3060.5 2083.9 L3064.3 2080.7 L3068.2 2081.3 L3072.0 2083.1 L3075.8 2080.0 L3079.7 2082.4 L3083.5 2082.5 L3087.3 2081.2 L3091.2 2084.6 L3095.0 2081.9 L3098.8 2080.1 L3102.7 2080.0 L3106.5 2081.8 L3110.3 2080.3 L3114.2 2079.6 L3118.0 2080.4 L3121.8 2081.5 L3125.7 2079.7 L3129.5 2078.2 L3133.3 2081.5 L3137.2 2081.2 L3141.0 2079.1 L3144.8 2080.4 L3148.7 2078.9 L3152.5 2081.1 L3156.3 2079.4 L3160.2 2081.9 L3164.0 2082.8 L3167.8 2079.5 L3171.7 2081.6 L3175.5 2081.5 L3179.3 2079.6 L3183.2 2078.5 L3187.0 2082.7 L3190.8 2081.4 L3194.7 2080.6 L3198.5 2077.4 L3202.3 2080.4 L3206.2 2082.1 L3210.0 2077.6 L3213.8 2078.3 L3217.7 2082.3 L3221.5 2080.9 L3225.3 2081.7 L3229.2 2079.6 L3233.0 2080.0 L3236.8 2084.1 L3240.7 2078.3 L3244.5 2079.6 L3248.3 2080.1 L3252.2 2078.4 L3256.0 2085.0 L3259.8 2080.4 L3263.7 2082.7 L3267.5 2078.6 L3271.3 2079.2 L3275.2 2077.0 L3279.0 2080.0 L3282.8 2080.7 L3286.7 2078.9 L3290.5 2081.8 L3294.3 2081.6 L3298.2 2079.2 L3302.0 2076.9 L3305.8 2082.0 L3309.7 2081.1 L3313.5 2082.7 L3317.3 2078.9 L3321.2 2079.6 L3325.0 2081.7 L3328.8 2081.4 L3332.7 2081.3 L3336.5 2076.2 L3340.3 2080.1 L3344.2 2077.4 L3348.0 2081.6 L3351.8 2079.2 L3355.7 2079.0 L3359.5 2078.3 L3363.3 2081.0 L3367.2 2081.6 L3371.0 2084.0 L3374.8 2083.5 L3378.7 2081.0 L3382.5 2084.3 L3386.3 2079.3 L3390.2 2081.2 L3394.0 2078.3 L3397.8 2080.2 L3401.7 2080.3 L3405.5 2080.0 L3409.3 2082.4 L3413.2 2082.7 L3417.0 2083.5 L3420.8 2083.5 L3424.7 2083.0 L3428.5 2083.2 L3432.3 2079.6 L3436.2 2080.3 L3440.0 2081.6 L3443.8 2081.8 L3447.7 2078.8 L3451.5 2083.7 L3455.3 2080.0 L3459.2 2081.0 L3463.0 2083.9 L3466.8 2080.7 L3470.7 2080.0 L3474.5 2079.4 L3478.3 2080.8 L3482.2 2082.8 L3486.0 2081.2 L3489.8 2080.7 L3493.7 2081.4 L3497.5 2077.5 L3501.3 2080.0 L3505.2 2080.4 L3509.0 2079.2 L3512.8 2079.1 L3516.7 2078.8 L3520.5 2079.5 L3524.3 2079.6 L3528.2 2079.6 L3532.0 2079.6" fill="none" stroke="#F2CC0C" stroke-width="2" stroke-linejoin="round"/><path d="M2500.8 1880.6 L2504.6 1873.0 L2508.5 1884.1 L2512.3 1882.0 L2516.1 1901.0 L2520.0 1884.2 L2523.8 1876.8 L2527.6 1886.3 L2531.5 1888.9 L2535.3 1876.1 L2539.1 1886.5 L2543.0 1874.1 L2546.8 1884.2 L2550.6 1877.0 L2554.5 1875.8 L2558.3 1892.3 L2562.1 1879.9 L2566.0 1899.8 L2569.8 1892.3 L2573.6 1874.3 L2577.5 1889.4 L2581.3 1886.5 L2585.1 1881.8 L2589.0 1871.2 L2592.8 1871.6 L2596.6 1868.0 L2600.5 1890.8 L2604.3 1874.6 L2608.1 1882.8 L2612.0 1879.1 L2615.8 1881.8 L2619.6 1883.6 L2623.5 1899.5 L2627.3 1885.8 L2631.1 1881.3 L2635.0 1892.8 L2638.8 1886.9 L2642.6 1876.5 L2646.5 1881.2 L2650.3 1900.6 L2654.1 1906.2 L2658.0 1885.7 L2661.8 1877.1 L2665.6 1885.7 L2669.5 1880.1 L2673.3 1889.2 L2677.1 1886.6 L2681.0 1891.9 L2684.8 1885.5 L2688.6 1879.8 L2692.5 1895.2 L2696.3 1882.5 L2700.1 1886.2 L2704.0 1886.5 L2707.8 1885.7 L2711.6 1892.5 L2715.5 1867.4 L2719.3 1877.1 L2723.1 1879.5 L2727.0 1873.0 L2730.8 1875.8 L2734.6 1895.8 L2738.5 1894.5 L2742.3 1871.8 L2746.1 1882.6 L2750.0 1879.5 L2753.8 1867.9 L2757.6 1869.7 L2761.5 1873.7 L2765.3 1871.8 L2769.1 1882.5 L2773.0 1848.0 L2776.8 1880.2 L2780.6 1887.2 L2784.5 1874.1 L2788.3 1894.5 L2792.1 1865.0 L2796.0 1885.4 L2799.8 1872.7 L2803.6 1890.1 L2807.5 1890.0 L2811.3 1875.5 L2815.1 1892.3 L2819.0 1875.9 L2822.8 1874.1 L2826.6 1894.0 L2830.5 1883.8 L2834.3 1880.2 L2838.1 1876.8 L2842.0 1875.3 L2845.8 1888.4 L2849.6 1884.6 L2853.5 1875.8 L2857.3 1877.9 L2861.1 1890.4 L2865.0 1876.1 L2868.8 1882.7 L2872.6 1880.3 L2876.5 1890.2 L2880.3 1877.0 L2884.1 1885.4 L2888.0 1883.1 L2891.8 1890.3 L2895.6 1871.5 L2899.5 1896.4 L2903.3 1876.4 L2907.1 1881.2 L2911.0 1894.1 L2914.8 1897.2 L2918.6 1864.7 L2922.5 1873.3 L2926.3 1887.2 L2930.1 1877.9 L2934.0 1877.8 L2937.8 1883.9 L2941.6 1888.6 L2945.5 1883.1 L2949.3 1886.2 L2953.1 1873.3 L2957.0 1889.9 L2960.8 1884.3 L2964.6 1887.8 L2968.5 1878.3 L2972.3 1877.7 L2976.1 1874.6 L2980.0 1887.6 L2983.8 1879.1 L2987.6 1882.7 L2991.5 1888.4 L2995.3 1886.3 L2999.1 1880.0 L3003.0 1890.3 L3006.8 1874.1 L3010.6 1889.3 L3014.5 1870.6 L3018.3 1889.6 L3022.2 1896.4 L3026.0 1887.0 L3029.8 1884.2 L3033.7 1891.8 L3037.5 1882.2 L3041.3 1881.5 L3045.2 1877.1 L3049.0 1895.0 L3052.8 1883.6 L3056.7 1887.2 L3060.5 1888.1 L3064.3 1896.4 L3068.2 1882.0 L3072.0 1888.0 L3075.8 1889.4 L3079.7 1887.2 L3083.5 1884.6 L3087.3 1860.0 L3091.2 1897.3 L3095.0 1854.2 L3098.8 1874.8 L3102.7 1895.6 L3106.5 1877.5 L3110.3 1878.7 L3114.2 1885.9 L3118.0 1893.7 L3121.8 1881.0 L3125.7 1880.0 L3129.5 1886.3 L3133.3 1888.6 L3137.2 1881.6 L3141.0 1871.8 L3144.8 1876.7 L3148.7 1862.2 L3152.5 1873.7 L3156.3 1864.8 L3160.2 1886.3 L3164.0 1889.3 L3167.8 1888.8 L3171.7 1895.3 L3175.5 1885.6 L3179.3 1899.5 L3183.2 1896.1 L3187.0 1879.8 L3190.8 1888.2 L3194.7 1880.0 L3198.5 1889.1 L3202.3 1892.3 L3206.2 1887.0 L3210.0 1891.7 L3213.8 1883.5 L3217.7 1890.0 L3221.5 1893.4 L3225.3 1886.1 L3229.2 1892.9 L3233.0 1885.7 L3236.8 1870.9 L3240.7 1884.9 L3244.5 1890.4 L3248.3 1890.5 L3252.2 1871.2 L3256.0 1895.3 L3259.8 1892.0 L3263.7 1889.0 L3267.5 1897.0 L3271.3 1877.3 L3275.2 1864.0 L3279.0 1892.3 L3282.8 1877.5 L3286.7 1872.0 L3290.5 1866.0 L3294.3 1883.1 L3298.2 1882.8 L3302.0 1883.3 L3305.8 1870.2 L3309.7 1886.5 L3313.5 1878.0 L3317.3 1890.7 L3321.2 1903.6 L3325.0 1880.2 L3328.8 1881.3 L3332.7 1891.1 L3336.5 1877.3 L3340.3 1878.6 L3344.2 1881.0 L3348.0 1888.2 L3351.8 1881.7 L3355.7 1891.1 L3359.5 1868.8 L3363.3 1885.4 L3367.2 1884.0 L3371.0 1884.5 L3374.8 1896.9 L3378.7 1890.0 L3382.5 1892.0 L3386.3 1884.9 L3390.2 1858.3 L3394.0 1895.0 L3397.8 1896.7 L3401.7 1883.1 L3405.5 1868.3 L3409.3 1879.8 L3413.2 1878.8 L3417.0 1887.9 L3420.8 1896.6 L3424.7 1884.1 L3428.5 1875.1 L3432.3 1891.3 L3436.2 1894.2 L3440.0 1872.8 L3443.8 1889.1 L3447.7 1883.5 L3451.5 1893.2 L3455.3 1896.9 L3459.2 1895.9 L3463.0 1894.9 L3466.8 1889.9 L3470.7 1896.5 L3474.5 1892.4 L3478.3 1881.4 L3482.2 1896.3 L3486.0 1881.8 L3489.8 1882.7 L3493.7 1884.3 L3497.5 1893.5 L3501.3 1878.5 L3505.2 1886.3 L3509.0 1879.3 L3512.8 1867.1 L3516.7 1892.3 L3520.5 1888.2 L3524.3 1892.0 L3528.2 1874.6 L3532.0 1889.0 L3532.0 2167.5 L2500.8 2167.5 Z" fill="#8AB8FF" fill-opacity="0.1"/><path d="M2500.8 1880.6 L2504.6 1873.0 L2508.5 1884.1 L2512.3 1882.0 L2516.1 1901.0 L2520.0 1884.2 L2523.8 1876.8 L2527.6 1886.3 L2531.5 1888.9 L2535.3 1876.1 L2539.1 1886.5 L2543.0 1874.1 L2546.8 1884.2 L2550.6 1877.0 L2554.5 1875.8 L2558.3 1892.3 L2562.1 1879.9 L2566.0 1899.8 L2569.8 1892.3 L2573.6 1874.3 L2577.5 1889.4 L2581.3 1886.5 L2585.1 1881.8 L2589.0 1871.2 L2592.8 1871.6 L2596.6 1868.0 L2600.5 1890.8 L2604.3 1874.6 L2608.1 1882.8 L2612.0 1879.1 L2615.8 1881.8 L2619.6 1883.6 L2623.5 1899.5 L2627.3 1885.8 L2631.1 1881.3 L2635.0 1892.8 L2638.8 1886.9 L2642.6 1876.5 L2646.5 1881.2 L2650.3 1900.6 L2654.1 1906.2 L2658.0 1885.7 L2661.8 1877.1 L2665.6 1885.7 L2669.5 1880.1 L2673.3 1889.2 L2677.1 1886.6 L2681.0 1891.9 L2684.8 1885.5 L2688.6 1879.8 L2692.5 1895.2 L2696.3 1882.5 L2700.1 1886.2 L2704.0 1886.5 L2707.8 1885.7 L2711.6 1892.5 L2715.5 1867.4 L2719.3 1877.1 L2723.1 1879.5 L2727.0 1873.0 L2730.8 1875.8 L2734.6 1895.8 L2738.5 1894.5 L2742.3 1871.8 L2746.1 1882.6 L2750.0 1879.5 L2753.8 1867.9 L2757.6 1869.7 L2761.5 1873.7 L2765.3 1871.8 L2769.1 1882.5 L2773.0 1848.0 L2776.8 1880.2 L2780.6 1887.2 L2784.5 1874.1 L2788.3 1894.5 L2792.1 1865.0 L2796.0 1885.4 L2799.8 1872.7 L2803.6 1890.1 L2807.5 1890.0 L2811.3 1875.5 L2815.1 1892.3 L2819.0 1875.9 L2822.8 1874.1 L2826.6 1894.0 L2830.5 1883.8 L2834.3 1880.2 L2838.1 1876.8 L2842.0 1875.3 L2845.8 1888.4 L2849.6 1884.6 L2853.5 1875.8 L2857.3 1877.9 L2861.1 1890.4 L2865.0 1876.1 L2868.8 1882.7 L2872.6 1880.3 L2876.5 1890.2 L2880.3 1877.0 L2884.1 1885.4 L2888.0 1883.1 L2891.8 1890.3 L2895.6 1871.5 L2899.5 1896.4 L2903.3 1876.4 L2907.1 1881.2 L2911.0 1894.1 L2914.8 1897.2 L2918.6 1864.7 L2922.5 1873.3 L2926.3 1887.2 L2930.1 1877.9 L2934.0 1877.8 L2937.8 1883.9 L2941.6 1888.6 L2945.5 1883.1 L2949.3 1886.2 L2953.1 1873.3 L2957.0 1889.9 L2960.8 1884.3 L2964.6 1887.8 L2968.5 1878.3 L2972.3 1877.7 L2976.1 1874.6 L2980.0 1887.6 L2983.8 1879.1 L2987.6 1882.7 L2991.5 1888.4 L2995.3 1886.3 L2999.1 1880.0 L3003.0 1890.3 L3006.8 1874.1 L3010.6 1889.3 L3014.5 1870.6 L3018.3 1889.6 L3022.2 1896.4 L3026.0 1887.0 L3029.8 1884.2 L3033.7 1891.8 L3037.5 1882.2 L3041.3 1881.5 L3045.2 1877.1 L3049.0 1895.0 L3052.8 1883.6 L3056.7 1887.2 L3060.5 1888.1 L3064.3 1896.4 L3068.2 1882.0 L3072.0 1888.0 L3075.8 1889.4 L3079.7 1887.2 L3083.5 1884.6 L3087.3 1860.0 L3091.2 1897.3 L3095.0 1854.2 L3098.8 1874.8 L3102.7 1895.6 L3106.5 1877.5 L3110.3 1878.7 L3114.2 1885.9 L3118.0 1893.7 L3121.8 1881.0 L3125.7 1880.0 L3129.5 1886.3 L3133.3 1888.6 L3137.2 1881.6 L3141.0 1871.8 L3144.8 1876.7 L3148.7 1862.2 L3152.5 1873.7 L3156.3 1864.8 L3160.2 1886.3 L3164.0 1889.3 L3167.8 1888.8 L3171.7 1895.3 L3175.5 1885.6 L3179.3 1899.5 L3183.2 1896.1 L3187.0 1879.8 L3190.8 1888.2 L3194.7 1880.0 L3198.5 1889.1 L3202.3 1892.3 L3206.2 1887.0 L3210.0 1891.7 L3213.8 1883.5 L3217.7 1890.0 L3221.5 1893.4 L3225.3 1886.1 L3229.2 1892.9 L3233.0 1885.7 L3236.8 1870.9 L3240.7 1884.9 L3244.5 1890.4 L3248.3 1890.5 L3252.2 1871.2 L3256.0 1895.3 L3259.8 1892.0 L3263.7 1889.0 L3267.5 1897.0 L3271.3 1877.3 L3275.2 1864.0 L3279.0 1892.3 L3282.8 1877.5 L3286.7 1872.0 L3290.5 1866.0 L3294.3 1883.1 L3298.2 1882.8 L3302.0 1883.3 L3305.8 1870.2 L3309.7 1886.5 L3313.5 1878.0 L3317.3 1890.7 L3321.2 1903.6 L3325.0 1880.2 L3328.8 1881.3 L3332.7 1891.1 L3336.5 1877.3 L3340.3 1878.6 L3344.2 1881.0 L3348.0 1888.2 L3351.8 1881.7 L3355.7 1891.1 L3359.5 1868.8 L3363.3 1885.4 L3367.2 1884.0 L3371.0 1884.5 L3374.8 1896.9 L3378.7 1890.0 L3382.5 1892.0 L3386.3 1884.9 L3390.2 1858.3 L3394.0 1895.0 L3397.8 1896.7 L3401.7 1883.1 L3405.5 1868.3 L3409.3 1879.8 L3413.2 1878.8 L3417.0 1887.9 L3420.8 1896.6 L3424.7 1884.1 L3428.5 1875.1 L3432.3 1891.3 L3436.2 1894.2 L3440.0 1872.8 L3443.8 1889.1 L3447.7 1883.5 L3451.5 1893.2 L3455.3 1896.9 L3459.2 1895.9 L3463.0 1894.9 L3466.8 1889.9 L3470.7 1896.5 L3474.5 1892.4 L3478.3 1881.4 L3482.2 1896.3 L3486.0 1881.8 L3489.8 1882.7 L3493.7 1884.3 L3497.5 1893.5 L3501.3 1878.5 L3505.2 1886.3 L3509.0 1879.3 L3512.8 1867.1 L3516.7 1892.3 L3520.5 1888.2 L3524.3 1892.0 L3528.2 1874.6 L3532.0 1889.0" fill="none" stroke="#8AB8FF" stroke-width="2" stroke-linejoin="round"/></g></svg>
<svg style="position:absolute;left:389px;top:180px" width="32" height="32" viewBox="0 0 32 32"><path d="M13.6 5.2 Q16 1.6 18.4 5.2 L29.6 24.6 Q31.6 28.6 27.2 28.6 L4.8 28.6 Q0.4 28.6 2.4 24.6 Z" fill="none" stroke="#9a9aa8" stroke-width="2.6" stroke-linejoin="round"/><path d="M16 12 V18.6" stroke="#9a9aa8" stroke-width="2.6" stroke-linecap="round"/><circle cx="16" cy="23" r="1.5" fill="#9a9aa8"/></svg>
<svg style="position:absolute;left:317px;top:864px" width="32" height="32" viewBox="0 0 32 32"><path d="M13.6 5.2 Q16 1.6 18.4 5.2 L29.6 24.6 Q31.6 28.6 27.2 28.6 L4.8 28.6 Q0.4 28.6 2.4 24.6 Z" fill="none" stroke="#9a9aa8" stroke-width="2.6" stroke-linejoin="round"/><path d="M16 12 V18.6" stroke="#9a9aa8" stroke-width="2.6" stroke-linecap="round"/><circle cx="16" cy="23" r="1.5" fill="#9a9aa8"/></svg>
<svg style="position:absolute;left:381px;top:864px" width="32" height="32" viewBox="0 0 32 32"><path d="M13.6 5.2 Q16 1.6 18.4 5.2 L29.6 24.6 Q31.6 28.6 27.2 28.6 L4.8 28.6 Q0.4 28.6 2.4 24.6 Z" fill="none" stroke="#F5B02A" stroke-width="2.6" stroke-linejoin="round"/><path d="M16 12 V18.6" stroke="#F5B02A" stroke-width="2.6" stroke-linecap="round"/><circle cx="16" cy="23" r="1.5" fill="#F5B02A"/></svg>
<svg style="position:absolute;left:1650px;top:864px" width="32" height="32" viewBox="0 0 32 32"><path d="M13.6 5.2 Q16 1.6 18.4 5.2 L29.6 24.6 Q31.6 28.6 27.2 28.6 L4.8 28.6 Q0.4 28.6 2.4 24.6 Z" fill="none" stroke="#9a9aa8" stroke-width="2.6" stroke-linejoin="round"/><path d="M16 12 V18.6" stroke="#9a9aa8" stroke-width="2.6" stroke-linecap="round"/><circle cx="16" cy="23" r="1.5" fill="#9a9aa8"/></svg>
<div style="position:absolute;left:3584px;top:188px;width:16px;height:1658px;background:#2e2f36;border-radius:8px;"></div>
</body></html>
